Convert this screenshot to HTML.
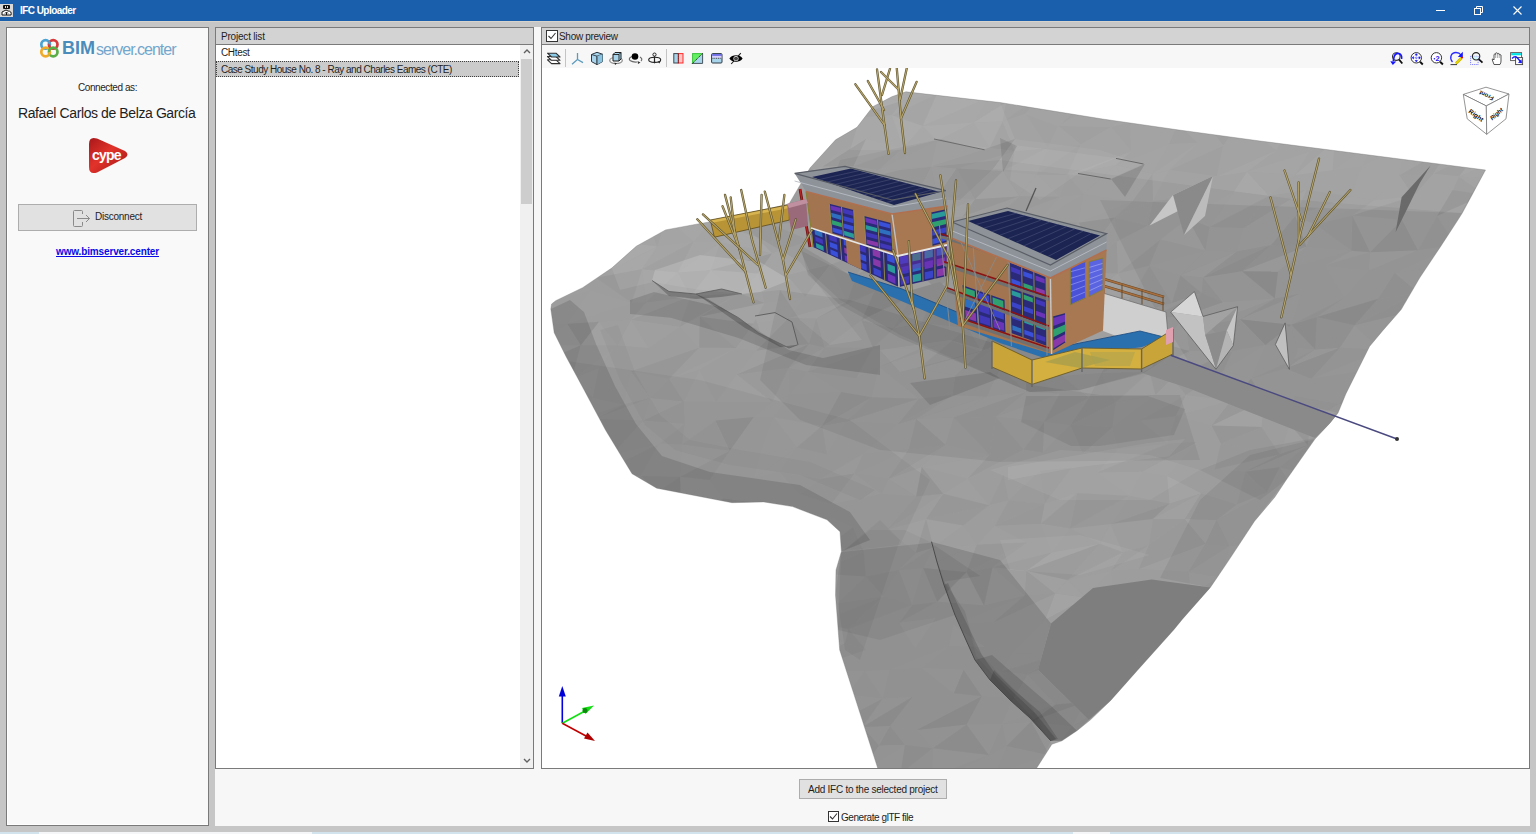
<!DOCTYPE html>
<html><head><meta charset="utf-8">
<style>
*{box-sizing:border-box;margin:0;padding:0}
html,body{width:1536px;height:834px;overflow:hidden;background:#c6c6c6;font-family:"Liberation Sans",sans-serif;color:#1e1e1e}
.abs{position:absolute}
#title{left:0;top:0;width:1536px;height:22px;background:#1a5fac;border-bottom:1px solid #d6d2cc}
#title .t{left:20px;top:5px;font-size:10px;color:#fff;font-weight:bold;letter-spacing:-0.55px;line-height:12px}
#leftp{left:6px;top:27px;width:203px;height:799px;border:1px solid #7a7a7a;background:#f9f9f9;box-shadow:inset 1px -1px 0 #fff}
#rightc{left:215px;top:27px;width:1315px;height:799px;background:#f7f7f7}
.panel{border:1px solid #7a7a7a;background:#fff}
.hdr{left:0;top:0;right:0;height:17px;background:#d3d3d3;border-bottom:1px solid #7a7a7a}
.txt{font-size:10px;line-height:12px;white-space:nowrap}
</style></head>
<body>
<div id="title" class="abs">
  <svg class="abs" style="left:0;top:4px" width="13" height="13" viewBox="0 0 13 13">
    <rect x="0" y="0" width="13" height="13" fill="#d8d8d8"/>
    <rect x="3" y="1" width="7" height="4" rx="1" fill="#111"/>
    <rect x="5" y="2" width="1" height="2" fill="#ddd"/><rect x="7" y="2" width="1" height="2" fill="#ddd"/>
    <path d="M2 11 Q1 7 4 7 Q6 5 8 7 Q12 7 11 11 Z" fill="#fff" stroke="#111" stroke-width="1"/>
    <path d="M6.5 11 V8.5 M5 9.5 L6.5 8 L8 9.5" stroke="#111" stroke-width="1" fill="none"/>
  </svg>
  <div class="abs t">IFC Uploader</div>
  <div class="abs" style="left:1436px;top:10px;width:9px;height:1px;background:#fff"></div>
  <svg class="abs" style="left:1473px;top:5px" width="11" height="11" viewBox="0 0 11 11">
    <rect x="1.5" y="3.5" width="6" height="6" fill="none" stroke="#fff"/>
    <path d="M3.5 3.5 V1.5 H9.5 V7.5 H7.5" fill="none" stroke="#fff"/>
  </svg>
  <svg class="abs" style="left:1512px;top:5px" width="11" height="11" viewBox="0 0 11 11">
    <path d="M1.5 1.5 L9.5 9.5 M9.5 1.5 L1.5 9.5" stroke="#fff" stroke-width="1.1"/>
  </svg>
</div>

<div id="leftp" class="abs">
  <svg class="abs" style="left:32px;top:10px" width="21" height="21" viewBox="0 0 21 21">
    <g fill="none" stroke-width="2.7">
      <circle cx="6.6" cy="6.4" r="4.3" stroke="#4aa3d2"/>
      <circle cx="14.2" cy="6.4" r="4.3" stroke="#d63a3c"/>
      <circle cx="6.6" cy="14" r="4.3" stroke="#efaa2a"/>
      <circle cx="14.2" cy="14" r="4.3" stroke="#5aae46"/>
      <path d="M9.6 3.4 A4.3 4.3 0 0 1 10.9 6.4" stroke="#4aa3d2"/>
      <path d="M10.9 14 A4.3 4.3 0 0 1 9.6 17" stroke="#efaa2a"/>
    </g>
  </svg>
  <div class="abs" style="left:55px;top:9px;font-size:18px;font-weight:bold;color:#4a8dbd;line-height:22px;letter-spacing:0px">BIM</div>
  <div class="abs" style="left:89px;top:12px;font-size:16px;color:#73a6cc;line-height:20px;letter-spacing:-1px">server.center</div>
  <div class="abs txt" style="left:71px;top:54px;letter-spacing:-0.42px">Connected as:</div>
  <div class="abs" style="left:11px;top:77px;font-size:14px;line-height:16px;letter-spacing:-0.4px;white-space:nowrap">Rafael Carlos de Belza Garc&iacute;a</div>
  <svg class="abs" style="left:81px;top:108px" width="42" height="39" viewBox="0 0 42 39">
    <defs><linearGradient id="cg" x1="0" y1="0" x2="1" y2="1"><stop offset="0" stop-color="#a8171a"/><stop offset="0.45" stop-color="#e2332a"/><stop offset="1" stop-color="#9e1417"/></linearGradient></defs>
    <path d="M1 8 Q1 0 9 2.5 L37 15 Q42 18.5 37 22 L9 36.5 Q1 39 1 31 Z" fill="url(#cg)"/>
    <text x="4" y="24" font-family="Liberation Sans" font-weight="bold" font-size="14" fill="#fff" letter-spacing="-0.8">cype</text>
  </svg>
  <div class="abs" style="left:11px;top:176px;width:179px;height:27px;background:#e1e1e1;border:1px solid #adadad"></div>
  <svg class="abs" style="left:66px;top:182px" width="18" height="17" viewBox="0 0 18 17">
    <path d="M9.5 4 V1.5 Q9.5 0.5 8.5 0.5 H1.5 Q0.5 0.5 0.5 1.5 V15.5 Q0.5 16.5 1.5 16.5 H8.5 Q9.5 16.5 9.5 15.5 V12" fill="none" stroke="#8a8a8a" stroke-width="1"/>
    <path d="M4 8.5 H16.5 M13 5 L16.5 8.5 L13 12" fill="none" stroke="#8a8a8a" stroke-width="1"/>
  </svg>
  <div class="abs txt" style="left:88px;top:183px;letter-spacing:-0.25px">Disconnect</div>
  <div class="abs txt" style="left:49px;top:218px;font-weight:bold;color:#0a0ae6;text-decoration:underline;letter-spacing:-0.14px">www.bimserver.center</div>
</div>
<div id="rightc" class="abs"></div>

<!-- list panel -->
<div id="listp" class="abs panel" style="left:215px;top:27px;width:319px;height:742px">
  <div class="abs hdr"></div>
  <div class="abs txt" style="left:5px;top:3px;letter-spacing:-0.2px">Project list</div>
  <div class="abs txt" style="left:5px;top:19px;letter-spacing:-0.35px">CHtest</div>
  <div class="abs" style="left:0px;top:33px;width:303px;height:16px;background:#cbcbcb;border:1px dotted #404040"></div>
  <div class="abs txt" style="left:5px;top:36px;letter-spacing:-0.5px">Case Study House No. 8 - Ray and Charles Eames (CTE)</div>
  <div class="abs" style="left:304px;top:17px;width:13px;height:723px;background:#f0f0f0"></div>
  <div class="abs" style="left:305px;top:31px;width:11px;height:145px;background:#cdcdcd"></div>
  <svg class="abs" style="left:307px;top:20px" width="8" height="6" viewBox="0 0 8 6"><path d="M1 5 L4 2 L7 5" fill="none" stroke="#606060" stroke-width="1.4"/></svg>
  <svg class="abs" style="left:307px;top:730px" width="8" height="6" viewBox="0 0 8 6"><path d="M1 1 L4 4 L7 1" fill="none" stroke="#606060" stroke-width="1.4"/></svg>
</div>

<!-- preview panel -->
<div id="prevp" class="abs panel" style="left:541px;top:27px;width:989px;height:742px">
  <div class="abs hdr"></div>
  <svg class="abs" style="left:4px;top:2px" width="12" height="12" viewBox="0 0 12 12"><rect x="0.5" y="0.5" width="11" height="11" fill="#fff" stroke="#333"/><path d="M2.5 6 L5 8.5 L9.5 3" fill="none" stroke="#333" stroke-width="1.1"/></svg>
  <div class="abs txt" style="left:17px;top:3px;letter-spacing:-0.3px">Show preview</div>
  <div class="abs" style="left:0;top:17px;width:987px;height:23px;background:#f7f7f7"></div>
  <div id="view" class="abs" style="left:0;top:40px;width:987px;height:700px;background:#fff;overflow:hidden"></div>
</div>
<!-- SCENE -->
<svg class="abs" style="left:542px;top:68px" width="987" height="700" viewBox="542 68 987 700">
<defs><clipPath id="tc"><polygon points="551.6,304.0 555.7,300.7 582.6,287.7 611.8,268.0 636.3,246.2 665.6,229.9 696.5,224.2 711.0,221.7 789.0,204.0 810.0,168.0 835.6,139.8 857.0,127.3 872.8,106.7 891.8,96.7 905.9,91.8 1000.0,102.5 1102.5,119.0 1179.0,130.0 1260.0,141.0 1485.5,170.0 1462.3,213.0 1457.9,220.0 1440.7,246.4 1419.6,278.0 1401.2,309.6 1382.7,330.7 1369.5,346.5 1359.0,367.6 1345.8,394.0 1338.0,413.0 1330.0,423.0 1315.0,439.0 1286.2,480.0 1274.7,497.3 1254.5,521.2 1228.6,560.6 1210.4,587.4 1182.6,619.0 1173.6,630.0 1137.5,670.3 1110.7,700.5 1090.5,719.8 1077.0,730.7 1062.0,740.8 1051.9,744.2 1038.5,765.2 1036.0,769.0 878.0,769.0 862.2,720.0 839.7,650.0 835.5,595.0 836.0,570.0 841.4,551.5 840.0,531.7 827.0,519.8 792.6,506.6 763.6,501.9 732.0,502.7 656.7,488.2 632.0,473.7 605.6,430.2 584.5,390.7 566.0,356.4 554.2,332.7 550.8,309.0"/></clipPath></defs>
<polygon points="551.6,304.0 555.7,300.7 582.6,287.7 611.8,268.0 636.3,246.2 665.6,229.9 696.5,224.2 711.0,221.7 789.0,204.0 810.0,168.0 835.6,139.8 857.0,127.3 872.8,106.7 891.8,96.7 905.9,91.8 1000.0,102.5 1102.5,119.0 1179.0,130.0 1260.0,141.0 1485.5,170.0 1462.3,213.0 1457.9,220.0 1440.7,246.4 1419.6,278.0 1401.2,309.6 1382.7,330.7 1369.5,346.5 1359.0,367.6 1345.8,394.0 1338.0,413.0 1330.0,423.0 1315.0,439.0 1286.2,480.0 1274.7,497.3 1254.5,521.2 1228.6,560.6 1210.4,587.4 1182.6,619.0 1173.6,630.0 1137.5,670.3 1110.7,700.5 1090.5,719.8 1077.0,730.7 1062.0,740.8 1051.9,744.2 1038.5,765.2 1036.0,769.0 878.0,769.0 862.2,720.0 839.7,650.0 835.5,595.0 836.0,570.0 841.4,551.5 840.0,531.7 827.0,519.8 792.6,506.6 763.6,501.9 732.0,502.7 656.7,488.2 632.0,473.7 605.6,430.2 584.5,390.7 566.0,356.4 554.2,332.7 550.8,309.0" fill="#9d9d9d"/>
<g clip-path="url(#tc)">
<polygon points="528.9,70.8 576.2,69.5 559.1,98.8" fill="#000000" fill-opacity="0.022"/>
<polygon points="576.2,69.5 574.8,91.6 559.1,98.8" fill="#ffffff" fill-opacity="0.054"/>
<polygon points="576.2,69.5 602.2,71.2 574.8,91.6" fill="#000000" fill-opacity="0.049"/>
<polygon points="602.2,71.2 610.4,89.0 574.8,91.6" fill="#000000" fill-opacity="0.020"/>
<polygon points="630.4,70.2 663.1,90.7 610.4,89.0" fill="#ffffff" fill-opacity="0.024"/>
<polygon points="630.4,70.2 677.1,74.1 663.1,90.7" fill="#000000" fill-opacity="0.044"/>
<polygon points="677.1,74.1 700.3,67.2 693.4,94.5" fill="#ffffff" fill-opacity="0.034"/>
<polygon points="700.3,67.2 720.6,98.4 693.4,94.5" fill="#ffffff" fill-opacity="0.033"/>
<polygon points="736.2,74.3 786.6,63.6 755.1,97.2" fill="#000000" fill-opacity="0.021"/>
<polygon points="786.6,63.6 829.6,76.5 790.8,94.1" fill="#000000" fill-opacity="0.025"/>
<polygon points="829.6,76.5 829.1,92.0 790.8,94.1" fill="#000000" fill-opacity="0.048"/>
<polygon points="829.6,76.5 857.7,71.6 829.1,92.0" fill="#000000" fill-opacity="0.036"/>
<polygon points="857.7,71.6 881.8,63.2 883.3,99.4" fill="#000000" fill-opacity="0.031"/>
<polygon points="881.8,63.2 903.3,100.6 883.3,99.4" fill="#ffffff" fill-opacity="0.026"/>
<polygon points="881.8,63.2 926.7,63.8 903.3,100.6" fill="#ffffff" fill-opacity="0.031"/>
<polygon points="926.7,63.8 937.1,93.7 903.3,100.6" fill="#ffffff" fill-opacity="0.024"/>
<polygon points="926.7,63.8 954.6,66.4 937.1,93.7" fill="#ffffff" fill-opacity="0.016"/>
<polygon points="954.6,66.4 988.5,97.2 937.1,93.7" fill="#ffffff" fill-opacity="0.027"/>
<polygon points="986.7,69.5 1006.4,102.1 988.5,97.2" fill="#ffffff" fill-opacity="0.021"/>
<polygon points="1032.6,74.8 1045.1,91.8 1006.4,102.1" fill="#ffffff" fill-opacity="0.019"/>
<polygon points="1032.6,74.8 1070.5,72.0 1045.1,91.8" fill="#000000" fill-opacity="0.024"/>
<polygon points="1070.5,72.0 1094.5,92.8 1045.1,91.8" fill="#000000" fill-opacity="0.015"/>
<polygon points="1070.5,72.0 1106.0,72.3 1094.5,92.8" fill="#000000" fill-opacity="0.024"/>
<polygon points="1106.0,72.3 1119.1,89.2 1094.5,92.8" fill="#ffffff" fill-opacity="0.020"/>
<polygon points="1106.0,72.3 1141.0,66.9 1119.1,89.2" fill="#ffffff" fill-opacity="0.012"/>
<polygon points="1141.0,66.9 1150.2,96.4 1119.1,89.2" fill="#000000" fill-opacity="0.019"/>
<polygon points="1141.0,66.9 1189.9,76.9 1150.2,96.4" fill="#000000" fill-opacity="0.023"/>
<polygon points="1189.9,76.9 1189.8,96.6 1150.2,96.4" fill="#000000" fill-opacity="0.014"/>
<polygon points="1189.9,76.9 1222.2,72.9 1189.8,96.6" fill="#ffffff" fill-opacity="0.021"/>
<polygon points="1245.6,66.2 1279.0,95.0 1228.9,94.5" fill="#000000" fill-opacity="0.016"/>
<polygon points="1280.9,64.0 1305.8,100.3 1279.0,95.0" fill="#ffffff" fill-opacity="0.038"/>
<polygon points="1280.9,64.0 1328.4,68.6 1305.8,100.3" fill="#000000" fill-opacity="0.016"/>
<polygon points="1328.4,68.6 1366.3,68.4 1332.4,90.4" fill="#ffffff" fill-opacity="0.040"/>
<polygon points="1366.3,68.4 1385.8,99.6 1332.4,90.4" fill="#ffffff" fill-opacity="0.017"/>
<polygon points="1366.3,68.4 1405.0,74.9 1385.8,99.6" fill="#000000" fill-opacity="0.027"/>
<polygon points="1405.0,74.9 1406.0,90.9 1385.8,99.6" fill="#ffffff" fill-opacity="0.026"/>
<polygon points="1405.0,74.9 1418.0,65.9 1406.0,90.9" fill="#000000" fill-opacity="0.030"/>
<polygon points="1418.0,65.9 1453.7,101.4 1406.0,90.9" fill="#ffffff" fill-opacity="0.013"/>
<polygon points="1418.0,65.9 1475.8,69.6 1453.7,101.4" fill="#000000" fill-opacity="0.060"/>
<polygon points="1475.8,69.6 1476.7,101.5 1453.7,101.4" fill="#000000" fill-opacity="0.023"/>
<polygon points="1475.8,69.6 1513.5,68.6 1476.7,101.5" fill="#ffffff" fill-opacity="0.022"/>
<polygon points="1513.5,68.6 1529.2,96.6 1476.7,101.5" fill="#000000" fill-opacity="0.014"/>
<polygon points="1513.5,68.6 1527.8,71.8 1529.2,96.6" fill="#000000" fill-opacity="0.017"/>
<polygon points="1580.7,66.8 1600.1,67.7 1580.9,101.7" fill="#000000" fill-opacity="0.016"/>
<polygon points="1600.1,67.7 1621.7,98.1 1580.9,101.7" fill="#ffffff" fill-opacity="0.043"/>
<polygon points="559.1,98.8 574.8,91.6 524.2,124.9" fill="#ffffff" fill-opacity="0.036"/>
<polygon points="574.8,91.6 610.4,89.0 568.3,117.5" fill="#000000" fill-opacity="0.027"/>
<polygon points="610.4,89.0 594.2,123.5 568.3,117.5" fill="#000000" fill-opacity="0.012"/>
<polygon points="663.1,90.7 693.4,94.5 627.7,116.6" fill="#ffffff" fill-opacity="0.038"/>
<polygon points="693.4,94.5 675.4,125.3 627.7,116.6" fill="#000000" fill-opacity="0.012"/>
<polygon points="755.1,97.2 756.0,116.3 712.7,117.3" fill="#000000" fill-opacity="0.016"/>
<polygon points="790.8,94.1 770.4,117.2 756.0,116.3" fill="#ffffff" fill-opacity="0.028"/>
<polygon points="883.3,99.4 846.2,118.6 816.7,114.2" fill="#000000" fill-opacity="0.031"/>
<polygon points="883.3,99.4 903.3,100.6 846.2,118.6" fill="#ffffff" fill-opacity="0.043"/>
<polygon points="903.3,100.6 891.7,115.2 846.2,118.6" fill="#000000" fill-opacity="0.032"/>
<polygon points="937.1,93.7 922.7,125.9 891.7,115.2" fill="#000000" fill-opacity="0.021"/>
<polygon points="937.1,93.7 988.5,97.2 922.7,125.9" fill="#ffffff" fill-opacity="0.036"/>
<polygon points="988.5,97.2 1006.4,102.1 973.5,122.6" fill="#000000" fill-opacity="0.012"/>
<polygon points="1006.4,102.1 1002.6,121.6 973.5,122.6" fill="#ffffff" fill-opacity="0.045"/>
<polygon points="1045.1,91.8 1025.4,113.9 1002.6,121.6" fill="#000000" fill-opacity="0.018"/>
<polygon points="1094.5,92.8 1119.1,89.2 1058.4,126.1" fill="#000000" fill-opacity="0.018"/>
<polygon points="1150.2,96.4 1130.5,122.3 1110.8,126.9" fill="#ffffff" fill-opacity="0.017"/>
<polygon points="1150.2,96.4 1189.8,96.6 1130.5,122.3" fill="#ffffff" fill-opacity="0.018"/>
<polygon points="1189.8,96.6 1177.6,123.6 1130.5,122.3" fill="#ffffff" fill-opacity="0.020"/>
<polygon points="1228.9,94.5 1209.7,127.4 1177.6,123.6" fill="#ffffff" fill-opacity="0.019"/>
<polygon points="1279.0,95.0 1239.8,121.0 1209.7,127.4" fill="#ffffff" fill-opacity="0.028"/>
<polygon points="1305.8,100.3 1332.4,90.4 1291.7,126.0" fill="#ffffff" fill-opacity="0.029"/>
<polygon points="1332.4,90.4 1327.7,123.3 1291.7,126.0" fill="#000000" fill-opacity="0.036"/>
<polygon points="1332.4,90.4 1385.8,99.6 1327.7,123.3" fill="#000000" fill-opacity="0.023"/>
<polygon points="1385.8,99.6 1365.0,126.2 1327.7,123.3" fill="#000000" fill-opacity="0.019"/>
<polygon points="1406.0,90.9 1390.4,123.0 1365.0,126.2" fill="#000000" fill-opacity="0.029"/>
<polygon points="1406.0,90.9 1453.7,101.4 1390.4,123.0" fill="#000000" fill-opacity="0.028"/>
<polygon points="1453.7,101.4 1439.6,125.6 1390.4,123.0" fill="#000000" fill-opacity="0.045"/>
<polygon points="1476.7,101.5 1464.0,124.5 1439.6,125.6" fill="#000000" fill-opacity="0.018"/>
<polygon points="1476.7,101.5 1529.2,96.6 1464.0,124.5" fill="#ffffff" fill-opacity="0.052"/>
<polygon points="1529.2,96.6 1510.7,121.4 1464.0,124.5" fill="#ffffff" fill-opacity="0.019"/>
<polygon points="1529.2,96.6 1554.1,89.7 1510.7,121.4" fill="#000000" fill-opacity="0.027"/>
<polygon points="1554.1,89.7 1541.0,118.8 1510.7,121.4" fill="#ffffff" fill-opacity="0.031"/>
<polygon points="1580.9,101.7 1576.0,121.9 1541.0,118.8" fill="#ffffff" fill-opacity="0.026"/>
<polygon points="1580.9,101.7 1621.7,98.1 1576.0,121.9" fill="#000000" fill-opacity="0.026"/>
<polygon points="1621.7,98.1 1599.9,122.4 1576.0,121.9" fill="#ffffff" fill-opacity="0.028"/>
<polygon points="524.2,124.9 568.3,117.5 559.8,150.9" fill="#ffffff" fill-opacity="0.026"/>
<polygon points="568.3,117.5 594.2,123.5 589.5,144.0" fill="#000000" fill-opacity="0.020"/>
<polygon points="627.7,116.6 654.6,150.3 625.6,146.7" fill="#ffffff" fill-opacity="0.057"/>
<polygon points="627.7,116.6 675.4,125.3 654.6,150.3" fill="#ffffff" fill-opacity="0.043"/>
<polygon points="675.4,125.3 682.0,149.1 654.6,150.3" fill="#ffffff" fill-opacity="0.036"/>
<polygon points="770.4,117.2 816.7,114.2 804.8,145.6" fill="#ffffff" fill-opacity="0.020"/>
<polygon points="891.7,115.2 922.7,125.9 903.2,148.1" fill="#ffffff" fill-opacity="0.030"/>
<polygon points="922.7,125.9 973.5,122.6 936.9,141.0" fill="#ffffff" fill-opacity="0.036"/>
<polygon points="973.5,122.6 1002.6,121.6 989.7,147.8" fill="#ffffff" fill-opacity="0.025"/>
<polygon points="1002.6,121.6 1014.6,151.1 989.7,147.8" fill="#000000" fill-opacity="0.033"/>
<polygon points="1025.4,113.9 1058.4,126.1 1047.8,147.9" fill="#000000" fill-opacity="0.015"/>
<polygon points="1058.4,126.1 1110.8,126.9 1080.8,144.6" fill="#000000" fill-opacity="0.022"/>
<polygon points="1110.8,126.9 1130.5,122.3 1131.3,151.4" fill="#000000" fill-opacity="0.016"/>
<polygon points="1177.6,123.6 1198.0,143.0 1169.1,144.0" fill="#000000" fill-opacity="0.023"/>
<polygon points="1209.7,127.4 1239.8,121.0 1223.3,145.6" fill="#000000" fill-opacity="0.030"/>
<polygon points="1239.8,121.0 1291.7,126.0 1276.1,150.5" fill="#ffffff" fill-opacity="0.030"/>
<polygon points="1291.7,126.0 1327.7,123.3 1309.1,151.9" fill="#ffffff" fill-opacity="0.013"/>
<polygon points="1327.7,123.3 1334.6,141.0 1309.1,151.9" fill="#ffffff" fill-opacity="0.015"/>
<polygon points="1327.7,123.3 1365.0,126.2 1334.6,141.0" fill="#000000" fill-opacity="0.019"/>
<polygon points="1365.0,126.2 1374.8,142.5 1334.6,141.0" fill="#ffffff" fill-opacity="0.031"/>
<polygon points="1365.0,126.2 1390.4,123.0 1374.8,142.5" fill="#ffffff" fill-opacity="0.060"/>
<polygon points="1390.4,123.0 1405.1,144.4 1374.8,142.5" fill="#000000" fill-opacity="0.024"/>
<polygon points="1390.4,123.0 1439.6,125.6 1405.1,144.4" fill="#ffffff" fill-opacity="0.051"/>
<polygon points="1439.6,125.6 1451.0,145.5 1405.1,144.4" fill="#000000" fill-opacity="0.017"/>
<polygon points="1439.6,125.6 1464.0,124.5 1451.0,145.5" fill="#ffffff" fill-opacity="0.035"/>
<polygon points="1464.0,124.5 1479.6,150.3 1451.0,145.5" fill="#000000" fill-opacity="0.043"/>
<polygon points="1464.0,124.5 1510.7,121.4 1479.6,150.3" fill="#ffffff" fill-opacity="0.027"/>
<polygon points="1510.7,121.4 1541.0,118.8 1531.6,144.9" fill="#000000" fill-opacity="0.030"/>
<polygon points="1541.0,118.8 1545.8,139.0 1531.6,144.9" fill="#000000" fill-opacity="0.019"/>
<polygon points="1541.0,118.8 1576.0,121.9 1545.8,139.0" fill="#000000" fill-opacity="0.025"/>
<polygon points="1576.0,121.9 1600.9,139.2 1545.8,139.0" fill="#000000" fill-opacity="0.021"/>
<polygon points="559.8,150.9 589.5,144.0 525.4,174.9" fill="#000000" fill-opacity="0.059"/>
<polygon points="625.6,146.7 654.6,150.3 600.9,164.1" fill="#ffffff" fill-opacity="0.040"/>
<polygon points="654.6,150.3 645.9,167.1 600.9,164.1" fill="#000000" fill-opacity="0.043"/>
<polygon points="682.0,149.1 716.7,147.0 665.4,164.5" fill="#ffffff" fill-opacity="0.017"/>
<polygon points="716.7,147.0 713.1,170.1 665.4,164.5" fill="#000000" fill-opacity="0.032"/>
<polygon points="716.7,147.0 763.5,141.8 713.1,170.1" fill="#000000" fill-opacity="0.031"/>
<polygon points="804.8,145.6 789.4,177.2 749.1,173.0" fill="#000000" fill-opacity="0.043"/>
<polygon points="838.7,151.5 866.1,138.8 822.4,166.6" fill="#ffffff" fill-opacity="0.018"/>
<polygon points="866.1,138.8 853.4,166.3 822.4,166.6" fill="#000000" fill-opacity="0.062"/>
<polygon points="866.1,138.8 903.2,148.1 853.4,166.3" fill="#ffffff" fill-opacity="0.012"/>
<polygon points="903.2,148.1 878.3,170.4 853.4,166.3" fill="#000000" fill-opacity="0.021"/>
<polygon points="936.9,141.0 931.1,166.3 878.3,170.4" fill="#ffffff" fill-opacity="0.019"/>
<polygon points="936.9,141.0 989.7,147.8 931.1,166.3" fill="#ffffff" fill-opacity="0.040"/>
<polygon points="1014.6,151.1 1002.7,171.1 956.5,168.6" fill="#ffffff" fill-opacity="0.031"/>
<polygon points="1014.6,151.1 1047.8,147.9 1002.7,171.1" fill="#000000" fill-opacity="0.021"/>
<polygon points="1047.8,147.9 1080.8,144.6 1036.7,174.4" fill="#000000" fill-opacity="0.012"/>
<polygon points="1080.8,144.6 1067.4,174.9 1036.7,174.4" fill="#000000" fill-opacity="0.023"/>
<polygon points="1131.3,151.4 1115.7,165.0 1067.4,174.9" fill="#ffffff" fill-opacity="0.048"/>
<polygon points="1169.1,144.0 1152.4,173.9 1115.7,165.0" fill="#ffffff" fill-opacity="0.012"/>
<polygon points="1198.0,143.0 1169.1,170.1 1152.4,173.9" fill="#ffffff" fill-opacity="0.027"/>
<polygon points="1223.3,145.6 1217.0,176.5 1169.1,170.1" fill="#000000" fill-opacity="0.021"/>
<polygon points="1276.1,150.5 1247.0,171.8 1217.0,176.5" fill="#ffffff" fill-opacity="0.034"/>
<polygon points="1309.1,151.9 1295.1,175.0 1247.0,171.8" fill="#ffffff" fill-opacity="0.029"/>
<polygon points="1334.6,141.0 1332.7,170.3 1295.1,175.0" fill="#ffffff" fill-opacity="0.048"/>
<polygon points="1374.8,142.5 1361.6,166.7 1332.7,170.3" fill="#ffffff" fill-opacity="0.016"/>
<polygon points="1405.1,144.4 1399.3,175.3 1361.6,166.7" fill="#ffffff" fill-opacity="0.020"/>
<polygon points="1451.0,145.5 1433.4,173.8 1399.3,175.3" fill="#000000" fill-opacity="0.035"/>
<polygon points="1479.6,150.3 1459.1,176.4 1433.4,173.8" fill="#000000" fill-opacity="0.028"/>
<polygon points="1479.6,150.3 1531.6,144.9 1459.1,176.4" fill="#ffffff" fill-opacity="0.035"/>
<polygon points="1531.6,144.9 1513.5,177.5 1459.1,176.4" fill="#ffffff" fill-opacity="0.019"/>
<polygon points="1545.8,139.0 1538.9,174.9 1513.5,177.5" fill="#ffffff" fill-opacity="0.016"/>
<polygon points="1545.8,139.0 1600.9,139.2 1538.9,174.9" fill="#000000" fill-opacity="0.061"/>
<polygon points="1600.9,139.2 1569.7,176.5 1538.9,174.9" fill="#ffffff" fill-opacity="0.037"/>
<polygon points="1600.9,139.2 1633.0,146.6 1569.7,176.5" fill="#000000" fill-opacity="0.015"/>
<polygon points="1633.0,146.6 1618.5,168.7 1569.7,176.5" fill="#ffffff" fill-opacity="0.016"/>
<polygon points="525.4,174.9 554.5,165.7 538.0,195.2" fill="#ffffff" fill-opacity="0.061"/>
<polygon points="554.5,165.7 585.2,199.8 538.0,195.2" fill="#000000" fill-opacity="0.038"/>
<polygon points="645.9,167.1 663.4,189.9 619.7,189.4" fill="#000000" fill-opacity="0.040"/>
<polygon points="645.9,167.1 665.4,164.5 663.4,189.9" fill="#000000" fill-opacity="0.022"/>
<polygon points="665.4,164.5 699.2,191.4 663.4,189.9" fill="#ffffff" fill-opacity="0.035"/>
<polygon points="665.4,164.5 713.1,170.1 699.2,191.4" fill="#000000" fill-opacity="0.014"/>
<polygon points="713.1,170.1 724.0,200.0 699.2,191.4" fill="#ffffff" fill-opacity="0.013"/>
<polygon points="713.1,170.1 749.1,173.0 724.0,200.0" fill="#000000" fill-opacity="0.032"/>
<polygon points="749.1,173.0 755.4,191.1 724.0,200.0" fill="#000000" fill-opacity="0.021"/>
<polygon points="749.1,173.0 789.4,177.2 755.4,191.1" fill="#000000" fill-opacity="0.043"/>
<polygon points="789.4,177.2 822.4,166.6 800.4,199.1" fill="#ffffff" fill-opacity="0.028"/>
<polygon points="878.3,170.4 931.1,166.3 918.8,190.2" fill="#ffffff" fill-opacity="0.013"/>
<polygon points="931.1,166.3 937.3,196.4 918.8,190.2" fill="#ffffff" fill-opacity="0.046"/>
<polygon points="931.1,166.3 956.5,168.6 937.3,196.4" fill="#ffffff" fill-opacity="0.053"/>
<polygon points="956.5,168.6 975.0,199.2 937.3,196.4" fill="#000000" fill-opacity="0.013"/>
<polygon points="956.5,168.6 1002.7,171.1 975.0,199.2" fill="#000000" fill-opacity="0.030"/>
<polygon points="1002.7,171.1 1019.3,196.3 975.0,199.2" fill="#ffffff" fill-opacity="0.046"/>
<polygon points="1002.7,171.1 1036.7,174.4 1019.3,196.3" fill="#ffffff" fill-opacity="0.023"/>
<polygon points="1036.7,174.4 1060.2,196.8 1019.3,196.3" fill="#ffffff" fill-opacity="0.029"/>
<polygon points="1036.7,174.4 1067.4,174.9 1060.2,196.8" fill="#ffffff" fill-opacity="0.015"/>
<polygon points="1067.4,174.9 1115.7,165.0 1083.5,194.3" fill="#ffffff" fill-opacity="0.023"/>
<polygon points="1115.7,165.0 1132.3,201.6 1083.5,194.3" fill="#ffffff" fill-opacity="0.027"/>
<polygon points="1115.7,165.0 1152.4,173.9 1132.3,201.6" fill="#ffffff" fill-opacity="0.028"/>
<polygon points="1152.4,173.9 1153.0,200.9 1132.3,201.6" fill="#000000" fill-opacity="0.025"/>
<polygon points="1152.4,173.9 1169.1,170.1 1153.0,200.9" fill="#ffffff" fill-opacity="0.025"/>
<polygon points="1247.0,171.8 1268.9,196.0 1233.8,191.8" fill="#ffffff" fill-opacity="0.055"/>
<polygon points="1247.0,171.8 1295.1,175.0 1268.9,196.0" fill="#ffffff" fill-opacity="0.014"/>
<polygon points="1361.6,166.7 1373.6,200.2 1351.3,196.2" fill="#ffffff" fill-opacity="0.014"/>
<polygon points="1361.6,166.7 1399.3,175.3 1373.6,200.2" fill="#ffffff" fill-opacity="0.021"/>
<polygon points="1399.3,175.3 1413.5,195.9 1373.6,200.2" fill="#ffffff" fill-opacity="0.020"/>
<polygon points="1399.3,175.3 1433.4,173.8 1413.5,195.9" fill="#000000" fill-opacity="0.030"/>
<polygon points="1459.1,176.4 1484.9,194.8 1452.6,189.9" fill="#000000" fill-opacity="0.029"/>
<polygon points="1538.9,174.9 1569.7,176.5 1550.5,195.6" fill="#000000" fill-opacity="0.015"/>
<polygon points="1569.7,176.5 1583.0,195.1 1550.5,195.6" fill="#ffffff" fill-opacity="0.037"/>
<polygon points="1569.7,176.5 1618.5,168.7 1583.0,195.1" fill="#ffffff" fill-opacity="0.025"/>
<polygon points="1618.5,168.7 1635.6,201.6 1583.0,195.1" fill="#000000" fill-opacity="0.013"/>
<polygon points="585.2,199.8 558.6,222.9 529.4,218.6" fill="#ffffff" fill-opacity="0.018"/>
<polygon points="585.2,199.8 619.7,189.4 558.6,222.9" fill="#000000" fill-opacity="0.018"/>
<polygon points="619.7,189.4 663.4,189.9 612.2,216.0" fill="#ffffff" fill-opacity="0.017"/>
<polygon points="663.4,189.9 644.7,214.5 612.2,216.0" fill="#000000" fill-opacity="0.061"/>
<polygon points="663.4,189.9 699.2,191.4 644.7,214.5" fill="#000000" fill-opacity="0.031"/>
<polygon points="699.2,191.4 724.0,200.0 666.7,217.4" fill="#ffffff" fill-opacity="0.015"/>
<polygon points="724.0,200.0 714.5,218.7 666.7,217.4" fill="#000000" fill-opacity="0.022"/>
<polygon points="724.0,200.0 755.4,191.1 714.5,218.7" fill="#ffffff" fill-opacity="0.021"/>
<polygon points="755.4,191.1 742.5,222.9 714.5,218.7" fill="#ffffff" fill-opacity="0.053"/>
<polygon points="844.2,198.7 808.9,221.3 772.5,224.4" fill="#000000" fill-opacity="0.024"/>
<polygon points="844.2,198.7 882.7,195.9 808.9,221.3" fill="#ffffff" fill-opacity="0.013"/>
<polygon points="882.7,195.9 918.8,190.2 848.0,217.0" fill="#ffffff" fill-opacity="0.018"/>
<polygon points="918.8,190.2 890.7,220.3 848.0,217.0" fill="#ffffff" fill-opacity="0.034"/>
<polygon points="975.0,199.2 962.7,216.4 923.0,220.0" fill="#ffffff" fill-opacity="0.041"/>
<polygon points="975.0,199.2 1019.3,196.3 962.7,216.4" fill="#000000" fill-opacity="0.034"/>
<polygon points="1019.3,196.3 1060.2,196.8 990.9,223.0" fill="#000000" fill-opacity="0.015"/>
<polygon points="1060.2,196.8 1083.5,194.3 1037.3,221.6" fill="#ffffff" fill-opacity="0.020"/>
<polygon points="1083.5,194.3 1132.3,201.6 1078.4,222.8" fill="#ffffff" fill-opacity="0.018"/>
<polygon points="1132.3,201.6 1153.0,200.9 1114.6,217.5" fill="#000000" fill-opacity="0.017"/>
<polygon points="1153.0,200.9 1147.8,225.5 1114.6,217.5" fill="#000000" fill-opacity="0.015"/>
<polygon points="1153.0,200.9 1207.2,196.3 1147.8,225.5" fill="#000000" fill-opacity="0.032"/>
<polygon points="1233.8,191.8 1209.6,227.1 1187.7,218.6" fill="#ffffff" fill-opacity="0.020"/>
<polygon points="1233.8,191.8 1268.9,196.0 1209.6,227.1" fill="#ffffff" fill-opacity="0.023"/>
<polygon points="1268.9,196.0 1243.2,228.2 1209.6,227.1" fill="#000000" fill-opacity="0.021"/>
<polygon points="1268.9,196.0 1306.5,189.4 1243.2,228.2" fill="#000000" fill-opacity="0.025"/>
<polygon points="1306.5,189.4 1295.3,216.1 1243.2,228.2" fill="#ffffff" fill-opacity="0.015"/>
<polygon points="1306.5,189.4 1351.3,196.2 1295.3,216.1" fill="#000000" fill-opacity="0.021"/>
<polygon points="1351.3,196.2 1373.6,200.2 1315.7,224.4" fill="#ffffff" fill-opacity="0.015"/>
<polygon points="1373.6,200.2 1413.5,195.9 1352.2,215.6" fill="#ffffff" fill-opacity="0.042"/>
<polygon points="1413.5,195.9 1402.0,220.1 1352.2,215.6" fill="#000000" fill-opacity="0.018"/>
<polygon points="1452.6,189.9 1484.9,194.8 1437.0,216.0" fill="#000000" fill-opacity="0.068"/>
<polygon points="1531.0,201.9 1490.4,217.0 1463.7,223.8" fill="#ffffff" fill-opacity="0.014"/>
<polygon points="1550.5,195.6 1542.4,227.0 1490.4,217.0" fill="#000000" fill-opacity="0.017"/>
<polygon points="1550.5,195.6 1583.0,195.1 1542.4,227.0" fill="#000000" fill-opacity="0.012"/>
<polygon points="1583.0,195.1 1635.6,201.6 1585.2,215.8" fill="#ffffff" fill-opacity="0.018"/>
<polygon points="529.4,218.6 558.6,222.9 548.1,249.0" fill="#ffffff" fill-opacity="0.029"/>
<polygon points="558.6,222.9 576.5,240.4 548.1,249.0" fill="#ffffff" fill-opacity="0.021"/>
<polygon points="558.6,222.9 612.2,216.0 576.5,240.4" fill="#000000" fill-opacity="0.017"/>
<polygon points="612.2,216.0 610.5,239.9 576.5,240.4" fill="#ffffff" fill-opacity="0.025"/>
<polygon points="612.2,216.0 644.7,214.5 610.5,239.9" fill="#000000" fill-opacity="0.053"/>
<polygon points="644.7,214.5 666.7,217.4 657.2,246.6" fill="#000000" fill-opacity="0.023"/>
<polygon points="666.7,217.4 714.5,218.7 693.6,241.5" fill="#ffffff" fill-opacity="0.028"/>
<polygon points="742.5,222.9 772.2,253.3 720.4,242.3" fill="#ffffff" fill-opacity="0.031"/>
<polygon points="742.5,222.9 772.5,224.4 772.2,253.3" fill="#000000" fill-opacity="0.018"/>
<polygon points="772.5,224.4 810.2,240.7 772.2,253.3" fill="#000000" fill-opacity="0.019"/>
<polygon points="772.5,224.4 808.9,221.3 810.2,240.7" fill="#ffffff" fill-opacity="0.023"/>
<polygon points="808.9,221.3 825.5,252.7 810.2,240.7" fill="#ffffff" fill-opacity="0.015"/>
<polygon points="808.9,221.3 848.0,217.0 825.5,252.7" fill="#000000" fill-opacity="0.033"/>
<polygon points="848.0,217.0 890.7,220.3 871.1,250.1" fill="#ffffff" fill-opacity="0.019"/>
<polygon points="962.7,216.4 982.4,239.6 944.4,245.4" fill="#000000" fill-opacity="0.016"/>
<polygon points="962.7,216.4 990.9,223.0 982.4,239.6" fill="#ffffff" fill-opacity="0.020"/>
<polygon points="990.9,223.0 1020.8,251.2 982.4,239.6" fill="#000000" fill-opacity="0.037"/>
<polygon points="1037.3,221.6 1044.4,245.8 1020.8,251.2" fill="#ffffff" fill-opacity="0.051"/>
<polygon points="1037.3,221.6 1078.4,222.8 1044.4,245.8" fill="#000000" fill-opacity="0.025"/>
<polygon points="1078.4,222.8 1114.6,217.5 1093.7,245.1" fill="#000000" fill-opacity="0.053"/>
<polygon points="1114.6,217.5 1116.7,241.7 1093.7,245.1" fill="#000000" fill-opacity="0.019"/>
<polygon points="1114.6,217.5 1147.8,225.5 1116.7,241.7" fill="#000000" fill-opacity="0.027"/>
<polygon points="1187.7,218.6 1205.4,250.6 1160.3,239.6" fill="#ffffff" fill-opacity="0.044"/>
<polygon points="1187.7,218.6 1209.6,227.1 1205.4,250.6" fill="#000000" fill-opacity="0.022"/>
<polygon points="1243.2,228.2 1271.1,245.1 1236.9,251.5" fill="#ffffff" fill-opacity="0.015"/>
<polygon points="1243.2,228.2 1295.3,216.1 1271.1,245.1" fill="#ffffff" fill-opacity="0.021"/>
<polygon points="1295.3,216.1 1306.4,246.5 1271.1,245.1" fill="#000000" fill-opacity="0.037"/>
<polygon points="1295.3,216.1 1315.7,224.4 1306.4,246.5" fill="#ffffff" fill-opacity="0.052"/>
<polygon points="1315.7,224.4 1352.2,215.6 1351.6,250.7" fill="#000000" fill-opacity="0.017"/>
<polygon points="1352.2,215.6 1370.2,252.2 1351.6,250.7" fill="#000000" fill-opacity="0.039"/>
<polygon points="1402.0,220.1 1417.9,250.3 1370.2,252.2" fill="#000000" fill-opacity="0.042"/>
<polygon points="1437.0,216.0 1455.6,245.1 1417.9,250.3" fill="#000000" fill-opacity="0.014"/>
<polygon points="1463.7,223.8 1493.5,251.7 1455.6,245.1" fill="#000000" fill-opacity="0.018"/>
<polygon points="1490.4,217.0 1524.7,250.1 1493.5,251.7" fill="#ffffff" fill-opacity="0.053"/>
<polygon points="1490.4,217.0 1542.4,227.0 1524.7,250.1" fill="#ffffff" fill-opacity="0.028"/>
<polygon points="1542.4,227.0 1585.2,215.8 1562.4,245.1" fill="#000000" fill-opacity="0.023"/>
<polygon points="1585.2,215.8 1597.3,240.4 1562.4,245.1" fill="#ffffff" fill-opacity="0.035"/>
<polygon points="1585.2,215.8 1610.1,224.8 1597.3,240.4" fill="#000000" fill-opacity="0.040"/>
<polygon points="1610.1,224.8 1624.2,246.0 1597.3,240.4" fill="#000000" fill-opacity="0.033"/>
<polygon points="548.1,249.0 576.5,240.4 518.3,269.6" fill="#ffffff" fill-opacity="0.031"/>
<polygon points="576.5,240.4 569.3,273.3 518.3,269.6" fill="#000000" fill-opacity="0.014"/>
<polygon points="576.5,240.4 610.5,239.9 569.3,273.3" fill="#ffffff" fill-opacity="0.032"/>
<polygon points="610.5,239.9 595.6,277.8 569.3,273.3" fill="#ffffff" fill-opacity="0.014"/>
<polygon points="610.5,239.9 657.2,246.6 595.6,277.8" fill="#ffffff" fill-opacity="0.052"/>
<polygon points="657.2,246.6 642.0,269.3 595.6,277.8" fill="#ffffff" fill-opacity="0.042"/>
<polygon points="657.2,246.6 693.6,241.5 642.0,269.3" fill="#ffffff" fill-opacity="0.014"/>
<polygon points="693.6,241.5 677.8,272.6 642.0,269.3" fill="#000000" fill-opacity="0.015"/>
<polygon points="693.6,241.5 720.4,242.3 677.8,272.6" fill="#ffffff" fill-opacity="0.014"/>
<polygon points="720.4,242.3 710.8,270.1 677.8,272.6" fill="#ffffff" fill-opacity="0.033"/>
<polygon points="772.2,253.3 758.0,273.6 710.8,270.1" fill="#000000" fill-opacity="0.068"/>
<polygon points="825.5,252.7 871.1,250.1 829.5,264.9" fill="#ffffff" fill-opacity="0.027"/>
<polygon points="871.1,250.1 856.8,274.9 829.5,264.9" fill="#000000" fill-opacity="0.030"/>
<polygon points="903.8,245.9 884.2,270.2 856.8,274.9" fill="#000000" fill-opacity="0.047"/>
<polygon points="903.8,245.9 944.4,245.4 884.2,270.2" fill="#000000" fill-opacity="0.051"/>
<polygon points="944.4,245.4 915.2,267.3 884.2,270.2" fill="#000000" fill-opacity="0.024"/>
<polygon points="944.4,245.4 982.4,239.6 915.2,267.3" fill="#000000" fill-opacity="0.018"/>
<polygon points="982.4,239.6 959.0,266.0 915.2,267.3" fill="#000000" fill-opacity="0.021"/>
<polygon points="982.4,239.6 1020.8,251.2 959.0,266.0" fill="#000000" fill-opacity="0.016"/>
<polygon points="1020.8,251.2 992.0,277.3 959.0,266.0" fill="#ffffff" fill-opacity="0.015"/>
<polygon points="1020.8,251.2 1044.4,245.8 992.0,277.3" fill="#ffffff" fill-opacity="0.014"/>
<polygon points="1093.7,245.1 1081.2,272.6 1035.2,271.7" fill="#000000" fill-opacity="0.016"/>
<polygon points="1093.7,245.1 1116.7,241.7 1081.2,272.6" fill="#000000" fill-opacity="0.023"/>
<polygon points="1116.7,241.7 1117.9,273.5 1081.2,272.6" fill="#000000" fill-opacity="0.033"/>
<polygon points="1160.3,239.6 1149.4,265.7 1117.9,273.5" fill="#000000" fill-opacity="0.027"/>
<polygon points="1205.4,250.6 1180.3,275.2 1149.4,265.7" fill="#ffffff" fill-opacity="0.017"/>
<polygon points="1205.4,250.6 1236.9,251.5 1180.3,275.2" fill="#ffffff" fill-opacity="0.013"/>
<polygon points="1236.9,251.5 1203.1,277.6 1180.3,275.2" fill="#ffffff" fill-opacity="0.031"/>
<polygon points="1236.9,251.5 1271.1,245.1 1203.1,277.6" fill="#000000" fill-opacity="0.022"/>
<polygon points="1271.1,245.1 1241.8,271.2 1203.1,277.6" fill="#000000" fill-opacity="0.052"/>
<polygon points="1271.1,245.1 1306.4,246.5 1241.8,271.2" fill="#000000" fill-opacity="0.026"/>
<polygon points="1306.4,246.5 1278.1,271.5 1241.8,271.2" fill="#ffffff" fill-opacity="0.047"/>
<polygon points="1306.4,246.5 1351.6,250.7 1278.1,271.5" fill="#ffffff" fill-opacity="0.017"/>
<polygon points="1351.6,250.7 1370.2,252.2 1324.7,265.4" fill="#ffffff" fill-opacity="0.031"/>
<polygon points="1370.2,252.2 1417.9,250.3 1368.7,270.5" fill="#ffffff" fill-opacity="0.039"/>
<polygon points="1455.6,245.1 1426.8,268.6 1394.6,273.0" fill="#ffffff" fill-opacity="0.016"/>
<polygon points="1455.6,245.1 1493.5,251.7 1426.8,268.6" fill="#000000" fill-opacity="0.027"/>
<polygon points="1493.5,251.7 1524.7,250.1 1469.7,272.4" fill="#ffffff" fill-opacity="0.046"/>
<polygon points="1524.7,250.1 1562.4,245.1 1496.8,274.6" fill="#000000" fill-opacity="0.026"/>
<polygon points="1597.3,240.4 1567.9,265.2 1533.1,264.8" fill="#000000" fill-opacity="0.018"/>
<polygon points="1624.2,246.0 1601.8,275.2 1567.9,265.2" fill="#ffffff" fill-opacity="0.029"/>
<polygon points="569.3,273.3 590.0,290.5 545.4,302.4" fill="#ffffff" fill-opacity="0.021"/>
<polygon points="595.6,277.8 642.0,269.3 631.7,303.0" fill="#000000" fill-opacity="0.018"/>
<polygon points="642.0,269.3 645.8,302.5 631.7,303.0" fill="#ffffff" fill-opacity="0.023"/>
<polygon points="642.0,269.3 677.8,272.6 645.8,302.5" fill="#ffffff" fill-opacity="0.032"/>
<polygon points="677.8,272.6 710.8,270.1 690.3,296.5" fill="#000000" fill-opacity="0.021"/>
<polygon points="710.8,270.1 739.4,293.2 690.3,296.5" fill="#ffffff" fill-opacity="0.012"/>
<polygon points="758.0,273.6 764.6,302.9 739.4,293.2" fill="#ffffff" fill-opacity="0.027"/>
<polygon points="786.8,275.3 829.5,264.9 805.3,296.4" fill="#000000" fill-opacity="0.033"/>
<polygon points="829.5,264.9 847.5,301.2 805.3,296.4" fill="#ffffff" fill-opacity="0.015"/>
<polygon points="856.8,274.9 874.5,291.4 847.5,301.2" fill="#000000" fill-opacity="0.030"/>
<polygon points="856.8,274.9 884.2,270.2 874.5,291.4" fill="#000000" fill-opacity="0.035"/>
<polygon points="884.2,270.2 911.0,296.2 874.5,291.4" fill="#000000" fill-opacity="0.043"/>
<polygon points="884.2,270.2 915.2,267.3 911.0,296.2" fill="#ffffff" fill-opacity="0.015"/>
<polygon points="915.2,267.3 959.0,266.0 936.9,290.5" fill="#000000" fill-opacity="0.078"/>
<polygon points="959.0,266.0 980.7,291.5 936.9,290.5" fill="#000000" fill-opacity="0.021"/>
<polygon points="959.0,266.0 992.0,277.3 980.7,291.5" fill="#000000" fill-opacity="0.015"/>
<polygon points="1035.2,271.7 1081.2,272.6 1050.9,293.5" fill="#ffffff" fill-opacity="0.017"/>
<polygon points="1081.2,272.6 1090.0,295.7 1050.9,293.5" fill="#ffffff" fill-opacity="0.024"/>
<polygon points="1117.9,273.5 1130.7,297.2 1090.0,295.7" fill="#ffffff" fill-opacity="0.037"/>
<polygon points="1149.4,265.7 1171.9,303.1 1130.7,297.2" fill="#000000" fill-opacity="0.020"/>
<polygon points="1180.3,275.2 1201.6,293.1 1171.9,303.1" fill="#000000" fill-opacity="0.034"/>
<polygon points="1203.1,277.6 1222.7,302.3 1201.6,293.1" fill="#000000" fill-opacity="0.025"/>
<polygon points="1241.8,271.2 1278.1,271.5 1274.8,298.5" fill="#000000" fill-opacity="0.058"/>
<polygon points="1324.7,265.4 1368.7,270.5 1344.4,297.7" fill="#ffffff" fill-opacity="0.017"/>
<polygon points="1394.6,273.0 1418.1,292.5 1378.2,298.7" fill="#000000" fill-opacity="0.024"/>
<polygon points="1394.6,273.0 1426.8,268.6 1418.1,292.5" fill="#ffffff" fill-opacity="0.017"/>
<polygon points="1426.8,268.6 1442.0,303.5 1418.1,292.5" fill="#ffffff" fill-opacity="0.018"/>
<polygon points="1426.8,268.6 1469.7,272.4 1442.0,303.5" fill="#000000" fill-opacity="0.035"/>
<polygon points="1469.7,272.4 1494.0,302.1 1442.0,303.5" fill="#000000" fill-opacity="0.017"/>
<polygon points="1469.7,272.4 1496.8,274.6 1494.0,302.1" fill="#000000" fill-opacity="0.028"/>
<polygon points="1496.8,274.6 1508.9,290.7 1494.0,302.1" fill="#ffffff" fill-opacity="0.020"/>
<polygon points="1496.8,274.6 1533.1,264.8 1508.9,290.7" fill="#000000" fill-opacity="0.014"/>
<polygon points="1533.1,264.8 1550.5,295.8 1508.9,290.7" fill="#000000" fill-opacity="0.030"/>
<polygon points="1533.1,264.8 1567.9,265.2 1550.5,295.8" fill="#ffffff" fill-opacity="0.035"/>
<polygon points="590.0,290.5 631.7,303.0 567.2,323.8" fill="#ffffff" fill-opacity="0.021"/>
<polygon points="645.8,302.5 690.3,296.5 631.1,319.8" fill="#ffffff" fill-opacity="0.044"/>
<polygon points="690.3,296.5 679.9,326.7 631.1,319.8" fill="#000000" fill-opacity="0.013"/>
<polygon points="690.3,296.5 739.4,293.2 679.9,326.7" fill="#000000" fill-opacity="0.031"/>
<polygon points="739.4,293.2 764.6,302.9 699.8,316.7" fill="#000000" fill-opacity="0.027"/>
<polygon points="764.6,302.9 753.4,323.7 699.8,316.7" fill="#ffffff" fill-opacity="0.062"/>
<polygon points="764.6,302.9 805.3,296.4 753.4,323.7" fill="#ffffff" fill-opacity="0.015"/>
<polygon points="805.3,296.4 788.5,318.0 753.4,323.7" fill="#ffffff" fill-opacity="0.014"/>
<polygon points="847.5,301.2 816.2,318.6 788.5,318.0" fill="#ffffff" fill-opacity="0.046"/>
<polygon points="847.5,301.2 874.5,291.4 816.2,318.6" fill="#000000" fill-opacity="0.024"/>
<polygon points="874.5,291.4 911.0,296.2 861.4,320.2" fill="#000000" fill-opacity="0.040"/>
<polygon points="911.0,296.2 893.7,328.8 861.4,320.2" fill="#ffffff" fill-opacity="0.029"/>
<polygon points="936.9,290.5 921.8,322.7 893.7,328.8" fill="#ffffff" fill-opacity="0.042"/>
<polygon points="980.7,291.5 967.9,327.9 921.8,322.7" fill="#000000" fill-opacity="0.025"/>
<polygon points="980.7,291.5 1014.6,299.2 967.9,327.9" fill="#000000" fill-opacity="0.017"/>
<polygon points="1014.6,299.2 996.3,320.2 967.9,327.9" fill="#ffffff" fill-opacity="0.019"/>
<polygon points="1014.6,299.2 1050.9,293.5 996.3,320.2" fill="#000000" fill-opacity="0.020"/>
<polygon points="1050.9,293.5 1090.0,295.7 1024.3,327.3" fill="#000000" fill-opacity="0.017"/>
<polygon points="1090.0,295.7 1059.9,316.2 1024.3,327.3" fill="#000000" fill-opacity="0.017"/>
<polygon points="1090.0,295.7 1130.7,297.2 1059.9,316.2" fill="#000000" fill-opacity="0.013"/>
<polygon points="1130.7,297.2 1107.5,321.8 1059.9,316.2" fill="#ffffff" fill-opacity="0.038"/>
<polygon points="1130.7,297.2 1171.9,303.1 1107.5,321.8" fill="#000000" fill-opacity="0.026"/>
<polygon points="1171.9,303.1 1201.6,293.1 1146.4,319.2" fill="#ffffff" fill-opacity="0.019"/>
<polygon points="1201.6,293.1 1184.6,316.1 1146.4,319.2" fill="#000000" fill-opacity="0.018"/>
<polygon points="1201.6,293.1 1222.7,302.3 1184.6,316.1" fill="#000000" fill-opacity="0.036"/>
<polygon points="1222.7,302.3 1207.1,324.3 1184.6,316.1" fill="#ffffff" fill-opacity="0.035"/>
<polygon points="1222.7,302.3 1274.8,298.5 1207.1,324.3" fill="#ffffff" fill-opacity="0.041"/>
<polygon points="1274.8,298.5 1300.6,293.6 1240.0,319.3" fill="#000000" fill-opacity="0.029"/>
<polygon points="1300.6,293.6 1291.4,324.7 1240.0,319.3" fill="#ffffff" fill-opacity="0.020"/>
<polygon points="1344.4,297.7 1316.8,317.0 1291.4,324.7" fill="#000000" fill-opacity="0.020"/>
<polygon points="1378.2,298.7 1354.6,325.2 1316.8,317.0" fill="#000000" fill-opacity="0.057"/>
<polygon points="1378.2,298.7 1418.1,292.5 1354.6,325.2" fill="#000000" fill-opacity="0.020"/>
<polygon points="1418.1,292.5 1390.8,316.6 1354.6,325.2" fill="#000000" fill-opacity="0.029"/>
<polygon points="1418.1,292.5 1442.0,303.5 1390.8,316.6" fill="#000000" fill-opacity="0.031"/>
<polygon points="1442.0,303.5 1435.0,323.0 1390.8,316.6" fill="#ffffff" fill-opacity="0.014"/>
<polygon points="1494.0,302.1 1476.0,328.2 1435.0,323.0" fill="#ffffff" fill-opacity="0.040"/>
<polygon points="1494.0,302.1 1508.9,290.7 1476.0,328.2" fill="#000000" fill-opacity="0.064"/>
<polygon points="1508.9,290.7 1511.9,321.1 1476.0,328.2" fill="#000000" fill-opacity="0.016"/>
<polygon points="1508.9,290.7 1550.5,295.8 1511.9,321.1" fill="#000000" fill-opacity="0.020"/>
<polygon points="1550.5,295.8 1545.3,319.3 1511.9,321.1" fill="#ffffff" fill-opacity="0.031"/>
<polygon points="1550.5,295.8 1595.0,291.2 1545.3,319.3" fill="#ffffff" fill-opacity="0.024"/>
<polygon points="1629.0,290.8 1620.4,327.5 1569.6,320.6" fill="#000000" fill-opacity="0.018"/>
<polygon points="520.1,324.5 567.2,323.8 542.0,345.3" fill="#000000" fill-opacity="0.013"/>
<polygon points="567.2,323.8 599.0,321.7 580.8,345.3" fill="#000000" fill-opacity="0.060"/>
<polygon points="599.0,321.7 617.5,345.6 580.8,345.3" fill="#ffffff" fill-opacity="0.045"/>
<polygon points="599.0,321.7 631.1,319.8 617.5,345.6" fill="#ffffff" fill-opacity="0.017"/>
<polygon points="631.1,319.8 648.7,348.1 617.5,345.6" fill="#ffffff" fill-opacity="0.049"/>
<polygon points="631.1,319.8 679.9,326.7 648.7,348.1" fill="#ffffff" fill-opacity="0.029"/>
<polygon points="679.9,326.7 699.8,316.7 699.1,347.8" fill="#ffffff" fill-opacity="0.019"/>
<polygon points="699.8,316.7 736.1,348.1 699.1,347.8" fill="#000000" fill-opacity="0.040"/>
<polygon points="699.8,316.7 753.4,323.7 736.1,348.1" fill="#000000" fill-opacity="0.024"/>
<polygon points="753.4,323.7 756.2,350.8 736.1,348.1" fill="#ffffff" fill-opacity="0.020"/>
<polygon points="788.5,318.0 809.1,344.1 756.2,350.8" fill="#000000" fill-opacity="0.039"/>
<polygon points="816.2,318.6 824.5,347.4 809.1,344.1" fill="#000000" fill-opacity="0.031"/>
<polygon points="861.4,320.2 873.1,348.1 824.5,347.4" fill="#ffffff" fill-opacity="0.037"/>
<polygon points="861.4,320.2 893.7,328.8 873.1,348.1" fill="#000000" fill-opacity="0.027"/>
<polygon points="893.7,328.8 921.8,322.7 919.2,349.3" fill="#ffffff" fill-opacity="0.013"/>
<polygon points="967.9,327.9 981.1,351.2 951.3,341.1" fill="#000000" fill-opacity="0.020"/>
<polygon points="996.3,320.2 1006.0,341.3 981.1,351.2" fill="#000000" fill-opacity="0.057"/>
<polygon points="1024.3,327.3 1057.7,352.8 1006.0,341.3" fill="#ffffff" fill-opacity="0.030"/>
<polygon points="1024.3,327.3 1059.9,316.2 1057.7,352.8" fill="#000000" fill-opacity="0.027"/>
<polygon points="1059.9,316.2 1107.5,321.8 1078.0,349.1" fill="#ffffff" fill-opacity="0.016"/>
<polygon points="1107.5,321.8 1115.5,350.6 1078.0,349.1" fill="#ffffff" fill-opacity="0.029"/>
<polygon points="1107.5,321.8 1146.4,319.2 1115.5,350.6" fill="#ffffff" fill-opacity="0.027"/>
<polygon points="1146.4,319.2 1163.6,343.6 1115.5,350.6" fill="#000000" fill-opacity="0.022"/>
<polygon points="1184.6,316.1 1189.3,350.9 1163.6,343.6" fill="#ffffff" fill-opacity="0.041"/>
<polygon points="1207.1,324.3 1240.0,319.3 1232.5,350.9" fill="#000000" fill-opacity="0.021"/>
<polygon points="1240.0,319.3 1265.5,344.9 1232.5,350.9" fill="#000000" fill-opacity="0.016"/>
<polygon points="1240.0,319.3 1291.4,324.7 1265.5,344.9" fill="#000000" fill-opacity="0.071"/>
<polygon points="1291.4,324.7 1315.2,349.6 1265.5,344.9" fill="#000000" fill-opacity="0.013"/>
<polygon points="1291.4,324.7 1316.8,317.0 1315.2,349.6" fill="#000000" fill-opacity="0.053"/>
<polygon points="1316.8,317.0 1339.8,347.7 1315.2,349.6" fill="#000000" fill-opacity="0.025"/>
<polygon points="1316.8,317.0 1354.6,325.2 1339.8,347.7" fill="#000000" fill-opacity="0.024"/>
<polygon points="1354.6,325.2 1381.3,350.1 1339.8,347.7" fill="#ffffff" fill-opacity="0.032"/>
<polygon points="1354.6,325.2 1390.8,316.6 1381.3,350.1" fill="#ffffff" fill-opacity="0.018"/>
<polygon points="1390.8,316.6 1435.0,323.0 1422.0,345.9" fill="#000000" fill-opacity="0.013"/>
<polygon points="1435.0,323.0 1455.8,349.5 1422.0,345.9" fill="#000000" fill-opacity="0.034"/>
<polygon points="1476.0,328.2 1492.5,351.5 1455.8,349.5" fill="#000000" fill-opacity="0.020"/>
<polygon points="1511.9,321.1 1528.0,352.6 1492.5,351.5" fill="#ffffff" fill-opacity="0.022"/>
<polygon points="1545.3,319.3 1569.6,320.6 1567.0,349.2" fill="#000000" fill-opacity="0.024"/>
<polygon points="1569.6,320.6 1592.6,350.1 1567.0,349.2" fill="#ffffff" fill-opacity="0.024"/>
<polygon points="1569.6,320.6 1620.4,327.5 1592.6,350.1" fill="#ffffff" fill-opacity="0.012"/>
<polygon points="1620.4,327.5 1635.3,346.1 1592.6,350.1" fill="#ffffff" fill-opacity="0.016"/>
<polygon points="542.0,345.3 580.8,345.3 528.1,367.4" fill="#ffffff" fill-opacity="0.038"/>
<polygon points="580.8,345.3 571.8,379.3 528.1,367.4" fill="#000000" fill-opacity="0.039"/>
<polygon points="617.5,345.6 599.0,367.7 571.8,379.3" fill="#ffffff" fill-opacity="0.015"/>
<polygon points="699.1,347.8 669.0,379.0 630.9,371.3" fill="#000000" fill-opacity="0.037"/>
<polygon points="736.1,348.1 699.4,369.7 669.0,379.0" fill="#ffffff" fill-opacity="0.027"/>
<polygon points="756.2,350.8 809.1,344.1 736.8,374.5" fill="#ffffff" fill-opacity="0.020"/>
<polygon points="809.1,344.1 788.6,367.9 736.8,374.5" fill="#000000" fill-opacity="0.042"/>
<polygon points="824.5,347.4 807.5,371.8 788.6,367.9" fill="#ffffff" fill-opacity="0.036"/>
<polygon points="873.1,348.1 856.0,378.1 807.5,371.8" fill="#000000" fill-opacity="0.020"/>
<polygon points="873.1,348.1 919.2,349.3 856.0,378.1" fill="#ffffff" fill-opacity="0.012"/>
<polygon points="919.2,349.3 951.3,341.1 878.9,366.9" fill="#000000" fill-opacity="0.020"/>
<polygon points="951.3,341.1 981.1,351.2 918.4,368.4" fill="#000000" fill-opacity="0.040"/>
<polygon points="981.1,351.2 955.6,375.4 918.4,368.4" fill="#ffffff" fill-opacity="0.015"/>
<polygon points="981.1,351.2 1006.0,341.3 955.6,375.4" fill="#000000" fill-opacity="0.029"/>
<polygon points="1006.0,341.3 1000.3,368.5 955.6,375.4" fill="#000000" fill-opacity="0.014"/>
<polygon points="1006.0,341.3 1057.7,352.8 1000.3,368.5" fill="#ffffff" fill-opacity="0.017"/>
<polygon points="1078.0,349.1 1062.1,376.0 1026.4,369.3" fill="#ffffff" fill-opacity="0.032"/>
<polygon points="1078.0,349.1 1115.5,350.6 1062.1,376.0" fill="#ffffff" fill-opacity="0.036"/>
<polygon points="1115.5,350.6 1101.5,373.1 1062.1,376.0" fill="#ffffff" fill-opacity="0.049"/>
<polygon points="1115.5,350.6 1163.6,343.6 1101.5,373.1" fill="#000000" fill-opacity="0.014"/>
<polygon points="1163.6,343.6 1149.6,372.1 1101.5,373.1" fill="#ffffff" fill-opacity="0.021"/>
<polygon points="1163.6,343.6 1189.3,350.9 1149.6,372.1" fill="#000000" fill-opacity="0.040"/>
<polygon points="1189.3,350.9 1172.3,377.8 1149.6,372.1" fill="#ffffff" fill-opacity="0.018"/>
<polygon points="1189.3,350.9 1232.5,350.9 1172.3,377.8" fill="#ffffff" fill-opacity="0.030"/>
<polygon points="1232.5,350.9 1223.9,370.2 1172.3,377.8" fill="#000000" fill-opacity="0.018"/>
<polygon points="1265.5,344.9 1251.1,378.8 1223.9,370.2" fill="#ffffff" fill-opacity="0.019"/>
<polygon points="1315.2,349.6 1285.6,368.5 1251.1,378.8" fill="#000000" fill-opacity="0.016"/>
<polygon points="1315.2,349.6 1339.8,347.7 1285.6,368.5" fill="#ffffff" fill-opacity="0.035"/>
<polygon points="1339.8,347.7 1311.2,378.7 1285.6,368.5" fill="#000000" fill-opacity="0.032"/>
<polygon points="1381.3,350.1 1365.2,370.8 1311.2,378.7" fill="#ffffff" fill-opacity="0.022"/>
<polygon points="1422.0,345.9 1394.7,372.6 1365.2,370.8" fill="#ffffff" fill-opacity="0.037"/>
<polygon points="1422.0,345.9 1455.8,349.5 1394.7,372.6" fill="#ffffff" fill-opacity="0.035"/>
<polygon points="1455.8,349.5 1492.5,351.5 1424.6,379.3" fill="#ffffff" fill-opacity="0.042"/>
<polygon points="1492.5,351.5 1469.8,368.7 1424.6,379.3" fill="#ffffff" fill-opacity="0.017"/>
<polygon points="1492.5,351.5 1528.0,352.6 1469.8,368.7" fill="#000000" fill-opacity="0.030"/>
<polygon points="1567.0,349.2 1592.6,350.1 1534.9,376.6" fill="#000000" fill-opacity="0.041"/>
<polygon points="1592.6,350.1 1579.1,373.9 1534.9,376.6" fill="#ffffff" fill-opacity="0.054"/>
<polygon points="1592.6,350.1 1635.3,346.1 1579.1,373.9" fill="#000000" fill-opacity="0.038"/>
<polygon points="1635.3,346.1 1601.8,367.6 1579.1,373.9" fill="#000000" fill-opacity="0.028"/>
<polygon points="571.8,379.3 599.0,367.7 592.9,397.8" fill="#ffffff" fill-opacity="0.036"/>
<polygon points="630.9,371.3 650.4,398.1 623.3,404.5" fill="#ffffff" fill-opacity="0.017"/>
<polygon points="630.9,371.3 669.0,379.0 650.4,398.1" fill="#000000" fill-opacity="0.018"/>
<polygon points="669.0,379.0 683.6,401.4 650.4,398.1" fill="#000000" fill-opacity="0.031"/>
<polygon points="699.4,369.7 716.0,402.1 683.6,401.4" fill="#ffffff" fill-opacity="0.024"/>
<polygon points="736.8,374.5 772.3,402.1 716.0,402.1" fill="#ffffff" fill-opacity="0.029"/>
<polygon points="736.8,374.5 788.6,367.9 772.3,402.1" fill="#000000" fill-opacity="0.014"/>
<polygon points="788.6,367.9 790.0,394.4 772.3,402.1" fill="#ffffff" fill-opacity="0.017"/>
<polygon points="807.5,371.8 841.2,392.0 790.0,394.4" fill="#ffffff" fill-opacity="0.020"/>
<polygon points="878.9,366.9 918.9,398.8 871.5,397.2" fill="#ffffff" fill-opacity="0.029"/>
<polygon points="918.4,368.4 955.6,375.4 952.6,394.9" fill="#ffffff" fill-opacity="0.015"/>
<polygon points="955.6,375.4 986.9,396.4 952.6,394.9" fill="#000000" fill-opacity="0.022"/>
<polygon points="955.6,375.4 1000.3,368.5 986.9,396.4" fill="#000000" fill-opacity="0.020"/>
<polygon points="1000.3,368.5 1026.4,369.3 1026.0,391.9" fill="#ffffff" fill-opacity="0.030"/>
<polygon points="1026.4,369.3 1059.8,393.5 1026.0,391.9" fill="#000000" fill-opacity="0.026"/>
<polygon points="1026.4,369.3 1062.1,376.0 1059.8,393.5" fill="#000000" fill-opacity="0.025"/>
<polygon points="1062.1,376.0 1089.0,398.0 1059.8,393.5" fill="#000000" fill-opacity="0.024"/>
<polygon points="1101.5,373.1 1115.8,402.2 1089.0,398.0" fill="#000000" fill-opacity="0.026"/>
<polygon points="1101.5,373.1 1149.6,372.1 1115.8,402.2" fill="#000000" fill-opacity="0.020"/>
<polygon points="1149.6,372.1 1155.5,395.0 1115.8,402.2" fill="#ffffff" fill-opacity="0.012"/>
<polygon points="1149.6,372.1 1172.3,377.8 1155.5,395.0" fill="#000000" fill-opacity="0.026"/>
<polygon points="1172.3,377.8 1223.9,370.2 1185.8,394.9" fill="#000000" fill-opacity="0.029"/>
<polygon points="1223.9,370.2 1251.1,378.8 1231.2,400.6" fill="#ffffff" fill-opacity="0.012"/>
<polygon points="1251.1,378.8 1264.6,400.2 1231.2,400.6" fill="#000000" fill-opacity="0.048"/>
<polygon points="1365.2,370.8 1383.9,399.8 1339.1,404.1" fill="#000000" fill-opacity="0.031"/>
<polygon points="1394.7,372.6 1400.3,395.9 1383.9,399.8" fill="#ffffff" fill-opacity="0.015"/>
<polygon points="1394.7,372.6 1424.6,379.3 1400.3,395.9" fill="#ffffff" fill-opacity="0.030"/>
<polygon points="1424.6,379.3 1453.0,393.9 1400.3,395.9" fill="#000000" fill-opacity="0.033"/>
<polygon points="1424.6,379.3 1469.8,368.7 1453.0,393.9" fill="#000000" fill-opacity="0.015"/>
<polygon points="1469.8,368.7 1485.5,397.0 1453.0,393.9" fill="#000000" fill-opacity="0.033"/>
<polygon points="1490.3,372.0 1508.3,404.5 1485.5,397.0" fill="#000000" fill-opacity="0.026"/>
<polygon points="1490.3,372.0 1534.9,376.6 1508.3,404.5" fill="#000000" fill-opacity="0.024"/>
<polygon points="1534.9,376.6 1563.2,393.5 1508.3,404.5" fill="#ffffff" fill-opacity="0.018"/>
<polygon points="1534.9,376.6 1579.1,373.9 1563.2,393.5" fill="#ffffff" fill-opacity="0.053"/>
<polygon points="1579.1,373.9 1594.8,394.7 1563.2,393.5" fill="#000000" fill-opacity="0.050"/>
<polygon points="1579.1,373.9 1601.8,367.6 1594.8,394.7" fill="#ffffff" fill-opacity="0.039"/>
<polygon points="1601.8,367.6 1625.0,398.2 1594.8,394.7" fill="#000000" fill-opacity="0.022"/>
<polygon points="543.7,394.2 592.9,397.8 525.2,420.5" fill="#ffffff" fill-opacity="0.016"/>
<polygon points="592.9,397.8 623.3,404.5 563.4,425.1" fill="#ffffff" fill-opacity="0.029"/>
<polygon points="623.3,404.5 650.4,398.1 596.2,418.6" fill="#000000" fill-opacity="0.020"/>
<polygon points="650.4,398.1 683.6,401.4 643.6,420.4" fill="#ffffff" fill-opacity="0.018"/>
<polygon points="683.6,401.4 684.7,423.7 643.6,420.4" fill="#000000" fill-opacity="0.022"/>
<polygon points="772.3,402.1 790.0,394.4 753.8,417.1" fill="#ffffff" fill-opacity="0.014"/>
<polygon points="790.0,394.4 773.4,417.1 753.8,417.1" fill="#ffffff" fill-opacity="0.019"/>
<polygon points="841.2,392.0 871.5,397.2 822.3,425.7" fill="#000000" fill-opacity="0.051"/>
<polygon points="871.5,397.2 846.3,421.4 822.3,425.7" fill="#000000" fill-opacity="0.021"/>
<polygon points="871.5,397.2 918.9,398.8 846.3,421.4" fill="#000000" fill-opacity="0.037"/>
<polygon points="918.9,398.8 898.1,424.1 846.3,421.4" fill="#ffffff" fill-opacity="0.016"/>
<polygon points="918.9,398.8 952.6,394.9 898.1,424.1" fill="#000000" fill-opacity="0.026"/>
<polygon points="952.6,394.9 916.2,419.0 898.1,424.1" fill="#000000" fill-opacity="0.017"/>
<polygon points="952.6,394.9 986.9,396.4 916.2,419.0" fill="#ffffff" fill-opacity="0.012"/>
<polygon points="986.9,396.4 953.8,417.5 916.2,419.0" fill="#ffffff" fill-opacity="0.023"/>
<polygon points="986.9,396.4 1026.0,391.9 953.8,417.5" fill="#ffffff" fill-opacity="0.029"/>
<polygon points="1026.0,391.9 995.8,416.8 953.8,417.5" fill="#000000" fill-opacity="0.021"/>
<polygon points="1059.8,393.5 1044.1,421.8 995.8,416.8" fill="#ffffff" fill-opacity="0.025"/>
<polygon points="1059.8,393.5 1089.0,398.0 1044.1,421.8" fill="#000000" fill-opacity="0.021"/>
<polygon points="1089.0,398.0 1115.8,402.2 1070.3,424.9" fill="#000000" fill-opacity="0.029"/>
<polygon points="1115.8,402.2 1112.4,427.3 1070.3,424.9" fill="#000000" fill-opacity="0.016"/>
<polygon points="1115.8,402.2 1155.5,395.0 1112.4,427.3" fill="#ffffff" fill-opacity="0.016"/>
<polygon points="1185.8,394.9 1175.9,416.0 1139.3,420.4" fill="#000000" fill-opacity="0.014"/>
<polygon points="1185.8,394.9 1231.2,400.6 1175.9,416.0" fill="#ffffff" fill-opacity="0.036"/>
<polygon points="1231.2,400.6 1211.6,425.6 1175.9,416.0" fill="#ffffff" fill-opacity="0.018"/>
<polygon points="1231.2,400.6 1264.6,400.2 1211.6,425.6" fill="#000000" fill-opacity="0.030"/>
<polygon points="1264.6,400.2 1261.6,426.9 1211.6,425.6" fill="#ffffff" fill-opacity="0.051"/>
<polygon points="1294.5,396.1 1339.1,404.1 1289.8,424.3" fill="#000000" fill-opacity="0.012"/>
<polygon points="1339.1,404.1 1310.4,420.4 1289.8,424.3" fill="#000000" fill-opacity="0.014"/>
<polygon points="1339.1,404.1 1383.9,399.8 1310.4,420.4" fill="#ffffff" fill-opacity="0.015"/>
<polygon points="1383.9,399.8 1354.2,424.9 1310.4,420.4" fill="#000000" fill-opacity="0.035"/>
<polygon points="1400.3,395.9 1453.0,393.9 1384.6,421.1" fill="#ffffff" fill-opacity="0.041"/>
<polygon points="1485.5,397.0 1473.8,424.4 1430.2,426.8" fill="#ffffff" fill-opacity="0.012"/>
<polygon points="1485.5,397.0 1508.3,404.5 1473.8,424.4" fill="#ffffff" fill-opacity="0.014"/>
<polygon points="1508.3,404.5 1563.2,393.5 1493.8,426.5" fill="#000000" fill-opacity="0.058"/>
<polygon points="1594.8,394.7 1570.5,422.8 1547.7,423.5" fill="#ffffff" fill-opacity="0.016"/>
<polygon points="1625.0,398.2 1601.4,425.8 1570.5,422.8" fill="#000000" fill-opacity="0.013"/>
<polygon points="525.2,420.5 563.4,425.1 559.7,448.2" fill="#000000" fill-opacity="0.021"/>
<polygon points="563.4,425.1 589.2,452.7 559.7,448.2" fill="#000000" fill-opacity="0.024"/>
<polygon points="596.2,418.6 643.6,420.4 612.7,454.2" fill="#000000" fill-opacity="0.021"/>
<polygon points="684.7,423.7 682.0,444.4 659.1,443.8" fill="#000000" fill-opacity="0.016"/>
<polygon points="715.4,420.4 729.8,450.8 682.0,444.4" fill="#000000" fill-opacity="0.015"/>
<polygon points="715.4,420.4 753.8,417.1 729.8,450.8" fill="#000000" fill-opacity="0.062"/>
<polygon points="773.4,417.1 796.7,447.5 759.9,454.0" fill="#ffffff" fill-opacity="0.019"/>
<polygon points="773.4,417.1 822.3,425.7 796.7,447.5" fill="#ffffff" fill-opacity="0.031"/>
<polygon points="822.3,425.7 827.0,454.6 796.7,447.5" fill="#000000" fill-opacity="0.017"/>
<polygon points="822.3,425.7 846.3,421.4 827.0,454.6" fill="#ffffff" fill-opacity="0.014"/>
<polygon points="898.1,424.1 909.0,448.9 863.3,453.7" fill="#ffffff" fill-opacity="0.019"/>
<polygon points="898.1,424.1 916.2,419.0 909.0,448.9" fill="#ffffff" fill-opacity="0.020"/>
<polygon points="916.2,419.0 945.4,444.7 909.0,448.9" fill="#000000" fill-opacity="0.030"/>
<polygon points="916.2,419.0 953.8,417.5 945.4,444.7" fill="#ffffff" fill-opacity="0.035"/>
<polygon points="953.8,417.5 995.8,416.8 989.8,454.9" fill="#000000" fill-opacity="0.016"/>
<polygon points="995.8,416.8 1023.6,449.4 989.8,454.9" fill="#000000" fill-opacity="0.017"/>
<polygon points="1044.1,421.8 1042.9,452.5 1023.6,449.4" fill="#000000" fill-opacity="0.027"/>
<polygon points="1044.1,421.8 1070.3,424.9 1042.9,452.5" fill="#ffffff" fill-opacity="0.026"/>
<polygon points="1070.3,424.9 1112.4,427.3 1082.9,453.6" fill="#000000" fill-opacity="0.022"/>
<polygon points="1112.4,427.3 1117.8,449.0 1082.9,453.6" fill="#ffffff" fill-opacity="0.019"/>
<polygon points="1139.3,420.4 1175.9,416.0 1167.9,443.6" fill="#ffffff" fill-opacity="0.023"/>
<polygon points="1211.6,425.6 1261.6,426.9 1220.8,443.5" fill="#000000" fill-opacity="0.044"/>
<polygon points="1261.6,426.9 1279.7,454.2 1220.8,443.5" fill="#000000" fill-opacity="0.029"/>
<polygon points="1289.8,424.3 1307.8,445.3 1279.7,454.2" fill="#ffffff" fill-opacity="0.025"/>
<polygon points="1289.8,424.3 1310.4,420.4 1307.8,445.3" fill="#000000" fill-opacity="0.040"/>
<polygon points="1310.4,420.4 1354.2,424.9 1344.1,451.3" fill="#000000" fill-opacity="0.016"/>
<polygon points="1354.2,424.9 1384.6,421.1 1373.2,449.3" fill="#ffffff" fill-opacity="0.014"/>
<polygon points="1384.6,421.1 1419.3,441.2 1373.2,449.3" fill="#ffffff" fill-opacity="0.035"/>
<polygon points="1384.6,421.1 1430.2,426.8 1419.3,441.2" fill="#ffffff" fill-opacity="0.042"/>
<polygon points="1430.2,426.8 1440.8,447.6 1419.3,441.2" fill="#ffffff" fill-opacity="0.022"/>
<polygon points="1430.2,426.8 1473.8,424.4 1440.8,447.6" fill="#ffffff" fill-opacity="0.015"/>
<polygon points="1473.8,424.4 1493.8,426.5 1475.4,446.4" fill="#000000" fill-opacity="0.044"/>
<polygon points="1493.8,426.5 1547.7,423.5 1521.7,443.4" fill="#000000" fill-opacity="0.028"/>
<polygon points="1547.7,423.5 1556.5,444.7 1521.7,443.4" fill="#000000" fill-opacity="0.027"/>
<polygon points="1570.5,422.8 1593.6,445.6 1556.5,444.7" fill="#000000" fill-opacity="0.038"/>
<polygon points="1570.5,422.8 1601.4,425.8 1593.6,445.6" fill="#ffffff" fill-opacity="0.042"/>
<polygon points="1601.4,425.8 1631.4,441.5 1593.6,445.6" fill="#ffffff" fill-opacity="0.014"/>
<polygon points="612.7,454.2 659.1,443.8 601.3,472.0" fill="#ffffff" fill-opacity="0.016"/>
<polygon points="659.1,443.8 641.0,475.9 601.3,472.0" fill="#000000" fill-opacity="0.016"/>
<polygon points="682.0,444.4 729.8,450.8 680.2,476.7" fill="#ffffff" fill-opacity="0.018"/>
<polygon points="729.8,450.8 709.7,480.1 680.2,476.7" fill="#000000" fill-opacity="0.026"/>
<polygon points="759.9,454.0 796.7,447.5 754.1,478.2" fill="#ffffff" fill-opacity="0.015"/>
<polygon points="796.7,447.5 779.8,472.3 754.1,478.2" fill="#ffffff" fill-opacity="0.013"/>
<polygon points="863.3,453.7 854.6,473.6 819.6,478.9" fill="#ffffff" fill-opacity="0.032"/>
<polygon points="909.0,448.9 888.4,478.9 854.6,473.6" fill="#ffffff" fill-opacity="0.012"/>
<polygon points="909.0,448.9 945.4,444.7 888.4,478.9" fill="#000000" fill-opacity="0.022"/>
<polygon points="945.4,444.7 989.8,454.9 921.7,467.0" fill="#ffffff" fill-opacity="0.018"/>
<polygon points="989.8,454.9 967.4,478.8 921.7,467.0" fill="#ffffff" fill-opacity="0.025"/>
<polygon points="989.8,454.9 1023.6,449.4 967.4,478.8" fill="#000000" fill-opacity="0.023"/>
<polygon points="1117.8,449.0 1167.9,443.6 1097.0,472.5" fill="#ffffff" fill-opacity="0.024"/>
<polygon points="1167.9,443.6 1142.1,471.8 1097.0,472.5" fill="#000000" fill-opacity="0.020"/>
<polygon points="1167.9,443.6 1197.1,442.1 1142.1,471.8" fill="#000000" fill-opacity="0.023"/>
<polygon points="1197.1,442.1 1167.2,475.9 1142.1,471.8" fill="#ffffff" fill-opacity="0.018"/>
<polygon points="1220.8,443.5 1279.7,454.2 1214.6,469.5" fill="#000000" fill-opacity="0.027"/>
<polygon points="1279.7,454.2 1245.4,471.7 1214.6,469.5" fill="#ffffff" fill-opacity="0.025"/>
<polygon points="1279.7,454.2 1307.8,445.3 1245.4,471.7" fill="#000000" fill-opacity="0.026"/>
<polygon points="1307.8,445.3 1279.7,467.2 1245.4,471.7" fill="#ffffff" fill-opacity="0.027"/>
<polygon points="1373.2,449.3 1362.0,478.3 1331.9,479.7" fill="#ffffff" fill-opacity="0.019"/>
<polygon points="1419.3,441.2 1392.1,477.5 1362.0,478.3" fill="#000000" fill-opacity="0.041"/>
<polygon points="1419.3,441.2 1440.8,447.6 1392.1,477.5" fill="#000000" fill-opacity="0.017"/>
<polygon points="1440.8,447.6 1423.3,476.7 1392.1,477.5" fill="#000000" fill-opacity="0.051"/>
<polygon points="1475.4,446.4 1467.6,478.8 1423.3,476.7" fill="#ffffff" fill-opacity="0.022"/>
<polygon points="1475.4,446.4 1521.7,443.4 1467.6,478.8" fill="#ffffff" fill-opacity="0.024"/>
<polygon points="1521.7,443.4 1492.4,477.3 1467.6,478.8" fill="#000000" fill-opacity="0.032"/>
<polygon points="1521.7,443.4 1556.5,444.7 1492.4,477.3" fill="#ffffff" fill-opacity="0.050"/>
<polygon points="1556.5,444.7 1529.0,473.7 1492.4,477.3" fill="#ffffff" fill-opacity="0.043"/>
<polygon points="1593.6,445.6 1584.8,466.2 1529.0,473.7" fill="#000000" fill-opacity="0.047"/>
<polygon points="1593.6,445.6 1631.4,441.5 1584.8,466.2" fill="#000000" fill-opacity="0.021"/>
<polygon points="1631.4,441.5 1603.9,470.4 1584.8,466.2" fill="#ffffff" fill-opacity="0.024"/>
<polygon points="534.1,468.2 577.0,474.6 543.8,492.3" fill="#ffffff" fill-opacity="0.049"/>
<polygon points="577.0,474.6 593.5,502.8 543.8,492.3" fill="#000000" fill-opacity="0.013"/>
<polygon points="577.0,474.6 601.3,472.0 593.5,502.8" fill="#000000" fill-opacity="0.044"/>
<polygon points="601.3,472.0 617.5,496.4 593.5,502.8" fill="#000000" fill-opacity="0.023"/>
<polygon points="601.3,472.0 641.0,475.9 617.5,496.4" fill="#ffffff" fill-opacity="0.045"/>
<polygon points="641.0,475.9 680.2,476.7 658.1,492.0" fill="#000000" fill-opacity="0.033"/>
<polygon points="680.2,476.7 680.7,504.0 658.1,492.0" fill="#000000" fill-opacity="0.050"/>
<polygon points="680.2,476.7 709.7,480.1 680.7,504.0" fill="#ffffff" fill-opacity="0.015"/>
<polygon points="709.7,480.1 723.4,498.4 680.7,504.0" fill="#ffffff" fill-opacity="0.019"/>
<polygon points="779.8,472.3 819.6,478.9 799.3,494.3" fill="#000000" fill-opacity="0.013"/>
<polygon points="819.6,478.9 831.1,504.3 799.3,494.3" fill="#000000" fill-opacity="0.014"/>
<polygon points="819.6,478.9 854.6,473.6 831.1,504.3" fill="#000000" fill-opacity="0.014"/>
<polygon points="854.6,473.6 881.5,494.1 831.1,504.3" fill="#ffffff" fill-opacity="0.029"/>
<polygon points="888.4,478.9 916.1,496.4 881.5,494.1" fill="#ffffff" fill-opacity="0.024"/>
<polygon points="888.4,478.9 921.7,467.0 916.1,496.4" fill="#ffffff" fill-opacity="0.043"/>
<polygon points="921.7,467.0 943.3,493.8 916.1,496.4" fill="#000000" fill-opacity="0.054"/>
<polygon points="967.4,478.8 989.1,505.3 943.3,493.8" fill="#ffffff" fill-opacity="0.022"/>
<polygon points="1003.6,474.6 1008.8,500.3 989.1,505.3" fill="#000000" fill-opacity="0.014"/>
<polygon points="1040.0,470.5 1044.6,503.7 1008.8,500.3" fill="#000000" fill-opacity="0.013"/>
<polygon points="1040.0,470.5 1072.2,467.2 1044.6,503.7" fill="#000000" fill-opacity="0.020"/>
<polygon points="1097.0,472.5 1142.1,471.8 1129.4,495.8" fill="#ffffff" fill-opacity="0.021"/>
<polygon points="1167.2,475.9 1201.1,493.3 1169.6,503.6" fill="#ffffff" fill-opacity="0.072"/>
<polygon points="1245.4,471.7 1266.7,492.5 1236.7,504.5" fill="#000000" fill-opacity="0.017"/>
<polygon points="1245.4,471.7 1279.7,467.2 1266.7,492.5" fill="#000000" fill-opacity="0.037"/>
<polygon points="1279.7,467.2 1331.9,479.7 1297.4,495.7" fill="#ffffff" fill-opacity="0.034"/>
<polygon points="1331.9,479.7 1345.1,494.2 1297.4,495.7" fill="#000000" fill-opacity="0.043"/>
<polygon points="1331.9,479.7 1362.0,478.3 1345.1,494.2" fill="#000000" fill-opacity="0.018"/>
<polygon points="1362.0,478.3 1392.1,477.5 1368.3,494.7" fill="#000000" fill-opacity="0.016"/>
<polygon points="1392.1,477.5 1416.0,502.5 1368.3,494.7" fill="#ffffff" fill-opacity="0.012"/>
<polygon points="1423.3,476.7 1444.9,500.7 1416.0,502.5" fill="#000000" fill-opacity="0.026"/>
<polygon points="1467.6,478.8 1493.2,499.7 1444.9,500.7" fill="#000000" fill-opacity="0.012"/>
<polygon points="1467.6,478.8 1492.4,477.3 1493.2,499.7" fill="#ffffff" fill-opacity="0.013"/>
<polygon points="1492.4,477.3 1513.5,495.6 1493.2,499.7" fill="#000000" fill-opacity="0.060"/>
<polygon points="1529.0,473.7 1566.2,500.7 1513.5,495.6" fill="#ffffff" fill-opacity="0.031"/>
<polygon points="1584.8,466.2 1603.9,470.4 1586.6,500.4" fill="#000000" fill-opacity="0.013"/>
<polygon points="593.5,502.8 566.7,517.2 528.6,524.0" fill="#000000" fill-opacity="0.030"/>
<polygon points="593.5,502.8 617.5,496.4 566.7,517.2" fill="#000000" fill-opacity="0.028"/>
<polygon points="617.5,496.4 604.4,520.6 566.7,517.2" fill="#000000" fill-opacity="0.055"/>
<polygon points="658.1,492.0 680.7,504.0 632.0,527.8" fill="#ffffff" fill-opacity="0.025"/>
<polygon points="680.7,504.0 723.4,498.4 664.1,520.6" fill="#ffffff" fill-opacity="0.016"/>
<polygon points="723.4,498.4 716.1,520.0 664.1,520.6" fill="#000000" fill-opacity="0.032"/>
<polygon points="723.4,498.4 774.4,505.1 716.1,520.0" fill="#000000" fill-opacity="0.044"/>
<polygon points="774.4,505.1 740.7,524.3 716.1,520.0" fill="#000000" fill-opacity="0.014"/>
<polygon points="916.1,496.4 943.3,493.8 887.2,529.6" fill="#000000" fill-opacity="0.012"/>
<polygon points="943.3,493.8 989.1,505.3 926.0,519.1" fill="#000000" fill-opacity="0.035"/>
<polygon points="989.1,505.3 963.3,525.6 926.0,519.1" fill="#000000" fill-opacity="0.027"/>
<polygon points="1008.8,500.3 1044.6,503.7 994.6,525.8" fill="#000000" fill-opacity="0.018"/>
<polygon points="1044.6,503.7 1040.8,523.8 994.6,525.8" fill="#000000" fill-opacity="0.033"/>
<polygon points="1044.6,503.7 1077.2,492.9 1040.8,523.8" fill="#ffffff" fill-opacity="0.022"/>
<polygon points="1077.2,492.9 1070.1,528.4 1040.8,523.8" fill="#000000" fill-opacity="0.020"/>
<polygon points="1077.2,492.9 1129.4,495.8 1070.1,528.4" fill="#000000" fill-opacity="0.041"/>
<polygon points="1129.4,495.8 1110.4,523.9 1070.1,528.4" fill="#000000" fill-opacity="0.023"/>
<polygon points="1129.4,495.8 1169.6,503.6 1110.4,523.9" fill="#000000" fill-opacity="0.028"/>
<polygon points="1169.6,503.6 1152.8,519.0 1110.4,523.9" fill="#000000" fill-opacity="0.057"/>
<polygon points="1201.1,493.3 1184.7,518.9 1152.8,519.0" fill="#ffffff" fill-opacity="0.040"/>
<polygon points="1201.1,493.3 1236.7,504.5 1184.7,518.9" fill="#000000" fill-opacity="0.018"/>
<polygon points="1236.7,504.5 1216.6,519.9 1184.7,518.9" fill="#000000" fill-opacity="0.020"/>
<polygon points="1236.7,504.5 1266.7,492.5 1216.6,519.9" fill="#ffffff" fill-opacity="0.027"/>
<polygon points="1297.4,495.7 1292.9,527.7 1248.6,527.4" fill="#ffffff" fill-opacity="0.032"/>
<polygon points="1297.4,495.7 1345.1,494.2 1292.9,527.7" fill="#000000" fill-opacity="0.028"/>
<polygon points="1368.3,494.7 1416.0,502.5 1351.3,524.7" fill="#000000" fill-opacity="0.028"/>
<polygon points="1416.0,502.5 1394.0,517.1 1351.3,524.7" fill="#000000" fill-opacity="0.022"/>
<polygon points="1416.0,502.5 1444.9,500.7 1394.0,517.1" fill="#ffffff" fill-opacity="0.042"/>
<polygon points="1493.2,499.7 1467.7,528.8 1432.3,526.6" fill="#ffffff" fill-opacity="0.025"/>
<polygon points="1493.2,499.7 1513.5,495.6 1467.7,528.8" fill="#000000" fill-opacity="0.042"/>
<polygon points="1513.5,495.6 1566.2,500.7 1494.3,518.7" fill="#000000" fill-opacity="0.042"/>
<polygon points="1566.2,500.7 1526.4,523.5 1494.3,518.7" fill="#ffffff" fill-opacity="0.033"/>
<polygon points="1566.2,500.7 1586.6,500.4 1526.4,523.5" fill="#000000" fill-opacity="0.024"/>
<polygon points="1586.6,500.4 1618.2,505.2 1572.4,522.8" fill="#000000" fill-opacity="0.022"/>
<polygon points="632.0,527.8 647.5,546.2 627.0,545.1" fill="#000000" fill-opacity="0.012"/>
<polygon points="632.0,527.8 664.1,520.6 647.5,546.2" fill="#ffffff" fill-opacity="0.015"/>
<polygon points="664.1,520.6 681.0,546.2 647.5,546.2" fill="#ffffff" fill-opacity="0.020"/>
<polygon points="664.1,520.6 716.1,520.0 681.0,546.2" fill="#000000" fill-opacity="0.032"/>
<polygon points="716.1,520.0 730.9,549.2 681.0,546.2" fill="#000000" fill-opacity="0.024"/>
<polygon points="716.1,520.0 740.7,524.3 730.9,549.2" fill="#000000" fill-opacity="0.018"/>
<polygon points="740.7,524.3 774.5,529.2 758.4,550.0" fill="#000000" fill-opacity="0.033"/>
<polygon points="774.5,529.2 790.1,553.3 758.4,550.0" fill="#ffffff" fill-opacity="0.036"/>
<polygon points="829.7,517.1 853.1,527.1 828.1,545.4" fill="#ffffff" fill-opacity="0.020"/>
<polygon points="853.1,527.1 863.8,551.5 828.1,545.4" fill="#000000" fill-opacity="0.018"/>
<polygon points="887.2,529.6 926.0,519.1 915.9,552.8" fill="#ffffff" fill-opacity="0.030"/>
<polygon points="926.0,519.1 933.5,547.5 915.9,552.8" fill="#000000" fill-opacity="0.025"/>
<polygon points="926.0,519.1 963.3,525.6 933.5,547.5" fill="#ffffff" fill-opacity="0.032"/>
<polygon points="963.3,525.6 976.7,544.8 933.5,547.5" fill="#ffffff" fill-opacity="0.014"/>
<polygon points="994.6,525.8 1027.3,542.4 976.7,544.8" fill="#ffffff" fill-opacity="0.025"/>
<polygon points="1040.8,523.8 1070.1,528.4 1051.7,552.5" fill="#ffffff" fill-opacity="0.020"/>
<polygon points="1070.1,528.4 1110.4,523.9 1099.7,543.8" fill="#ffffff" fill-opacity="0.025"/>
<polygon points="1110.4,523.9 1122.9,552.2 1099.7,543.8" fill="#ffffff" fill-opacity="0.032"/>
<polygon points="1152.8,519.0 1184.7,518.9 1148.9,545.2" fill="#000000" fill-opacity="0.015"/>
<polygon points="1184.7,518.9 1205.4,543.8 1148.9,545.2" fill="#000000" fill-opacity="0.022"/>
<polygon points="1184.7,518.9 1216.6,519.9 1205.4,543.8" fill="#ffffff" fill-opacity="0.034"/>
<polygon points="1216.6,519.9 1229.4,546.0 1205.4,543.8" fill="#000000" fill-opacity="0.024"/>
<polygon points="1248.6,527.4 1292.9,527.7 1266.2,542.9" fill="#000000" fill-opacity="0.021"/>
<polygon points="1292.9,527.7 1292.8,555.7 1266.2,542.9" fill="#000000" fill-opacity="0.016"/>
<polygon points="1292.9,527.7 1315.7,523.4 1292.8,555.7" fill="#000000" fill-opacity="0.017"/>
<polygon points="1315.7,523.4 1346.3,552.1 1292.8,555.7" fill="#ffffff" fill-opacity="0.050"/>
<polygon points="1351.3,524.7 1369.5,545.3 1346.3,552.1" fill="#ffffff" fill-opacity="0.033"/>
<polygon points="1351.3,524.7 1394.0,517.1 1369.5,545.3" fill="#ffffff" fill-opacity="0.048"/>
<polygon points="1394.0,517.1 1413.2,545.2 1369.5,545.3" fill="#ffffff" fill-opacity="0.024"/>
<polygon points="1394.0,517.1 1432.3,526.6 1413.2,545.2" fill="#ffffff" fill-opacity="0.031"/>
<polygon points="1432.3,526.6 1467.7,528.8 1447.1,554.9" fill="#000000" fill-opacity="0.016"/>
<polygon points="1467.7,528.8 1480.7,546.5 1447.1,554.9" fill="#ffffff" fill-opacity="0.034"/>
<polygon points="1467.7,528.8 1494.3,518.7 1480.7,546.5" fill="#ffffff" fill-opacity="0.034"/>
<polygon points="1494.3,518.7 1531.5,550.4 1480.7,546.5" fill="#000000" fill-opacity="0.024"/>
<polygon points="1494.3,518.7 1526.4,523.5 1531.5,550.4" fill="#ffffff" fill-opacity="0.027"/>
<polygon points="1526.4,523.5 1572.4,522.8 1545.0,547.4" fill="#ffffff" fill-opacity="0.019"/>
<polygon points="1572.4,522.8 1595.6,542.6 1545.0,547.4" fill="#ffffff" fill-opacity="0.023"/>
<polygon points="1572.4,522.8 1604.3,527.8 1595.6,542.6" fill="#ffffff" fill-opacity="0.045"/>
<polygon points="1604.3,527.8 1624.2,551.5 1595.6,542.6" fill="#000000" fill-opacity="0.015"/>
<polygon points="585.7,549.4 575.3,573.5 538.7,575.3" fill="#ffffff" fill-opacity="0.030"/>
<polygon points="627.0,545.1 599.4,578.8 575.3,573.5" fill="#ffffff" fill-opacity="0.013"/>
<polygon points="647.5,546.2 635.1,577.9 599.4,578.8" fill="#000000" fill-opacity="0.040"/>
<polygon points="647.5,546.2 681.0,546.2 635.1,577.9" fill="#000000" fill-opacity="0.013"/>
<polygon points="681.0,546.2 667.2,571.9 635.1,577.9" fill="#ffffff" fill-opacity="0.021"/>
<polygon points="681.0,546.2 730.9,549.2 667.2,571.9" fill="#000000" fill-opacity="0.013"/>
<polygon points="730.9,549.2 702.4,574.7 667.2,571.9" fill="#000000" fill-opacity="0.036"/>
<polygon points="758.4,550.0 790.1,553.3 737.9,569.9" fill="#ffffff" fill-opacity="0.012"/>
<polygon points="790.1,553.3 828.1,545.4 775.1,573.5" fill="#ffffff" fill-opacity="0.013"/>
<polygon points="828.1,545.4 813.4,573.3 775.1,573.5" fill="#000000" fill-opacity="0.024"/>
<polygon points="828.1,545.4 863.8,551.5 813.4,573.3" fill="#000000" fill-opacity="0.014"/>
<polygon points="863.8,551.5 865.8,576.5 813.4,573.3" fill="#000000" fill-opacity="0.018"/>
<polygon points="915.9,552.8 933.5,547.5 898.7,569.9" fill="#ffffff" fill-opacity="0.032"/>
<polygon points="933.5,547.5 976.7,544.8 923.2,568.0" fill="#ffffff" fill-opacity="0.025"/>
<polygon points="976.7,544.8 966.6,572.1 923.2,568.0" fill="#ffffff" fill-opacity="0.026"/>
<polygon points="976.7,544.8 1027.3,542.4 966.6,572.1" fill="#000000" fill-opacity="0.026"/>
<polygon points="1027.3,542.4 992.6,567.3 966.6,572.1" fill="#000000" fill-opacity="0.019"/>
<polygon points="1051.7,552.5 1026.4,570.7 992.6,567.3" fill="#000000" fill-opacity="0.032"/>
<polygon points="1051.7,552.5 1099.7,543.8 1026.4,570.7" fill="#ffffff" fill-opacity="0.044"/>
<polygon points="1099.7,543.8 1067.4,579.9 1026.4,570.7" fill="#000000" fill-opacity="0.044"/>
<polygon points="1099.7,543.8 1122.9,552.2 1067.4,579.9" fill="#000000" fill-opacity="0.028"/>
<polygon points="1122.9,552.2 1111.2,570.8 1067.4,579.9" fill="#ffffff" fill-opacity="0.019"/>
<polygon points="1122.9,552.2 1148.9,545.2 1111.2,570.8" fill="#000000" fill-opacity="0.017"/>
<polygon points="1148.9,545.2 1138.7,569.1 1111.2,570.8" fill="#ffffff" fill-opacity="0.017"/>
<polygon points="1148.9,545.2 1205.4,543.8 1138.7,569.1" fill="#000000" fill-opacity="0.023"/>
<polygon points="1205.4,543.8 1188.5,572.0 1138.7,569.1" fill="#ffffff" fill-opacity="0.025"/>
<polygon points="1205.4,543.8 1229.4,546.0 1188.5,572.0" fill="#000000" fill-opacity="0.013"/>
<polygon points="1229.4,546.0 1220.4,577.1 1188.5,572.0" fill="#ffffff" fill-opacity="0.018"/>
<polygon points="1229.4,546.0 1266.2,542.9 1220.4,577.1" fill="#ffffff" fill-opacity="0.024"/>
<polygon points="1266.2,542.9 1259.8,567.3 1220.4,577.1" fill="#000000" fill-opacity="0.035"/>
<polygon points="1266.2,542.9 1292.8,555.7 1259.8,567.3" fill="#000000" fill-opacity="0.020"/>
<polygon points="1292.8,555.7 1281.7,572.4 1259.8,567.3" fill="#000000" fill-opacity="0.041"/>
<polygon points="1292.8,555.7 1346.3,552.1 1281.7,572.4" fill="#000000" fill-opacity="0.025"/>
<polygon points="1346.3,552.1 1312.0,579.4 1281.7,572.4" fill="#ffffff" fill-opacity="0.022"/>
<polygon points="1369.5,545.3 1353.8,577.8 1312.0,579.4" fill="#ffffff" fill-opacity="0.020"/>
<polygon points="1369.5,545.3 1413.2,545.2 1353.8,577.8" fill="#ffffff" fill-opacity="0.034"/>
<polygon points="1413.2,545.2 1394.5,567.8 1353.8,577.8" fill="#ffffff" fill-opacity="0.025"/>
<polygon points="1413.2,545.2 1447.1,554.9 1394.5,567.8" fill="#ffffff" fill-opacity="0.018"/>
<polygon points="1480.7,546.5 1531.5,550.4 1455.0,569.1" fill="#ffffff" fill-opacity="0.021"/>
<polygon points="1531.5,550.4 1504.3,567.4 1455.0,569.1" fill="#ffffff" fill-opacity="0.026"/>
<polygon points="1595.6,542.6 1575.1,568.9 1533.5,572.9" fill="#ffffff" fill-opacity="0.040"/>
<polygon points="1624.2,551.5 1615.0,570.6 1575.1,568.9" fill="#ffffff" fill-opacity="0.048"/>
<polygon points="538.7,575.3 575.3,573.5 553.4,601.5" fill="#000000" fill-opacity="0.016"/>
<polygon points="575.3,573.5 575.5,595.1 553.4,601.5" fill="#ffffff" fill-opacity="0.021"/>
<polygon points="599.4,578.8 614.7,602.2 575.5,595.1" fill="#ffffff" fill-opacity="0.019"/>
<polygon points="599.4,578.8 635.1,577.9 614.7,602.2" fill="#000000" fill-opacity="0.017"/>
<polygon points="667.2,571.9 702.4,574.7 700.8,595.4" fill="#000000" fill-opacity="0.027"/>
<polygon points="702.4,574.7 723.0,597.0 700.8,595.4" fill="#000000" fill-opacity="0.032"/>
<polygon points="737.9,569.9 757.2,592.8 723.0,597.0" fill="#ffffff" fill-opacity="0.014"/>
<polygon points="813.4,573.3 837.6,603.5 788.6,601.0" fill="#000000" fill-opacity="0.031"/>
<polygon points="813.4,573.3 865.8,576.5 837.6,603.5" fill="#ffffff" fill-opacity="0.026"/>
<polygon points="865.8,576.5 898.7,569.9 883.4,596.4" fill="#000000" fill-opacity="0.017"/>
<polygon points="898.7,569.9 912.1,605.1 883.4,596.4" fill="#000000" fill-opacity="0.012"/>
<polygon points="898.7,569.9 923.2,568.0 912.1,605.1" fill="#ffffff" fill-opacity="0.024"/>
<polygon points="923.2,568.0 966.6,572.1 937.2,601.8" fill="#000000" fill-opacity="0.038"/>
<polygon points="966.6,572.1 984.0,605.6 937.2,601.8" fill="#ffffff" fill-opacity="0.050"/>
<polygon points="966.6,572.1 992.6,567.3 984.0,605.6" fill="#000000" fill-opacity="0.034"/>
<polygon points="992.6,567.3 1024.8,595.5 984.0,605.6" fill="#ffffff" fill-opacity="0.041"/>
<polygon points="992.6,567.3 1026.4,570.7 1024.8,595.5" fill="#ffffff" fill-opacity="0.021"/>
<polygon points="1026.4,570.7 1055.2,593.5 1024.8,595.5" fill="#000000" fill-opacity="0.023"/>
<polygon points="1026.4,570.7 1067.4,579.9 1055.2,593.5" fill="#ffffff" fill-opacity="0.030"/>
<polygon points="1067.4,579.9 1086.3,597.7 1055.2,593.5" fill="#ffffff" fill-opacity="0.030"/>
<polygon points="1067.4,579.9 1111.2,570.8 1086.3,597.7" fill="#ffffff" fill-opacity="0.025"/>
<polygon points="1111.2,570.8 1113.4,597.6 1086.3,597.7" fill="#ffffff" fill-opacity="0.016"/>
<polygon points="1188.5,572.0 1220.4,577.1 1190.7,594.4" fill="#ffffff" fill-opacity="0.031"/>
<polygon points="1220.4,577.1 1259.8,567.3 1229.7,598.9" fill="#ffffff" fill-opacity="0.047"/>
<polygon points="1259.8,567.3 1260.0,601.5 1229.7,598.9" fill="#000000" fill-opacity="0.035"/>
<polygon points="1281.7,572.4 1297.8,593.5 1260.0,601.5" fill="#000000" fill-opacity="0.034"/>
<polygon points="1281.7,572.4 1312.0,579.4 1297.8,593.5" fill="#000000" fill-opacity="0.040"/>
<polygon points="1353.8,577.8 1367.6,600.4 1336.2,598.1" fill="#000000" fill-opacity="0.012"/>
<polygon points="1353.8,577.8 1394.5,567.8 1367.6,600.4" fill="#000000" fill-opacity="0.024"/>
<polygon points="1394.5,567.8 1427.5,570.3 1416.8,599.9" fill="#000000" fill-opacity="0.037"/>
<polygon points="1455.0,569.1 1481.4,597.3 1452.8,592.5" fill="#000000" fill-opacity="0.028"/>
<polygon points="1504.3,567.4 1509.5,597.9 1481.4,597.3" fill="#000000" fill-opacity="0.043"/>
<polygon points="1533.5,572.9 1575.1,568.9 1545.3,599.1" fill="#ffffff" fill-opacity="0.013"/>
<polygon points="1575.1,568.9 1615.0,570.6 1594.1,598.8" fill="#ffffff" fill-opacity="0.020"/>
<polygon points="553.4,601.5 575.5,595.1 518.6,622.3" fill="#000000" fill-opacity="0.024"/>
<polygon points="575.5,595.1 614.7,602.2 575.4,625.3" fill="#000000" fill-opacity="0.018"/>
<polygon points="653.7,597.6 630.5,624.0 596.3,626.8" fill="#000000" fill-opacity="0.021"/>
<polygon points="653.7,597.6 700.8,595.4 630.5,624.0" fill="#ffffff" fill-opacity="0.024"/>
<polygon points="700.8,595.4 676.8,630.8 630.5,624.0" fill="#000000" fill-opacity="0.035"/>
<polygon points="700.8,595.4 723.0,597.0 676.8,630.8" fill="#ffffff" fill-opacity="0.030"/>
<polygon points="723.0,597.0 757.2,592.8 706.7,625.5" fill="#ffffff" fill-opacity="0.041"/>
<polygon points="757.2,592.8 756.6,628.2 706.7,625.5" fill="#ffffff" fill-opacity="0.027"/>
<polygon points="757.2,592.8 788.6,601.0 756.6,628.2" fill="#ffffff" fill-opacity="0.017"/>
<polygon points="837.6,603.5 815.9,623.2 785.1,626.1" fill="#000000" fill-opacity="0.031"/>
<polygon points="837.6,603.5 883.4,596.4 815.9,623.2" fill="#000000" fill-opacity="0.012"/>
<polygon points="883.4,596.4 848.6,629.0 815.9,623.2" fill="#000000" fill-opacity="0.021"/>
<polygon points="883.4,596.4 912.1,605.1 848.6,629.0" fill="#000000" fill-opacity="0.016"/>
<polygon points="912.1,605.1 937.2,601.8 899.1,622.7" fill="#000000" fill-opacity="0.018"/>
<polygon points="1024.8,595.5 993.4,622.4 953.3,624.5" fill="#ffffff" fill-opacity="0.012"/>
<polygon points="1024.8,595.5 1055.2,593.5 993.4,622.4" fill="#000000" fill-opacity="0.030"/>
<polygon points="1055.2,593.5 1086.3,597.7 1045.4,619.5" fill="#ffffff" fill-opacity="0.069"/>
<polygon points="1113.4,597.6 1110.3,620.7 1062.6,620.6" fill="#000000" fill-opacity="0.020"/>
<polygon points="1113.4,597.6 1155.9,599.2 1110.3,620.7" fill="#ffffff" fill-opacity="0.024"/>
<polygon points="1155.9,599.2 1130.0,625.0 1110.3,620.7" fill="#ffffff" fill-opacity="0.037"/>
<polygon points="1155.9,599.2 1190.7,594.4 1130.0,625.0" fill="#ffffff" fill-opacity="0.015"/>
<polygon points="1229.7,598.9 1213.8,626.5 1175.5,620.8" fill="#000000" fill-opacity="0.043"/>
<polygon points="1229.7,598.9 1260.0,601.5 1213.8,626.5" fill="#ffffff" fill-opacity="0.015"/>
<polygon points="1336.2,598.1 1333.3,622.1 1287.5,629.0" fill="#ffffff" fill-opacity="0.050"/>
<polygon points="1336.2,598.1 1367.6,600.4 1333.3,622.1" fill="#ffffff" fill-opacity="0.023"/>
<polygon points="1367.6,600.4 1354.3,629.8 1333.3,622.1" fill="#000000" fill-opacity="0.014"/>
<polygon points="1367.6,600.4 1416.8,599.9 1354.3,629.8" fill="#ffffff" fill-opacity="0.015"/>
<polygon points="1416.8,599.9 1389.5,627.4 1354.3,629.8" fill="#ffffff" fill-opacity="0.016"/>
<polygon points="1452.8,592.5 1434.7,627.0 1389.5,627.4" fill="#ffffff" fill-opacity="0.034"/>
<polygon points="1481.4,597.3 1477.1,628.9 1434.7,627.0" fill="#000000" fill-opacity="0.040"/>
<polygon points="1481.4,597.3 1509.5,597.9 1477.1,628.9" fill="#000000" fill-opacity="0.024"/>
<polygon points="1509.5,597.9 1545.3,599.1 1493.8,626.1" fill="#000000" fill-opacity="0.022"/>
<polygon points="1545.3,599.1 1594.1,598.8 1537.8,625.3" fill="#000000" fill-opacity="0.034"/>
<polygon points="1623.8,595.7 1616.0,624.9 1570.9,621.4" fill="#000000" fill-opacity="0.020"/>
<polygon points="518.6,622.3 575.4,625.3 541.7,646.1" fill="#000000" fill-opacity="0.012"/>
<polygon points="575.4,625.3 596.3,626.8 579.8,645.1" fill="#ffffff" fill-opacity="0.022"/>
<polygon points="630.5,624.0 676.8,630.8 645.5,643.6" fill="#ffffff" fill-opacity="0.022"/>
<polygon points="676.8,630.8 682.5,652.5 645.5,643.6" fill="#ffffff" fill-opacity="0.012"/>
<polygon points="676.8,630.8 706.7,625.5 682.5,652.5" fill="#ffffff" fill-opacity="0.042"/>
<polygon points="706.7,625.5 718.7,648.9 682.5,652.5" fill="#000000" fill-opacity="0.016"/>
<polygon points="706.7,625.5 756.6,628.2 718.7,648.9" fill="#ffffff" fill-opacity="0.020"/>
<polygon points="756.6,628.2 785.1,626.1 770.5,649.3" fill="#000000" fill-opacity="0.014"/>
<polygon points="785.1,626.1 791.9,654.7 770.5,649.3" fill="#ffffff" fill-opacity="0.015"/>
<polygon points="785.1,626.1 815.9,623.2 791.9,654.7" fill="#ffffff" fill-opacity="0.020"/>
<polygon points="815.9,623.2 844.9,643.3 791.9,654.7" fill="#ffffff" fill-opacity="0.024"/>
<polygon points="815.9,623.2 848.6,629.0 844.9,643.3" fill="#ffffff" fill-opacity="0.012"/>
<polygon points="848.6,629.0 866.1,649.7 844.9,643.3" fill="#000000" fill-opacity="0.020"/>
<polygon points="899.1,622.7 935.8,617.9 915.1,648.1" fill="#ffffff" fill-opacity="0.040"/>
<polygon points="953.3,624.5 985.2,647.2 949.2,646.1" fill="#ffffff" fill-opacity="0.037"/>
<polygon points="1045.4,619.5 1060.2,654.2 1012.0,653.2" fill="#ffffff" fill-opacity="0.019"/>
<polygon points="1062.6,620.6 1089.6,648.5 1060.2,654.2" fill="#000000" fill-opacity="0.038"/>
<polygon points="1110.3,620.7 1129.0,651.3 1089.6,648.5" fill="#ffffff" fill-opacity="0.024"/>
<polygon points="1110.3,620.7 1130.0,625.0 1129.0,651.3" fill="#000000" fill-opacity="0.016"/>
<polygon points="1130.0,625.0 1167.9,653.8 1129.0,651.3" fill="#ffffff" fill-opacity="0.021"/>
<polygon points="1175.5,620.8 1187.0,647.9 1167.9,653.8" fill="#000000" fill-opacity="0.018"/>
<polygon points="1175.5,620.8 1213.8,626.5 1187.0,647.9" fill="#ffffff" fill-opacity="0.020"/>
<polygon points="1213.8,626.5 1236.1,645.8 1187.0,647.9" fill="#000000" fill-opacity="0.049"/>
<polygon points="1213.8,626.5 1251.2,626.1 1236.1,645.8" fill="#000000" fill-opacity="0.048"/>
<polygon points="1251.2,626.1 1260.4,642.8 1236.1,645.8" fill="#000000" fill-opacity="0.035"/>
<polygon points="1251.2,626.1 1287.5,629.0 1260.4,642.8" fill="#ffffff" fill-opacity="0.013"/>
<polygon points="1287.5,629.0 1333.3,622.1 1306.1,655.8" fill="#ffffff" fill-opacity="0.016"/>
<polygon points="1389.5,627.4 1415.2,648.2 1380.5,648.5" fill="#ffffff" fill-opacity="0.024"/>
<polygon points="1389.5,627.4 1434.7,627.0 1415.2,648.2" fill="#ffffff" fill-opacity="0.019"/>
<polygon points="1434.7,627.0 1458.4,656.4 1415.2,648.2" fill="#000000" fill-opacity="0.030"/>
<polygon points="1434.7,627.0 1477.1,628.9 1458.4,656.4" fill="#ffffff" fill-opacity="0.014"/>
<polygon points="1477.1,628.9 1473.2,652.6 1458.4,656.4" fill="#ffffff" fill-opacity="0.048"/>
<polygon points="1477.1,628.9 1493.8,626.1 1473.2,652.6" fill="#ffffff" fill-opacity="0.019"/>
<polygon points="1493.8,626.1 1510.8,643.2 1473.2,652.6" fill="#000000" fill-opacity="0.021"/>
<polygon points="1493.8,626.1 1537.8,625.3 1510.8,643.2" fill="#ffffff" fill-opacity="0.018"/>
<polygon points="1570.9,621.4 1603.8,644.3 1550.9,652.8" fill="#ffffff" fill-opacity="0.024"/>
<polygon points="1570.9,621.4 1616.0,624.9 1603.8,644.3" fill="#ffffff" fill-opacity="0.030"/>
<polygon points="620.3,644.4 609.2,679.5 563.0,672.1" fill="#ffffff" fill-opacity="0.038"/>
<polygon points="645.5,643.6 632.8,673.3 609.2,679.5" fill="#ffffff" fill-opacity="0.014"/>
<polygon points="682.5,652.5 718.7,648.9 676.8,678.5" fill="#000000" fill-opacity="0.025"/>
<polygon points="718.7,648.9 721.5,673.3 676.8,678.5" fill="#ffffff" fill-opacity="0.015"/>
<polygon points="718.7,648.9 770.5,649.3 721.5,673.3" fill="#000000" fill-opacity="0.025"/>
<polygon points="770.5,649.3 750.7,675.4 721.5,673.3" fill="#ffffff" fill-opacity="0.018"/>
<polygon points="844.9,643.3 810.2,669.3 789.2,669.9" fill="#000000" fill-opacity="0.019"/>
<polygon points="844.9,643.3 866.1,649.7 810.2,669.3" fill="#000000" fill-opacity="0.023"/>
<polygon points="949.2,646.1 921.8,668.1 889.7,669.5" fill="#ffffff" fill-opacity="0.019"/>
<polygon points="1012.0,653.2 1060.2,654.2 1001.0,671.6" fill="#ffffff" fill-opacity="0.016"/>
<polygon points="1060.2,654.2 1027.5,674.6 1001.0,671.6" fill="#000000" fill-opacity="0.015"/>
<polygon points="1060.2,654.2 1089.6,648.5 1027.5,674.6" fill="#000000" fill-opacity="0.027"/>
<polygon points="1167.9,653.8 1151.4,672.1 1095.2,668.7" fill="#000000" fill-opacity="0.029"/>
<polygon points="1167.9,653.8 1187.0,647.9 1151.4,672.1" fill="#000000" fill-opacity="0.022"/>
<polygon points="1236.1,645.8 1213.6,681.8 1167.9,670.4" fill="#000000" fill-opacity="0.028"/>
<polygon points="1260.4,642.8 1242.9,679.9 1213.6,681.8" fill="#000000" fill-opacity="0.043"/>
<polygon points="1260.4,642.8 1306.1,655.8 1242.9,679.9" fill="#ffffff" fill-opacity="0.030"/>
<polygon points="1306.1,655.8 1285.6,673.6 1242.9,679.9" fill="#000000" fill-opacity="0.023"/>
<polygon points="1306.1,655.8 1351.3,644.5 1285.6,673.6" fill="#000000" fill-opacity="0.012"/>
<polygon points="1351.3,644.5 1329.4,673.3 1285.6,673.6" fill="#000000" fill-opacity="0.023"/>
<polygon points="1351.3,644.5 1380.5,648.5 1329.4,673.3" fill="#000000" fill-opacity="0.030"/>
<polygon points="1380.5,648.5 1415.2,648.2 1347.4,675.5" fill="#000000" fill-opacity="0.043"/>
<polygon points="1473.2,652.6 1474.8,681.7 1424.7,680.9" fill="#000000" fill-opacity="0.033"/>
<polygon points="1473.2,652.6 1510.8,643.2 1474.8,681.7" fill="#000000" fill-opacity="0.042"/>
<polygon points="1510.8,643.2 1500.6,679.5 1474.8,681.7" fill="#000000" fill-opacity="0.030"/>
<polygon points="1510.8,643.2 1550.9,652.8 1500.6,679.5" fill="#ffffff" fill-opacity="0.025"/>
<polygon points="1550.9,652.8 1603.8,644.3 1543.4,670.3" fill="#000000" fill-opacity="0.041"/>
<polygon points="1603.8,644.3 1562.6,670.2 1543.4,670.3" fill="#ffffff" fill-opacity="0.040"/>
<polygon points="1603.8,644.3 1623.9,643.0 1562.6,670.2" fill="#ffffff" fill-opacity="0.015"/>
<polygon points="1623.9,643.0 1600.9,668.8 1562.6,670.2" fill="#ffffff" fill-opacity="0.026"/>
<polygon points="531.0,674.6 563.0,672.1 544.6,703.5" fill="#ffffff" fill-opacity="0.024"/>
<polygon points="563.0,672.1 579.4,700.2 544.6,703.5" fill="#ffffff" fill-opacity="0.031"/>
<polygon points="563.0,672.1 609.2,679.5 579.4,700.2" fill="#000000" fill-opacity="0.038"/>
<polygon points="609.2,679.5 632.8,673.3 608.3,695.9" fill="#000000" fill-opacity="0.017"/>
<polygon points="632.8,673.3 667.0,693.2 608.3,695.9" fill="#ffffff" fill-opacity="0.046"/>
<polygon points="632.8,673.3 676.8,678.5 667.0,693.2" fill="#ffffff" fill-opacity="0.017"/>
<polygon points="721.5,673.3 735.0,703.3 692.7,704.3" fill="#000000" fill-opacity="0.048"/>
<polygon points="750.7,675.4 761.6,704.2 735.0,703.3" fill="#000000" fill-opacity="0.019"/>
<polygon points="750.7,675.4 789.2,669.9 761.6,704.2" fill="#ffffff" fill-opacity="0.032"/>
<polygon points="789.2,669.9 807.9,703.7 761.6,704.2" fill="#ffffff" fill-opacity="0.018"/>
<polygon points="810.2,669.3 864.4,671.3 847.7,694.4" fill="#ffffff" fill-opacity="0.026"/>
<polygon points="864.4,671.3 889.7,669.5 882.8,698.6" fill="#ffffff" fill-opacity="0.026"/>
<polygon points="921.8,668.1 963.6,669.8 953.8,693.3" fill="#ffffff" fill-opacity="0.041"/>
<polygon points="963.6,669.8 981.8,696.2 953.8,693.3" fill="#000000" fill-opacity="0.036"/>
<polygon points="963.6,669.8 1001.0,671.6 981.8,696.2" fill="#ffffff" fill-opacity="0.018"/>
<polygon points="1001.0,671.6 1013.3,698.2 981.8,696.2" fill="#ffffff" fill-opacity="0.018"/>
<polygon points="1027.5,674.6 1055.8,704.4 1013.3,698.2" fill="#ffffff" fill-opacity="0.035"/>
<polygon points="1027.5,674.6 1066.8,671.4 1055.8,704.4" fill="#ffffff" fill-opacity="0.016"/>
<polygon points="1066.8,671.4 1084.8,701.9 1055.8,704.4" fill="#ffffff" fill-opacity="0.013"/>
<polygon points="1066.8,671.4 1095.2,668.7 1084.8,701.9" fill="#000000" fill-opacity="0.023"/>
<polygon points="1095.2,668.7 1120.5,696.9 1084.8,701.9" fill="#ffffff" fill-opacity="0.014"/>
<polygon points="1095.2,668.7 1151.4,672.1 1120.5,696.9" fill="#000000" fill-opacity="0.029"/>
<polygon points="1151.4,672.1 1169.7,697.5 1120.5,696.9" fill="#ffffff" fill-opacity="0.013"/>
<polygon points="1151.4,672.1 1167.9,670.4 1169.7,697.5" fill="#ffffff" fill-opacity="0.051"/>
<polygon points="1167.9,670.4 1186.3,697.7 1169.7,697.5" fill="#000000" fill-opacity="0.020"/>
<polygon points="1167.9,670.4 1213.6,681.8 1186.3,697.7" fill="#ffffff" fill-opacity="0.037"/>
<polygon points="1213.6,681.8 1237.8,696.0 1186.3,697.7" fill="#000000" fill-opacity="0.024"/>
<polygon points="1242.9,679.9 1273.8,700.6 1237.8,696.0" fill="#ffffff" fill-opacity="0.017"/>
<polygon points="1242.9,679.9 1285.6,673.6 1273.8,700.6" fill="#000000" fill-opacity="0.033"/>
<polygon points="1285.6,673.6 1329.4,673.3 1308.3,695.5" fill="#000000" fill-opacity="0.017"/>
<polygon points="1329.4,673.3 1330.5,695.0 1308.3,695.5" fill="#000000" fill-opacity="0.014"/>
<polygon points="1329.4,673.3 1347.4,675.5 1330.5,695.0" fill="#ffffff" fill-opacity="0.020"/>
<polygon points="1424.7,680.9 1445.7,697.5 1400.2,700.0" fill="#ffffff" fill-opacity="0.037"/>
<polygon points="1500.6,679.5 1512.9,705.3 1484.9,706.3" fill="#ffffff" fill-opacity="0.017"/>
<polygon points="1543.4,670.3 1551.7,703.6 1512.9,705.3" fill="#000000" fill-opacity="0.049"/>
<polygon points="1562.6,670.2 1600.9,668.8 1582.6,706.8" fill="#ffffff" fill-opacity="0.061"/>
<polygon points="1600.9,668.8 1626.3,706.5 1582.6,706.8" fill="#000000" fill-opacity="0.013"/>
<polygon points="579.4,700.2 570.9,720.7 523.3,723.9" fill="#000000" fill-opacity="0.026"/>
<polygon points="608.3,695.9 596.6,727.7 570.9,720.7" fill="#000000" fill-opacity="0.040"/>
<polygon points="608.3,695.9 667.0,693.2 596.6,727.7" fill="#000000" fill-opacity="0.019"/>
<polygon points="667.0,693.2 692.7,704.3 648.7,722.7" fill="#000000" fill-opacity="0.034"/>
<polygon points="692.7,704.3 735.0,703.3 666.4,723.2" fill="#000000" fill-opacity="0.015"/>
<polygon points="735.0,703.3 721.7,720.3 666.4,723.2" fill="#ffffff" fill-opacity="0.030"/>
<polygon points="735.0,703.3 761.6,704.2 721.7,720.3" fill="#ffffff" fill-opacity="0.038"/>
<polygon points="761.6,704.2 749.2,723.5 721.7,720.3" fill="#ffffff" fill-opacity="0.050"/>
<polygon points="807.9,703.7 785.5,721.2 749.2,723.5" fill="#ffffff" fill-opacity="0.016"/>
<polygon points="807.9,703.7 847.7,694.4 785.5,721.2" fill="#ffffff" fill-opacity="0.056"/>
<polygon points="847.7,694.4 820.8,730.6 785.5,721.2" fill="#000000" fill-opacity="0.014"/>
<polygon points="847.7,694.4 882.8,698.6 820.8,730.6" fill="#ffffff" fill-opacity="0.040"/>
<polygon points="882.8,698.6 862.6,727.0 820.8,730.6" fill="#000000" fill-opacity="0.020"/>
<polygon points="882.8,698.6 912.9,696.5 862.6,727.0" fill="#ffffff" fill-opacity="0.025"/>
<polygon points="912.9,696.5 890.1,726.1 862.6,727.0" fill="#000000" fill-opacity="0.036"/>
<polygon points="981.8,696.2 966.6,724.5 916.7,729.9" fill="#000000" fill-opacity="0.044"/>
<polygon points="1013.3,698.2 1055.8,704.4 1002.0,724.1" fill="#ffffff" fill-opacity="0.035"/>
<polygon points="1055.8,704.4 1031.2,721.4 1002.0,724.1" fill="#ffffff" fill-opacity="0.014"/>
<polygon points="1055.8,704.4 1084.8,701.9 1031.2,721.4" fill="#000000" fill-opacity="0.050"/>
<polygon points="1084.8,701.9 1120.5,696.9 1072.4,726.2" fill="#ffffff" fill-opacity="0.026"/>
<polygon points="1120.5,696.9 1169.7,697.5 1106.4,718.7" fill="#000000" fill-opacity="0.016"/>
<polygon points="1169.7,697.5 1145.1,724.5 1106.4,718.7" fill="#000000" fill-opacity="0.031"/>
<polygon points="1186.3,697.7 1180.2,726.5 1145.1,724.5" fill="#000000" fill-opacity="0.021"/>
<polygon points="1237.8,696.0 1273.8,700.6 1224.4,720.3" fill="#ffffff" fill-opacity="0.031"/>
<polygon points="1273.8,700.6 1249.2,732.1 1224.4,720.3" fill="#000000" fill-opacity="0.022"/>
<polygon points="1308.3,695.5 1291.7,722.6 1249.2,732.1" fill="#000000" fill-opacity="0.025"/>
<polygon points="1330.5,695.0 1327.7,732.1 1291.7,722.6" fill="#ffffff" fill-opacity="0.025"/>
<polygon points="1330.5,695.0 1372.4,699.0 1327.7,732.1" fill="#000000" fill-opacity="0.013"/>
<polygon points="1372.4,699.0 1355.7,730.3 1327.7,732.1" fill="#000000" fill-opacity="0.027"/>
<polygon points="1400.2,700.0 1445.7,697.5 1385.0,732.1" fill="#000000" fill-opacity="0.014"/>
<polygon points="1484.9,706.3 1474.2,727.3 1429.8,721.5" fill="#ffffff" fill-opacity="0.016"/>
<polygon points="1484.9,706.3 1512.9,705.3 1474.2,727.3" fill="#000000" fill-opacity="0.031"/>
<polygon points="1512.9,705.3 1512.5,729.8 1474.2,727.3" fill="#ffffff" fill-opacity="0.018"/>
<polygon points="1512.9,705.3 1551.7,703.6 1512.5,729.8" fill="#ffffff" fill-opacity="0.030"/>
<polygon points="1551.7,703.6 1545.1,725.4 1512.5,729.8" fill="#000000" fill-opacity="0.018"/>
<polygon points="1551.7,703.6 1582.6,706.8 1545.1,725.4" fill="#ffffff" fill-opacity="0.047"/>
<polygon points="1582.6,706.8 1626.3,706.5 1585.8,719.1" fill="#000000" fill-opacity="0.030"/>
<polygon points="1626.3,706.5 1618.9,728.2 1585.8,719.1" fill="#000000" fill-opacity="0.024"/>
<polygon points="523.3,723.9 570.9,720.7 542.0,754.7" fill="#000000" fill-opacity="0.017"/>
<polygon points="570.9,720.7 582.9,750.9 542.0,754.7" fill="#000000" fill-opacity="0.014"/>
<polygon points="648.7,722.7 666.4,723.2 650.7,752.4" fill="#000000" fill-opacity="0.022"/>
<polygon points="666.4,723.2 681.8,751.2 650.7,752.4" fill="#000000" fill-opacity="0.047"/>
<polygon points="666.4,723.2 721.7,720.3 681.8,751.2" fill="#000000" fill-opacity="0.016"/>
<polygon points="721.7,720.3 734.9,750.3 681.8,751.2" fill="#000000" fill-opacity="0.028"/>
<polygon points="721.7,720.3 749.2,723.5 734.9,750.3" fill="#ffffff" fill-opacity="0.021"/>
<polygon points="749.2,723.5 757.8,754.6 734.9,750.3" fill="#000000" fill-opacity="0.056"/>
<polygon points="749.2,723.5 785.5,721.2 757.8,754.6" fill="#ffffff" fill-opacity="0.027"/>
<polygon points="785.5,721.2 808.5,754.2 757.8,754.6" fill="#000000" fill-opacity="0.066"/>
<polygon points="820.8,730.6 862.6,727.0 837.2,756.1" fill="#000000" fill-opacity="0.025"/>
<polygon points="862.6,727.0 879.1,745.5 837.2,756.1" fill="#000000" fill-opacity="0.022"/>
<polygon points="862.6,727.0 890.1,726.1 879.1,745.5" fill="#ffffff" fill-opacity="0.021"/>
<polygon points="890.1,726.1 904.8,744.8 879.1,745.5" fill="#000000" fill-opacity="0.025"/>
<polygon points="916.7,729.9 966.6,724.5 932.9,748.2" fill="#ffffff" fill-opacity="0.016"/>
<polygon points="966.6,724.5 988.8,755.1 932.9,748.2" fill="#000000" fill-opacity="0.029"/>
<polygon points="966.6,724.5 1002.0,724.1 988.8,755.1" fill="#ffffff" fill-opacity="0.031"/>
<polygon points="1002.0,724.1 1031.2,721.4 1006.8,745.9" fill="#ffffff" fill-opacity="0.024"/>
<polygon points="1031.2,721.4 1049.3,755.3 1006.8,745.9" fill="#000000" fill-opacity="0.032"/>
<polygon points="1031.2,721.4 1072.4,726.2 1049.3,755.3" fill="#ffffff" fill-opacity="0.026"/>
<polygon points="1072.4,726.2 1106.4,718.7 1090.8,756.0" fill="#ffffff" fill-opacity="0.019"/>
<polygon points="1106.4,718.7 1113.7,757.2 1090.8,756.0" fill="#000000" fill-opacity="0.014"/>
<polygon points="1106.4,718.7 1145.1,724.5 1113.7,757.2" fill="#ffffff" fill-opacity="0.021"/>
<polygon points="1145.1,724.5 1180.2,726.5 1153.0,752.2" fill="#000000" fill-opacity="0.044"/>
<polygon points="1180.2,726.5 1205.0,753.6 1153.0,752.2" fill="#ffffff" fill-opacity="0.059"/>
<polygon points="1180.2,726.5 1224.4,720.3 1205.0,753.6" fill="#000000" fill-opacity="0.015"/>
<polygon points="1291.7,722.6 1300.1,747.8 1266.3,743.6" fill="#ffffff" fill-opacity="0.022"/>
<polygon points="1291.7,722.6 1327.7,732.1 1300.1,747.8" fill="#ffffff" fill-opacity="0.023"/>
<polygon points="1327.7,732.1 1343.1,747.3 1300.1,747.8" fill="#ffffff" fill-opacity="0.022"/>
<polygon points="1327.7,732.1 1355.7,730.3 1343.1,747.3" fill="#000000" fill-opacity="0.037"/>
<polygon points="1355.7,730.3 1378.5,753.1 1343.1,747.3" fill="#ffffff" fill-opacity="0.020"/>
<polygon points="1355.7,730.3 1385.0,732.1 1378.5,753.1" fill="#000000" fill-opacity="0.035"/>
<polygon points="1385.0,732.1 1404.3,745.2 1378.5,753.1" fill="#ffffff" fill-opacity="0.055"/>
<polygon points="1429.8,721.5 1452.7,749.9 1404.3,745.2" fill="#ffffff" fill-opacity="0.027"/>
<polygon points="1474.2,727.3 1512.5,729.8 1475.1,745.0" fill="#000000" fill-opacity="0.016"/>
<polygon points="1512.5,729.8 1530.6,751.9 1475.1,745.0" fill="#ffffff" fill-opacity="0.047"/>
<polygon points="1545.1,725.4 1552.6,746.1 1530.6,751.9" fill="#ffffff" fill-opacity="0.026"/>
<polygon points="1545.1,725.4 1585.8,719.1 1552.6,746.1" fill="#000000" fill-opacity="0.018"/>
<polygon points="582.9,750.9 557.5,777.4 525.4,774.3" fill="#ffffff" fill-opacity="0.016"/>
<polygon points="582.9,750.9 628.8,746.1 557.5,777.4" fill="#ffffff" fill-opacity="0.016"/>
<polygon points="628.8,746.1 600.2,780.1 557.5,777.4" fill="#000000" fill-opacity="0.037"/>
<polygon points="650.7,752.4 635.8,775.0 600.2,780.1" fill="#000000" fill-opacity="0.030"/>
<polygon points="650.7,752.4 681.8,751.2 635.8,775.0" fill="#ffffff" fill-opacity="0.026"/>
<polygon points="681.8,751.2 674.2,781.8 635.8,775.0" fill="#000000" fill-opacity="0.029"/>
<polygon points="757.8,754.6 739.6,776.7 706.3,778.5" fill="#000000" fill-opacity="0.045"/>
<polygon points="757.8,754.6 808.5,754.2 739.6,776.7" fill="#ffffff" fill-opacity="0.041"/>
<polygon points="808.5,754.2 837.2,756.1 776.8,780.8" fill="#ffffff" fill-opacity="0.017"/>
<polygon points="837.2,756.1 812.9,780.6 776.8,780.8" fill="#ffffff" fill-opacity="0.025"/>
<polygon points="837.2,756.1 879.1,745.5 812.9,780.6" fill="#000000" fill-opacity="0.023"/>
<polygon points="879.1,745.5 858.2,775.0 812.9,780.6" fill="#000000" fill-opacity="0.023"/>
<polygon points="879.1,745.5 904.8,744.8 858.2,775.0" fill="#ffffff" fill-opacity="0.041"/>
<polygon points="904.8,744.8 900.4,774.0 858.2,775.0" fill="#ffffff" fill-opacity="0.046"/>
<polygon points="904.8,744.8 932.9,748.2 900.4,774.0" fill="#000000" fill-opacity="0.019"/>
<polygon points="932.9,748.2 988.8,755.1 931.8,777.0" fill="#ffffff" fill-opacity="0.023"/>
<polygon points="988.8,755.1 1006.8,745.9 960.8,769.5" fill="#ffffff" fill-opacity="0.032"/>
<polygon points="1006.8,745.9 996.1,772.5 960.8,769.5" fill="#ffffff" fill-opacity="0.015"/>
<polygon points="1049.3,755.3 1032.6,782.0 996.1,772.5" fill="#ffffff" fill-opacity="0.016"/>
<polygon points="1090.8,756.0 1065.0,778.3 1032.6,782.0" fill="#ffffff" fill-opacity="0.030"/>
<polygon points="1090.8,756.0 1113.7,757.2 1065.0,778.3" fill="#000000" fill-opacity="0.015"/>
<polygon points="1113.7,757.2 1110.1,772.0 1065.0,778.3" fill="#ffffff" fill-opacity="0.031"/>
<polygon points="1113.7,757.2 1153.0,752.2 1110.1,772.0" fill="#ffffff" fill-opacity="0.060"/>
<polygon points="1153.0,752.2 1139.9,770.5 1110.1,772.0" fill="#000000" fill-opacity="0.040"/>
<polygon points="1153.0,752.2 1205.0,753.6 1139.9,770.5" fill="#ffffff" fill-opacity="0.041"/>
<polygon points="1205.0,753.6 1187.5,772.1 1139.9,770.5" fill="#000000" fill-opacity="0.034"/>
<polygon points="1224.7,752.8 1212.1,773.4 1187.5,772.1" fill="#ffffff" fill-opacity="0.044"/>
<polygon points="1224.7,752.8 1266.3,743.6 1212.1,773.4" fill="#ffffff" fill-opacity="0.026"/>
<polygon points="1266.3,743.6 1257.7,780.5 1212.1,773.4" fill="#ffffff" fill-opacity="0.017"/>
<polygon points="1378.5,753.1 1348.1,773.7 1312.4,781.2" fill="#000000" fill-opacity="0.028"/>
<polygon points="1378.5,753.1 1404.3,745.2 1348.1,773.7" fill="#ffffff" fill-opacity="0.042"/>
<polygon points="1404.3,745.2 1452.7,749.9 1391.0,778.7" fill="#ffffff" fill-opacity="0.046"/>
<polygon points="1452.7,749.9 1434.1,773.4 1391.0,778.7" fill="#ffffff" fill-opacity="0.018"/>
<polygon points="1475.1,745.0 1475.5,781.9 1434.1,773.4" fill="#000000" fill-opacity="0.025"/>
<polygon points="1552.6,746.1 1603.9,753.1 1537.3,773.7" fill="#000000" fill-opacity="0.053"/>
<polygon points="557.5,777.4 595.8,799.3 559.3,807.5" fill="#000000" fill-opacity="0.036"/>
<polygon points="557.5,777.4 600.2,780.1 595.8,799.3" fill="#000000" fill-opacity="0.019"/>
<polygon points="600.2,780.1 627.9,802.9 595.8,799.3" fill="#ffffff" fill-opacity="0.036"/>
<polygon points="600.2,780.1 635.8,775.0 627.9,802.9" fill="#000000" fill-opacity="0.021"/>
<polygon points="635.8,775.0 674.2,781.8 660.8,807.8" fill="#000000" fill-opacity="0.019"/>
<polygon points="706.3,778.5 725.6,803.0 681.6,800.3" fill="#ffffff" fill-opacity="0.048"/>
<polygon points="706.3,778.5 739.6,776.7 725.6,803.0" fill="#000000" fill-opacity="0.024"/>
<polygon points="739.6,776.7 757.2,807.7 725.6,803.0" fill="#ffffff" fill-opacity="0.033"/>
<polygon points="776.8,780.8 812.9,780.6 793.0,799.0" fill="#ffffff" fill-opacity="0.061"/>
<polygon points="858.2,775.0 877.8,795.0 827.4,799.3" fill="#000000" fill-opacity="0.067"/>
<polygon points="931.8,777.0 960.8,769.5 947.0,804.2" fill="#000000" fill-opacity="0.025"/>
<polygon points="960.8,769.5 974.1,805.2 947.0,804.2" fill="#000000" fill-opacity="0.021"/>
<polygon points="960.8,769.5 996.1,772.5 974.1,805.2" fill="#ffffff" fill-opacity="0.019"/>
<polygon points="1032.6,782.0 1042.9,800.4 1021.5,804.7" fill="#ffffff" fill-opacity="0.017"/>
<polygon points="1065.0,778.3 1110.1,772.0 1076.4,805.8" fill="#000000" fill-opacity="0.025"/>
<polygon points="1110.1,772.0 1139.9,770.5 1134.7,806.3" fill="#000000" fill-opacity="0.039"/>
<polygon points="1139.9,770.5 1148.6,798.7 1134.7,806.3" fill="#ffffff" fill-opacity="0.043"/>
<polygon points="1139.9,770.5 1187.5,772.1 1148.6,798.7" fill="#000000" fill-opacity="0.017"/>
<polygon points="1187.5,772.1 1196.9,801.3 1148.6,798.7" fill="#ffffff" fill-opacity="0.041"/>
<polygon points="1212.1,773.4 1257.7,780.5 1222.7,804.8" fill="#ffffff" fill-opacity="0.032"/>
<polygon points="1312.4,781.2 1331.1,795.0 1295.0,801.8" fill="#000000" fill-opacity="0.016"/>
<polygon points="1312.4,781.2 1348.1,773.7 1331.1,795.0" fill="#000000" fill-opacity="0.017"/>
<polygon points="1348.1,773.7 1376.3,797.9 1331.1,795.0" fill="#000000" fill-opacity="0.041"/>
<polygon points="1391.0,778.7 1418.7,797.3 1376.3,797.9" fill="#000000" fill-opacity="0.017"/>
<polygon points="1391.0,778.7 1434.1,773.4 1418.7,797.3" fill="#ffffff" fill-opacity="0.034"/>
<polygon points="1434.1,773.4 1445.9,794.6 1418.7,797.3" fill="#ffffff" fill-opacity="0.051"/>
<polygon points="1434.1,773.4 1475.5,781.9 1445.9,794.6" fill="#ffffff" fill-opacity="0.046"/>
<polygon points="1475.5,781.9 1477.2,800.1 1445.9,794.6" fill="#000000" fill-opacity="0.027"/>
<polygon points="1490.6,777.5 1537.3,773.7 1521.4,800.2" fill="#000000" fill-opacity="0.035"/>
<polygon points="1537.3,773.7 1564.4,795.3 1521.4,800.2" fill="#ffffff" fill-opacity="0.038"/>
<polygon points="1537.3,773.7 1573.2,773.0 1564.4,795.3" fill="#ffffff" fill-opacity="0.018"/>
<polygon points="1573.2,773.0 1614.1,777.1 1600.4,796.0" fill="#ffffff" fill-opacity="0.047"/>
<polygon points="1614.1,777.1 1639.3,801.1 1600.4,796.0" fill="#ffffff" fill-opacity="0.013"/>
<polygon points="627.9,802.9 599.9,819.1 574.7,832.5" fill="#ffffff" fill-opacity="0.012"/>
<polygon points="627.9,802.9 660.8,807.8 599.9,819.1" fill="#000000" fill-opacity="0.030"/>
<polygon points="660.8,807.8 629.7,830.5 599.9,819.1" fill="#ffffff" fill-opacity="0.013"/>
<polygon points="725.6,803.0 757.2,807.7 701.8,826.4" fill="#000000" fill-opacity="0.040"/>
<polygon points="757.2,807.7 734.7,820.5 701.8,826.4" fill="#ffffff" fill-opacity="0.015"/>
<polygon points="793.0,799.0 777.2,832.5 734.7,820.5" fill="#ffffff" fill-opacity="0.044"/>
<polygon points="827.4,799.3 821.4,830.9 777.2,832.5" fill="#ffffff" fill-opacity="0.024"/>
<polygon points="877.8,795.0 900.0,802.9 843.1,824.8" fill="#000000" fill-opacity="0.028"/>
<polygon points="900.0,802.9 947.0,804.2 879.9,822.7" fill="#000000" fill-opacity="0.013"/>
<polygon points="947.0,804.2 916.7,831.9 879.9,822.7" fill="#000000" fill-opacity="0.056"/>
<polygon points="974.1,805.2 957.9,825.8 916.7,831.9" fill="#000000" fill-opacity="0.016"/>
<polygon points="1021.5,804.7 1001.7,831.4 957.9,825.8" fill="#ffffff" fill-opacity="0.026"/>
<polygon points="1042.9,800.4 1044.7,827.0 1001.7,831.4" fill="#ffffff" fill-opacity="0.029"/>
<polygon points="1042.9,800.4 1076.4,805.8 1044.7,827.0" fill="#ffffff" fill-opacity="0.031"/>
<polygon points="1076.4,805.8 1070.0,831.7 1044.7,827.0" fill="#ffffff" fill-opacity="0.019"/>
<polygon points="1134.7,806.3 1148.6,798.7 1103.5,823.2" fill="#ffffff" fill-opacity="0.040"/>
<polygon points="1148.6,798.7 1147.7,822.6 1103.5,823.2" fill="#ffffff" fill-opacity="0.038"/>
<polygon points="1148.6,798.7 1196.9,801.3 1147.7,822.6" fill="#ffffff" fill-opacity="0.028"/>
<polygon points="1196.9,801.3 1174.8,825.0 1147.7,822.6" fill="#000000" fill-opacity="0.039"/>
<polygon points="1196.9,801.3 1222.7,804.8 1174.8,825.0" fill="#000000" fill-opacity="0.052"/>
<polygon points="1222.7,804.8 1213.4,824.0 1174.8,825.0" fill="#ffffff" fill-opacity="0.043"/>
<polygon points="1222.7,804.8 1263.2,800.9 1213.4,824.0" fill="#ffffff" fill-opacity="0.018"/>
<polygon points="1263.2,800.9 1248.3,825.3 1213.4,824.0" fill="#ffffff" fill-opacity="0.033"/>
<polygon points="1263.2,800.9 1295.0,801.8 1248.3,825.3" fill="#ffffff" fill-opacity="0.015"/>
<polygon points="1295.0,801.8 1331.1,795.0 1275.2,830.7" fill="#ffffff" fill-opacity="0.012"/>
<polygon points="1331.1,795.0 1376.3,797.9 1311.5,826.4" fill="#ffffff" fill-opacity="0.037"/>
<polygon points="1376.3,797.9 1359.1,824.6 1311.5,826.4" fill="#ffffff" fill-opacity="0.021"/>
<polygon points="1376.3,797.9 1418.7,797.3 1359.1,824.6" fill="#000000" fill-opacity="0.021"/>
<polygon points="1418.7,797.3 1387.3,820.4 1359.1,824.6" fill="#000000" fill-opacity="0.017"/>
<polygon points="1418.7,797.3 1445.9,794.6 1387.3,820.4" fill="#ffffff" fill-opacity="0.025"/>
<polygon points="1445.9,794.6 1426.9,823.4 1387.3,820.4" fill="#ffffff" fill-opacity="0.022"/>
<polygon points="1477.2,800.1 1521.4,800.2 1465.6,822.2" fill="#000000" fill-opacity="0.028"/>
<polygon points="1521.4,800.2 1508.0,825.8 1465.6,822.2" fill="#000000" fill-opacity="0.019"/>
<polygon points="1521.4,800.2 1564.4,795.3 1508.0,825.8" fill="#ffffff" fill-opacity="0.014"/>
<polygon points="1564.4,795.3 1526.2,824.7 1508.0,825.8" fill="#000000" fill-opacity="0.042"/>
<polygon points="1564.4,795.3 1600.4,796.0 1526.2,824.7" fill="#ffffff" fill-opacity="0.013"/>
<polygon points="1600.4,796.0 1585.2,819.1 1526.2,824.7" fill="#ffffff" fill-opacity="0.015"/>
<polygon points="1600.4,796.0 1639.3,801.1 1585.2,819.1" fill="#ffffff" fill-opacity="0.017"/>
<polygon points="1639.3,801.1 1612.2,832.5 1585.2,819.1" fill="#ffffff" fill-opacity="0.021"/>
<polygon points="527.8,827.6 574.7,832.5 544.8,852.6" fill="#ffffff" fill-opacity="0.047"/>
<polygon points="574.7,832.5 599.9,819.1 580.9,848.4" fill="#000000" fill-opacity="0.018"/>
<polygon points="599.9,819.1 622.6,852.5 580.9,848.4" fill="#000000" fill-opacity="0.039"/>
<polygon points="599.9,819.1 629.7,830.5 622.6,852.5" fill="#000000" fill-opacity="0.052"/>
<polygon points="629.7,830.5 679.6,829.0 651.6,851.2" fill="#ffffff" fill-opacity="0.022"/>
<polygon points="679.6,829.0 692.4,854.8 651.6,851.2" fill="#000000" fill-opacity="0.038"/>
<polygon points="701.8,826.4 717.3,845.5 692.4,854.8" fill="#000000" fill-opacity="0.015"/>
<polygon points="777.2,832.5 807.1,850.2 758.0,848.0" fill="#000000" fill-opacity="0.027"/>
<polygon points="777.2,832.5 821.4,830.9 807.1,850.2" fill="#ffffff" fill-opacity="0.019"/>
<polygon points="821.4,830.9 843.1,824.8 844.6,849.8" fill="#000000" fill-opacity="0.043"/>
<polygon points="843.1,824.8 866.9,853.7 844.6,849.8" fill="#ffffff" fill-opacity="0.020"/>
<polygon points="843.1,824.8 879.9,822.7 866.9,853.7" fill="#ffffff" fill-opacity="0.039"/>
<polygon points="879.9,822.7 916.7,831.9 898.1,858.0" fill="#ffffff" fill-opacity="0.039"/>
<polygon points="916.7,831.9 952.0,848.8 898.1,858.0" fill="#000000" fill-opacity="0.036"/>
<polygon points="957.9,825.8 975.6,855.7 952.0,848.8" fill="#ffffff" fill-opacity="0.032"/>
<polygon points="957.9,825.8 1001.7,831.4 975.6,855.7" fill="#ffffff" fill-opacity="0.033"/>
<polygon points="1001.7,831.4 1022.9,853.2 975.6,855.7" fill="#ffffff" fill-opacity="0.014"/>
<polygon points="1001.7,831.4 1044.7,827.0 1022.9,853.2" fill="#ffffff" fill-opacity="0.027"/>
<polygon points="1044.7,827.0 1070.0,831.7 1041.4,854.9" fill="#ffffff" fill-opacity="0.019"/>
<polygon points="1070.0,831.7 1077.2,852.9 1041.4,854.9" fill="#ffffff" fill-opacity="0.024"/>
<polygon points="1070.0,831.7 1103.5,823.2 1077.2,852.9" fill="#ffffff" fill-opacity="0.024"/>
<polygon points="1103.5,823.2 1147.7,822.6 1125.3,857.2" fill="#ffffff" fill-opacity="0.021"/>
<polygon points="1147.7,822.6 1163.3,844.5 1125.3,857.2" fill="#ffffff" fill-opacity="0.012"/>
<polygon points="1147.7,822.6 1174.8,825.0 1163.3,844.5" fill="#ffffff" fill-opacity="0.016"/>
<polygon points="1174.8,825.0 1206.4,854.7 1163.3,844.5" fill="#000000" fill-opacity="0.035"/>
<polygon points="1174.8,825.0 1213.4,824.0 1206.4,854.7" fill="#ffffff" fill-opacity="0.016"/>
<polygon points="1213.4,824.0 1233.9,844.3 1206.4,854.7" fill="#000000" fill-opacity="0.021"/>
<polygon points="1275.2,830.7 1308.3,858.0 1273.7,850.1" fill="#000000" fill-opacity="0.030"/>
<polygon points="1426.9,823.4 1465.6,822.2 1446.7,850.3" fill="#ffffff" fill-opacity="0.015"/>
<polygon points="1465.6,822.2 1474.8,848.7 1446.7,850.3" fill="#000000" fill-opacity="0.029"/>
<polygon points="1465.6,822.2 1508.0,825.8 1474.8,848.7" fill="#ffffff" fill-opacity="0.020"/>
<polygon points="1508.0,825.8 1525.6,845.2 1474.8,848.7" fill="#000000" fill-opacity="0.022"/>
<polygon points="1526.2,824.7 1546.8,855.9 1525.6,845.2" fill="#ffffff" fill-opacity="0.016"/>
<polygon points="1526.2,824.7 1585.2,819.1 1546.8,855.9" fill="#ffffff" fill-opacity="0.017"/>
<polygon points="1585.2,819.1 1596.0,851.9 1546.8,855.9" fill="#000000" fill-opacity="0.026"/>
<polygon points="1585.2,819.1 1612.2,832.5 1596.0,851.9" fill="#000000" fill-opacity="0.020"/>
<polygon points="1612.2,832.5 1618.7,845.9 1596.0,851.9" fill="#000000" fill-opacity="0.026"/>
<polygon points="810.0,168.0 835.6,139.8 857.0,127.3 872.8,106.7 891.8,96.7 905.9,91.8 1000.0,102.5 1102.5,119.0 1179.0,130.0 1260.0,141.0 1485.5,169.5 1461.0,213.0 1300.0,200.0 1150.0,180.0 1000.0,160.0 900.0,170.0 840.0,185.0" fill="#ffffff" fill-opacity="0.070"/>
<polygon points="857.0,127.3 872.8,106.7 891.8,96.7 905.9,91.8 1000.0,102.5 1015.0,139.0 982.0,150.0 941.0,139.0 900.0,150.0 850.0,150.0" fill="#ffffff" fill-opacity="0.060"/>
<polygon points="840.0,160.0 941.0,139.0 982.0,150.0 1015.0,139.0 993.0,169.0 960.0,200.0 900.0,200.0 830.0,190.0" fill="#000000" fill-opacity="0.040"/>
<polygon points="1015.0,139.0 1100.0,150.0 1143.0,164.0 1110.0,179.0 1042.0,172.0 993.0,169.0" fill="#ffffff" fill-opacity="0.050"/>
<polygon points="1100.0,200.0 1462.0,213.0 1440.7,246.4 1419.6,278.0 1401.2,309.6 1382.7,330.7 1359.0,367.6 1338.0,413.0 1200.0,380.0 1150.0,300.0" fill="#000000" fill-opacity="0.055"/>
<polygon points="550.8,309.0 554.2,332.7 566.0,356.4 584.5,390.7 605.6,430.2 632.0,473.7 656.7,488.2 732.0,502.7 763.6,501.9 792.6,506.6 827.0,519.8 840.0,531.7 841.4,551.5 870.0,540.0 850.0,512.0 800.0,485.0 710.0,472.0 662.0,456.0 636.0,424.0 615.0,386.0 596.0,344.0 584.0,312.0 570.0,300.0" fill="#000000" fill-opacity="0.120"/>
<polygon points="600.0,330.0 620.0,380.0 645.0,425.0 675.0,450.0 730.0,465.0 800.0,475.0 860.0,500.0 875.0,490.0 810.0,462.0 740.0,450.0 690.0,440.0 660.0,415.0 635.0,372.0 618.0,325.0" fill="#000000" fill-opacity="0.030"/>
<polygon points="611.8,268.0 636.3,246.2 665.6,229.9 696.5,224.2 711.0,221.7 760.0,238.0 800.0,262.0 830.0,300.0 862.0,340.0 830.0,345.0 800.0,320.0 780.0,290.0 742.0,294.0 700.0,290.0 653.0,282.0 620.0,290.0" fill="#ffffff" fill-opacity="0.080"/>
<polygon points="655.0,270.0 700.0,255.0 760.0,262.0 790.0,280.0 760.0,292.0 742.0,294.0 721.6,289.0 696.0,294.0 669.0,291.5 652.0,280.5" fill="#ffffff" fill-opacity="0.170"/>
<polygon points="630.0,300.0 654.0,292.0 721.6,307.5 789.0,350.0 823.0,358.0 880.0,345.0 880.0,375.0 806.0,365.0 738.5,338.0 670.8,317.7 630.0,314.0" fill="#000000" fill-opacity="0.120"/>
<polygon points="652.0,280.5 669.0,291.5 696.0,294.0 721.6,289.0 742.0,294.0 721.0,297.0 696.0,299.0 669.0,296.0" fill="#000000" fill-opacity="0.220"/>
<polygon points="696.0,294.0 708.0,299.0 738.5,317.7 758.8,333.0 789.0,348.0 797.7,344.8 780.0,347.0 745.0,328.0 715.0,307.0" fill="#000000" fill-opacity="0.200"/>
<polygon points="755.0,316.0 775.0,312.6 792.0,322.0 798.0,344.8 780.0,346.0 760.0,332.0" fill="#ffffff" fill-opacity="0.060"/>
<polygon points="800.0,250.0 852.0,276.0 950.0,300.0 1050.0,356.0 1140.0,345.0 1170.0,355.0 1142.0,373.0 1080.0,390.0 1030.0,392.0 990.0,375.0 900.0,335.0 840.0,300.0 810.0,272.0" fill="#000000" fill-opacity="0.060"/>
<polygon points="1026.0,396.0 1148.0,396.0 1185.0,409.0 1174.0,435.0 1100.0,446.0 1071.0,446.0 1021.0,422.0" fill="#000000" fill-opacity="0.070"/>
<polygon points="1008.0,467.0 1148.0,443.0 1185.0,439.0 1169.0,456.5 1079.0,467.0 1008.0,480.0" fill="#ffffff" fill-opacity="0.070"/>
<polygon points="1315.0,439.0 1286.2,480.0 1254.5,521.2 1228.6,560.6 1210.4,587.4 1160.0,578.0 1200.0,500.0 1250.0,455.0" fill="#000000" fill-opacity="0.060"/>
<polygon points="780.0,290.0 850.0,300.0 1000.0,345.0 1032.0,385.0 1100.0,395.0 1180.0,395.0 1200.0,460.0 1000.0,462.0 880.0,450.0 800.0,420.0 760.0,380.0" fill="#000000" fill-opacity="0.060"/>
<polygon points="910.0,383.0 990.0,372.0 1000.0,378.0 930.0,405.0" fill="#000000" fill-opacity="0.100"/>
<polygon points="880.0,350.0 950.0,340.0 985.0,350.0 900.0,372.0" fill="#ffffff" fill-opacity="0.050"/>
<polygon points="1111.0,179.0 1145.0,164.0 1125.0,197.0" fill="#000000" fill-opacity="0.120"/>
<polygon points="1015.0,145.0 1116.0,158.0 1078.0,174.0 1040.0,200.0 1010.0,180.0" fill="#ffffff" fill-opacity="0.060"/>
<polygon points="1000.0,138.0 1017.0,146.0 1003.0,172.0" fill="#000000" fill-opacity="0.100"/>
<polygon points="990.0,470.0 1060.0,450.0 1150.0,455.0 1200.0,470.0 1150.0,500.0 1060.0,500.0" fill="#ffffff" fill-opacity="0.060"/>
<polygon points="1000.0,540.0 1080.0,535.0 1150.0,555.0 1080.0,575.0 1010.0,570.0" fill="#ffffff" fill-opacity="0.060"/>
<polygon points="841.0,552.8 870.0,530.0 905.0,530.0 930.8,542.2 944.0,581.8 965.0,611.0 975.7,647.8 999.4,674.0 1031.0,705.8 1051.9,744.2 1038.5,765.2 1036.0,769.0 878.0,769.0 862.2,720.0 837.2,645.0 835.3,589.7 836.4,568.6" fill="#000000" fill-opacity="0.035"/>
<polygon points="841.0,552.8 880.0,520.0 900.0,540.0 880.0,600.0 860.0,660.0 845.0,650.0 836.0,590.0" fill="#000000" fill-opacity="0.040"/>
<polygon points="931.5,541.7 937.0,562.0 944.0,585.0 955.0,615.0 966.0,640.0 975.0,660.0 990.0,680.0 1010.0,700.0 1030.0,718.0 1051.0,741.0 1062.0,740.8 1077.0,730.7 1088.8,720.0 1038.0,669.7 1051.0,623.5 1000.0,560.0" fill="#000000" fill-opacity="0.130"/>
<polygon points="930.7,542.8 980.3,575.9 944.5,581.4" fill="#000000" fill-opacity="0.060"/>
<polygon points="944.0,585.0 955.0,615.0 966.0,640.0 975.0,660.0 990.0,680.0 1010.0,700.0 1030.0,718.0 1051.0,741.0 1056.0,739.0 1036.0,714.0 1015.0,694.0 996.0,675.0 982.0,655.0 970.0,630.0 958.0,605.0 948.0,583.0" fill="#000000" fill-opacity="0.140"/>
<polygon points="975.0,660.0 990.0,680.0 1010.0,700.0 1030.0,718.0 1051.0,741.0 1062.0,740.8 1077.0,730.7 1050.0,705.0 1015.0,675.0 992.0,655.0" fill="#000000" fill-opacity="0.120"/>
<polygon points="990.0,680.0 1010.0,700.0 1030.0,718.0 1051.0,741.0 1058.0,739.0 1040.0,712.0 1012.0,688.0 994.0,670.0" fill="#000000" fill-opacity="0.150"/>
<polygon points="560.0,360.0 700.0,380.0 850.0,420.0 930.0,480.0 900.0,545.0 841.4,551.5 840.0,531.7 827.0,519.8 792.6,506.6 763.6,501.9 732.0,502.7 656.7,488.2 632.0,473.7 605.6,430.2 584.5,390.7" fill="#000000" fill-opacity="0.040"/>
<polygon points="841.0,552.0 930.7,542.8 944.5,581.4 955.0,615.0 880.0,640.0 838.0,630.0" fill="#000000" fill-opacity="0.050"/>
<polygon points="841.0,552.0 930.7,542.8 944.5,581.4 965.2,611.7 976.2,655.9 1001.0,683.4 1034.0,719.3 1050.7,741.4 1038.5,765.2 1036.0,769.0 878.0,769.0 862.2,720.0 839.7,650.0 835.5,595.0" fill="#000000" fill-opacity="0.040"/>
<polygon points="1210.4,587.4 1151.7,579.5 1093.0,588.0 1051.0,623.5 1038.0,669.7 1088.8,720.0 1110.7,700.5 1137.5,670.3 1173.6,630.0 1182.6,619.0" fill="#7e7e7e"/>
<polygon points="1170.7,355.3 1337.0,416.8 1315.0,438.0 1188.0,388.0 1142.0,373.0" fill="#8a8a8a"/>
<polygon points="1315.0,438.0 1286.2,480.0 1260.0,500.0 1200.0,470.0 1250.0,450.0" fill="#000000" fill-opacity="0.050"/>
<polygon points="1430.6,165.6 1401.6,197.3 1395.6,232.2 1420.0,182.8" fill="#6a6a6a"/>
<polygon points="1149.6,225.5 1173.0,195.0 1213.0,176.0 1190.0,205.0" fill="#c6c6c6"/>
<polygon points="1173.0,195.0 1213.0,176.0 1184.0,235.0" fill="#8a8a8a"/>
<polygon points="1213.0,176.0 1184.0,235.0 1205.0,216.0" fill="#bcbcbc"/>
<polygon points="1170.7,312.1 1203.0,316.4 1205.2,334.8 1216.0,369.3" fill="#c2c2c2"/>
<polygon points="1170.7,312.1 1194.4,291.6 1203.0,316.4" fill="#d6d6d6"/>
<polygon points="1203.0,316.4 1237.6,306.7 1205.2,334.8" fill="#a2a2a2"/>
<polygon points="1205.2,334.8 1226.8,330.4 1216.0,369.3" fill="#8c8c8c"/>
<polygon points="1237.6,306.7 1226.8,330.4 1233.3,345.6" fill="#c6c6c6"/>
<polygon points="1226.8,330.4 1233.3,345.6 1216.0,369.3" fill="#b4b4b4"/>
<polygon points="1285.1,322.9 1275.4,344.5 1289.4,369.3" fill="#c0c0c0"/>
<polygon points="1285.1,322.9 1289.4,369.3 1298.0,352.0 1292.0,330.0" fill="#929292"/>
</g>
<polygon points="551.6,304.0 555.7,300.7 582.6,287.7 611.8,268.0 636.3,246.2 665.6,229.9 696.5,224.2 711.0,221.7 789.0,204.0 810.0,168.0 835.6,139.8 857.0,127.3 872.8,106.7 891.8,96.7 905.9,91.8 1000.0,102.5 1102.5,119.0 1179.0,130.0 1260.0,141.0 1485.5,170.0 1462.3,213.0 1457.9,220.0 1440.7,246.4 1419.6,278.0 1401.2,309.6 1382.7,330.7 1369.5,346.5 1359.0,367.6 1345.8,394.0 1338.0,413.0 1330.0,423.0 1315.0,439.0 1286.2,480.0 1274.7,497.3 1254.5,521.2 1228.6,560.6 1210.4,587.4 1182.6,619.0 1173.6,630.0 1137.5,670.3 1110.7,700.5 1090.5,719.8 1077.0,730.7 1062.0,740.8 1051.9,744.2 1038.5,765.2 1036.0,769.0 878.0,769.0 862.2,720.0 839.7,650.0 835.5,595.0 836.0,570.0 841.4,551.5 840.0,531.7 827.0,519.8 792.6,506.6 763.6,501.9 732.0,502.7 656.7,488.2 632.0,473.7 605.6,430.2 584.5,390.7 566.0,356.4 554.2,332.7 550.8,309.0" fill="none" stroke="#777" stroke-width="0.6" stroke-opacity="0.6"/>
<polyline points="931.5,541.7 937.0,562.0 944.0,585.0 955.0,615.0 966.0,640.0 975.0,660.0 990.0,680.0 1010.0,700.0 1030.0,718.0 1051.0,741.0" fill="none" stroke="#4a4a4a" stroke-width="1"/>
<polyline points="934.0,139.0 984.6,149.8" fill="none" stroke="#666" stroke-width="0.9"/>
<polyline points="1116.0,158.4 1143.5,164.0" fill="none" stroke="#606060" stroke-width="0.9"/>
<polyline points="1078.0,173.5 1110.7,179.0" fill="none" stroke="#606060" stroke-width="0.9"/>
<polyline points="1036.0,188.0 1026.0,211.0" fill="none" stroke="#555" stroke-width="1.3"/>
<polyline points="652.0,280.5 669.0,291.5 696.0,294.0 721.6,289.0 742.0,294.0" fill="none" stroke="#5a5a5a" stroke-width="0.8"/>
<polyline points="755.0,316.0 775.0,312.6 792.0,322.0 798.0,344.8" fill="none" stroke="#505050" stroke-width="0.8"/>
<polyline points="696.0,294.0 738.5,317.7 758.8,333.0 789.0,348.0 797.7,344.8" fill="none" stroke="#5a5a5a" stroke-width="0.7"/>
<polyline points="1170.7,312.1 1194.4,291.6 1203.0,316.4 1237.6,306.7 1233.3,345.6 1216.0,369.3 1170.7,312.1" fill="none" stroke="#555" stroke-width="0.7"/>
<polyline points="1285.1,322.9 1275.4,344.5 1289.4,369.3 1285.1,322.9" fill="none" stroke="#555" stroke-width="0.7"/>
<polygon points="800.0,245.0 852.0,276.0 950.0,305.0 1050.0,357.0 1140.0,348.0 1170.0,356.0 1142.0,374.0 1080.0,390.0 1030.0,392.0 990.0,375.0 900.0,338.0 840.0,305.0 808.0,275.0" fill="#000" fill-opacity="0.07"/>
<polygon points="1103.0,293.0 1166.0,312.0 1168.0,335.0 1140.0,345.0 1103.0,331.0" fill="#cfcfcf"/>
<polyline points="1103.0,293.0 1166.0,312.0 1168.0,335.0" fill="none" stroke="#707070" stroke-width="0.8"/>
<line x1="1104.0" y1="279.0" x2="1164.0" y2="297.0" stroke="#6a4a28" stroke-width="2.6"/>
<line x1="1104.0" y1="279.0" x2="1164.0" y2="297.0" stroke="#a87040" stroke-width="1.4"/>
<line x1="1104.0" y1="286.0" x2="1164.0" y2="304.0" stroke="#6a4a28" stroke-width="2.6"/>
<line x1="1104.0" y1="286.0" x2="1164.0" y2="304.0" stroke="#a87040" stroke-width="1.4"/>
<line x1="1104.0" y1="279.0" x2="1104.0" y2="293.0" stroke="#6a4a28" stroke-width="1"/>
<line x1="1122.0" y1="284.4" x2="1122.0" y2="298.4" stroke="#6a4a28" stroke-width="1"/>
<line x1="1142.0" y1="290.4" x2="1142.0" y2="304.4" stroke="#6a4a28" stroke-width="1"/>
<line x1="1163.0" y1="296.7" x2="1163.0" y2="310.7" stroke="#6a4a28" stroke-width="1"/>
<polygon points="940.0,282.0 960.0,300.0 1000.0,318.0 1000.0,330.0 940.0,306.0 905.0,292.0" fill="#8a8a8a"/>
<polygon points="848.0,272.0 902.0,289.0 1000.0,330.0 1050.0,349.0 1140.0,331.0 1168.0,338.0 1142.0,347.0 1050.0,360.0 1000.0,343.0 880.0,292.0 852.0,281.0" fill="#2a70ae"/>
<polyline points="848.0,272.0 902.0,289.0 1000.0,330.0 1050.0,349.0 1140.0,331.0 1168.0,338.0" fill="none" stroke="#1a4a80" stroke-width="0.8"/>
<polygon points="811.0,228.0 898.0,256.0 899.0,287.0 813.0,247.0" fill="#2a2a78"/>
<polygon points="814.6,230.1 822.1,232.6 822.6,237.4 815.0,234.6" fill="#2f6fc0"/>
<polygon points="815.2,236.6 822.7,239.4 823.2,244.2 815.7,241.1" fill="#4038b8"/>
<polygon points="815.9,243.1 823.4,246.3 823.8,251.0 816.3,247.6" fill="#2a9a9a"/>
<polygon points="829.1,234.9 836.6,237.3 837.0,242.6 829.5,239.9" fill="#4038b8"/>
<polygon points="829.7,242.0 837.2,244.8 837.6,250.1 830.1,247.0" fill="#3a50d8"/>
<polygon points="830.3,249.2 837.7,252.4 838.1,257.6 830.7,254.2" fill="#3a50d8"/>
<polygon points="843.6,239.6 851.1,242.1 851.5,247.8 843.9,245.1" fill="#3a50d8"/>
<polygon points="844.1,247.5 851.6,250.3 852.0,256.0 844.5,252.9" fill="#8a3aa8"/>
<polygon points="844.6,255.3 852.1,258.5 852.5,264.2 845.0,260.8" fill="#6a34b8"/>
<polygon points="858.1,244.4 865.6,246.9 865.9,253.1 858.4,250.3" fill="#4038b8"/>
<polygon points="858.5,252.9 866.0,255.7 866.4,261.9 858.9,258.8" fill="#3a50d8"/>
<polygon points="859.0,261.4 866.5,264.6 866.8,270.7 859.4,267.3" fill="#3a44c8"/>
<polygon points="872.5,249.2 880.1,251.6 880.4,258.3 872.8,255.6" fill="#8a3aa8"/>
<polygon points="873.0,258.3 880.5,261.1 880.8,267.8 873.3,264.7" fill="#8a3aa8"/>
<polygon points="873.4,267.5 880.9,270.7 881.2,277.3 873.7,273.9" fill="#3a44c8"/>
<polygon points="887.0,253.9 894.6,256.4 894.8,263.5 887.3,260.8" fill="#3a50d8"/>
<polygon points="887.4,263.8 894.9,266.6 895.2,273.7 887.7,270.6" fill="#2a9a9a"/>
<polygon points="887.8,273.6 895.3,276.8 895.5,283.9 888.1,280.5" fill="#6a34b8"/>
<line x1="811.0" y1="228.0" x2="813.0" y2="247.0" stroke="#9a9040" stroke-width="0.9"/>
<line x1="825.5" y1="232.7" x2="827.3" y2="253.7" stroke="#9a9040" stroke-width="0.9"/>
<line x1="840.0" y1="237.3" x2="841.7" y2="260.3" stroke="#9a9040" stroke-width="0.9"/>
<line x1="854.5" y1="242.0" x2="856.0" y2="267.0" stroke="#9a9040" stroke-width="0.9"/>
<line x1="869.0" y1="246.7" x2="870.3" y2="273.7" stroke="#9a9040" stroke-width="0.9"/>
<line x1="883.5" y1="251.3" x2="884.7" y2="280.3" stroke="#9a9040" stroke-width="0.9"/>
<line x1="898.0" y1="256.0" x2="899.0" y2="287.0" stroke="#9a9040" stroke-width="0.9"/>
<polygon points="845.8,239.2 859.7,243.7 861.2,269.4 847.4,263.0" fill="#a2744f"/>
<polygon points="898.0,256.0 947.0,245.0 947.0,276.0 899.0,287.0" fill="#2a2a78"/>
<polygon points="900.0,257.1 908.3,255.2 908.5,262.5 900.2,264.3" fill="#3a44c8"/>
<polygon points="900.3,267.4 908.6,265.6 908.8,272.8 900.6,274.7" fill="#4038b8"/>
<polygon points="900.6,277.8 908.9,275.9 909.0,283.1 900.9,285.0" fill="#4038b8"/>
<polygon points="912.2,254.4 920.6,252.5 920.7,259.7 912.4,261.6" fill="#30a070"/>
<polygon points="912.5,264.7 920.7,262.8 920.9,270.1 912.6,271.9" fill="#2f6fc0"/>
<polygon points="912.7,275.0 920.9,273.2 921.1,280.4 912.9,282.3" fill="#2a9a9a"/>
<polygon points="924.5,251.6 932.8,249.7 932.9,257.0 924.6,258.8" fill="#2a9a9a"/>
<polygon points="924.6,261.9 932.9,260.1 933.0,267.3 924.7,269.2" fill="#6a34b8"/>
<polygon points="924.8,272.3 933.0,270.4 933.1,277.6 924.9,279.5" fill="#3a44c8"/>
<polygon points="936.7,248.9 945.0,247.0 945.1,254.2 936.8,256.1" fill="#2f6fc0"/>
<polygon points="936.8,259.2 945.1,257.3 945.1,264.6 936.8,266.4" fill="#8a3aa8"/>
<polygon points="936.9,269.5 945.1,267.7 945.1,274.9 936.9,276.8" fill="#8a3aa8"/>
<line x1="898.0" y1="256.0" x2="899.0" y2="287.0" stroke="#9a9040" stroke-width="0.9"/>
<line x1="910.2" y1="253.2" x2="911.0" y2="284.2" stroke="#9a9040" stroke-width="0.9"/>
<line x1="922.5" y1="250.5" x2="923.0" y2="281.5" stroke="#9a9040" stroke-width="0.9"/>
<line x1="934.8" y1="247.8" x2="935.0" y2="278.8" stroke="#9a9040" stroke-width="0.9"/>
<line x1="947.0" y1="245.0" x2="947.0" y2="276.0" stroke="#9a9040" stroke-width="0.9"/>
<polygon points="898.0,256.0 947.0,245.0 947.0,262.0 899.0,272.0" fill="#6a30b0" fill-opacity="0.45"/>
<polygon points="806.0,191.5 892.0,214.0 898.0,256.0 811.0,228.0" fill="#a2744f"/>
<polygon points="892.0,214.0 947.5,206.0 947.0,245.0 898.0,256.0" fill="#a87852"/>
<polygon points="829.3,203.7 853.7,210.0 855.0,240.0 832.0,233.0" fill="#2a2a78"/>
<polygon points="830.4,205.4 840.6,208.1 840.9,212.5 830.8,209.8" fill="#6a34b8"/>
<polygon points="831.1,212.8 841.1,215.5 841.4,219.9 831.5,217.1" fill="#2f6fc0"/>
<polygon points="831.7,220.1 841.7,222.9 842.0,227.3 832.1,224.5" fill="#30a070"/>
<polygon points="832.4,227.4 842.2,230.3 842.5,234.7 832.8,231.8" fill="#3a50d8"/>
<polygon points="842.6,208.6 852.8,211.2 853.0,215.7 842.9,213.0" fill="#4038b8"/>
<polygon points="843.1,216.0 853.1,218.7 853.3,223.2 843.4,220.5" fill="#3a44c8"/>
<polygon points="843.5,223.4 853.5,226.2 853.7,230.7 843.8,227.9" fill="#3a50d8"/>
<polygon points="844.0,230.8 853.8,233.7 854.0,238.2 844.3,235.3" fill="#2a9a9a"/>
<line x1="829.3" y1="203.7" x2="832.0" y2="233.0" stroke="#9a9040" stroke-width="0.9"/>
<line x1="841.5" y1="206.8" x2="843.5" y2="236.5" stroke="#9a9040" stroke-width="0.9"/>
<line x1="853.7" y1="210.0" x2="855.0" y2="240.0" stroke="#9a9040" stroke-width="0.9"/>
<polygon points="864.0,216.0 891.0,223.0 893.0,252.0 866.0,245.0" fill="#2a2a78"/>
<polygon points="865.2,217.7 876.5,220.7 876.8,225.0 865.5,222.1" fill="#6a34b8"/>
<polygon points="865.7,225.0 877.0,227.9 877.3,232.3 866.0,229.3" fill="#2a9a9a"/>
<polygon points="866.2,232.2 877.5,235.2 877.8,239.5 866.5,236.6" fill="#4038b8"/>
<polygon points="866.7,239.5 878.0,242.4 878.3,246.8 867.0,243.8" fill="#8a3aa8"/>
<polygon points="878.7,221.2 890.0,224.2 890.3,228.5 879.0,225.6" fill="#3a50d8"/>
<polygon points="879.2,228.5 890.5,231.4 890.8,235.8 879.5,232.8" fill="#2f6fc0"/>
<polygon points="879.7,235.7 891.0,238.7 891.3,243.0 880.0,240.1" fill="#4038b8"/>
<polygon points="880.2,243.0 891.5,245.9 891.8,250.3 880.5,247.3" fill="#4038b8"/>
<line x1="864.0" y1="216.0" x2="866.0" y2="245.0" stroke="#9a9040" stroke-width="0.9"/>
<line x1="877.5" y1="219.5" x2="879.5" y2="248.5" stroke="#9a9040" stroke-width="0.9"/>
<line x1="891.0" y1="223.0" x2="893.0" y2="252.0" stroke="#9a9040" stroke-width="0.9"/>
<polygon points="931.0,212.4 947.0,208.9 947.0,242.0 932.0,246.0" fill="#2a2a78"/>
<polygon points="931.7,213.9 946.4,210.7 946.4,215.7 931.8,219.0" fill="#2a9a9a"/>
<polygon points="931.9,222.3 946.4,219.0 946.4,223.9 932.1,227.4" fill="#30a070"/>
<polygon points="932.2,230.7 946.4,227.3 946.4,232.2 932.3,235.8" fill="#3a44c8"/>
<polygon points="932.4,239.1 946.4,235.5 946.4,240.5 932.6,244.2" fill="#3a50d8"/>
<line x1="931.0" y1="212.4" x2="932.0" y2="246.0" stroke="#9a9040" stroke-width="0.9"/>
<line x1="947.0" y1="208.9" x2="947.0" y2="242.0" stroke="#9a9040" stroke-width="0.9"/>
<polyline points="806.0,191.5 811.0,228.0 813.0,247.0" fill="none" stroke="#8a8030" stroke-width="1"/>
<polyline points="892.0,214.0 898.0,256.0 899.0,287.0" fill="none" stroke="#c0c0c0" stroke-width="1.4"/>
<polyline points="811.0,228.0 898.0,256.0 947.0,245.0" fill="none" stroke="#e6e6e6" stroke-width="1.8"/>
<polygon points="794.6,173.3 845.0,166.3 945.8,190.6 947.5,206.0 892.0,214.0 806.0,191.5" fill="#8e9299"/>
<polygon points="812.0,177.0 851.0,168.5 940.0,192.0 894.0,205.0" fill="#1c2452"/>
<line x1="859.1" y1="170.6" x2="819.5" y2="179.5" stroke="#4a5278" stroke-width="0.6"/>
<line x1="867.2" y1="172.8" x2="826.9" y2="182.1" stroke="#4a5278" stroke-width="0.6"/>
<line x1="875.3" y1="174.9" x2="834.4" y2="184.6" stroke="#4a5278" stroke-width="0.6"/>
<line x1="883.4" y1="177.0" x2="841.8" y2="187.2" stroke="#4a5278" stroke-width="0.6"/>
<line x1="891.5" y1="179.2" x2="849.3" y2="189.7" stroke="#4a5278" stroke-width="0.6"/>
<line x1="899.5" y1="181.3" x2="856.7" y2="192.3" stroke="#4a5278" stroke-width="0.6"/>
<line x1="907.6" y1="183.5" x2="864.2" y2="194.8" stroke="#4a5278" stroke-width="0.6"/>
<line x1="915.7" y1="185.6" x2="871.6" y2="197.4" stroke="#4a5278" stroke-width="0.6"/>
<line x1="923.8" y1="187.7" x2="879.1" y2="199.9" stroke="#4a5278" stroke-width="0.6"/>
<line x1="931.9" y1="189.9" x2="886.5" y2="202.5" stroke="#4a5278" stroke-width="0.6"/>
<polyline points="794.6,173.3 845.0,166.3 945.8,190.6 892.0,200.0 794.6,173.3" fill="none" stroke="#5a5e66" stroke-width="1.2"/>
<polyline points="794.6,181.0 892.0,207.0 945.8,198.0" fill="none" stroke="#b8bcc4" stroke-width="0.9"/>
<polyline points="806.0,191.5 892.0,214.0 947.5,206.0" fill="none" stroke="#b07050" stroke-width="1.6"/>
<line x1="800.0" y1="189.0" x2="810.0" y2="247.0" stroke="#6a1010" stroke-width="2.8"/>
<line x1="800.0" y1="189.0" x2="810.0" y2="247.0" stroke="#c02020" stroke-width="1.4"/>
<polygon points="710.3,220.0 789.3,204.6 789.3,220.1 714.4,237.2" fill="#b89436"/>
<polygon points="710.3,220.0 789.3,204.6 789.3,208.0 711.0,223.0" fill="#d8b450"/>
<polyline points="710.3,220.0 789.3,204.6 789.3,220.1 714.4,237.2 710.3,220.0" fill="none" stroke="#5a4a20" stroke-width="0.8"/>
<polygon points="787.0,204.0 806.0,199.0 808.0,226.0 791.0,230.0" fill="#9a6a7a"/>
<polygon points="787.0,204.0 806.0,199.0 808.0,203.0 789.0,208.0" fill="#c090a0"/>
<polygon points="948.7,237.0 1050.4,278.0 1051.6,354.0 958.0,326.0" fill="#a2744f"/>
<polygon points="1009.5,262.8 1046.0,276.0 1047.0,346.0 1011.0,333.0" fill="#2a2a78"/>
<polygon points="1011.0,266.8 1020.3,270.2 1020.4,274.9 1011.1,271.5" fill="#4038b8"/>
<polygon points="1011.3,278.5 1020.5,281.9 1020.6,286.5 1011.4,283.2" fill="#3a50d8"/>
<polygon points="1011.5,290.2 1020.7,293.6 1020.8,298.2 1011.6,294.9" fill="#2a9a9a"/>
<polygon points="1011.8,301.9 1021.0,305.2 1021.0,309.9 1011.9,306.6" fill="#3a44c8"/>
<polygon points="1012.0,313.6 1021.2,316.9 1021.3,321.6 1012.1,318.3" fill="#3a44c8"/>
<polygon points="1012.3,325.3 1021.4,328.6 1021.5,333.3 1012.4,330.0" fill="#2f6fc0"/>
<polygon points="1023.2,271.2 1032.4,274.6 1032.5,279.2 1023.3,275.9" fill="#3a50d8"/>
<polygon points="1023.4,282.9 1032.6,286.3 1032.7,290.9 1023.5,287.6" fill="#30a070"/>
<polygon points="1023.6,294.6 1032.8,297.9 1032.9,302.6 1023.7,299.3" fill="#30a070"/>
<polygon points="1023.8,306.3 1033.0,309.6 1033.1,314.3 1023.9,311.0" fill="#3a44c8"/>
<polygon points="1024.1,318.0 1033.2,321.3 1033.3,326.0 1024.2,322.7" fill="#2a9a9a"/>
<polygon points="1024.3,329.7 1033.4,333.0 1033.5,337.6 1024.4,334.3" fill="#3a50d8"/>
<polygon points="1035.4,275.6 1044.6,279.0 1044.7,283.6 1035.4,280.3" fill="#6a34b8"/>
<polygon points="1035.5,287.3 1044.8,290.6 1044.8,295.3 1035.6,292.0" fill="#8a3aa8"/>
<polygon points="1035.7,299.0 1044.9,302.3 1045.0,307.0 1035.8,303.7" fill="#4038b8"/>
<polygon points="1035.9,310.7 1045.1,314.0 1045.2,318.6 1036.0,315.3" fill="#6a34b8"/>
<polygon points="1036.1,322.3 1045.3,325.6 1045.3,330.3 1036.2,327.0" fill="#2a9a9a"/>
<polygon points="1036.3,334.0 1045.4,337.3 1045.5,342.0 1036.4,338.7" fill="#4038b8"/>
<line x1="1009.5" y1="262.8" x2="1011.0" y2="333.0" stroke="#9a9040" stroke-width="0.9"/>
<line x1="1021.7" y1="267.2" x2="1023.0" y2="337.3" stroke="#9a9040" stroke-width="0.9"/>
<line x1="1033.8" y1="271.6" x2="1035.0" y2="341.7" stroke="#9a9040" stroke-width="0.9"/>
<line x1="1046.0" y1="276.0" x2="1047.0" y2="346.0" stroke="#9a9040" stroke-width="0.9"/>
<polygon points="962.0,285.0 1005.0,300.0 1006.0,333.0 964.0,319.0" fill="#2a2a78"/>
<polygon points="963.8,287.3 974.7,291.1 975.1,299.0 964.3,295.2" fill="#30a070"/>
<polygon points="964.5,298.6 975.3,302.3 975.7,310.2 964.9,306.5" fill="#2f6fc0"/>
<polygon points="965.1,309.9 975.8,313.6 976.2,321.4 965.6,317.9" fill="#8a3aa8"/>
<polygon points="978.1,292.3 989.0,296.1 989.3,303.9 978.5,300.1" fill="#3a44c8"/>
<polygon points="978.7,303.5 989.5,307.2 989.8,315.0 979.1,311.3" fill="#4038b8"/>
<polygon points="979.2,314.7 989.9,318.3 990.3,326.1 979.6,322.5" fill="#4038b8"/>
<polygon points="992.5,297.3 1003.3,301.1 1003.6,308.8 992.8,305.0" fill="#30a070"/>
<polygon points="992.9,308.4 1003.7,312.1 1003.9,319.8 993.2,316.1" fill="#3a44c8"/>
<polygon points="993.3,319.5 1004.0,323.1 1004.3,330.8 993.6,327.2" fill="#6a34b8"/>
<line x1="962.0" y1="285.0" x2="964.0" y2="319.0" stroke="#9a9040" stroke-width="0.9"/>
<line x1="976.3" y1="290.0" x2="978.0" y2="323.7" stroke="#9a9040" stroke-width="0.9"/>
<line x1="990.7" y1="295.0" x2="992.0" y2="328.3" stroke="#9a9040" stroke-width="0.9"/>
<line x1="1005.0" y1="300.0" x2="1006.0" y2="333.0" stroke="#9a9040" stroke-width="0.9"/>
<polygon points="1050.4,278.0 1106.6,250.0 1103.0,330.6 1051.6,354.0" fill="#a87852"/>
<polygon points="1070.3,265.2 1085.5,261.7 1085.5,297.9 1070.3,304.9" fill="#4a52d8"/>
<polygon points="1089.0,261.7 1103.0,258.0 1103.0,289.7 1089.0,296.7" fill="#5a64e0"/>
<line x1="1070.3" y1="271.8" x2="1085.5" y2="267.7" stroke="#8a90f0" stroke-width="0.8"/>
<line x1="1089.0" y1="267.5" x2="1103.0" y2="263.3" stroke="#9aa0f0" stroke-width="0.8"/>
<line x1="1070.3" y1="278.4" x2="1085.5" y2="273.8" stroke="#8a90f0" stroke-width="0.8"/>
<line x1="1089.0" y1="273.4" x2="1103.0" y2="268.6" stroke="#9aa0f0" stroke-width="0.8"/>
<line x1="1070.3" y1="285.0" x2="1085.5" y2="279.8" stroke="#8a90f0" stroke-width="0.8"/>
<line x1="1089.0" y1="279.2" x2="1103.0" y2="273.9" stroke="#9aa0f0" stroke-width="0.8"/>
<line x1="1070.3" y1="291.7" x2="1085.5" y2="285.8" stroke="#8a90f0" stroke-width="0.8"/>
<line x1="1089.0" y1="285.0" x2="1103.0" y2="279.1" stroke="#9aa0f0" stroke-width="0.8"/>
<line x1="1070.3" y1="298.3" x2="1085.5" y2="291.9" stroke="#8a90f0" stroke-width="0.8"/>
<line x1="1089.0" y1="290.9" x2="1103.0" y2="284.4" stroke="#9aa0f0" stroke-width="0.8"/>
<polyline points="1070.3,265.2 1085.5,261.7 1085.5,297.9 1070.3,304.9 1070.3,265.2" fill="none" stroke="#8a8030" stroke-width="1"/>
<polyline points="1089.0,261.7 1103.0,258.0 1103.0,289.7 1089.0,296.7 1089.0,261.7" fill="none" stroke="#8a8030" stroke-width="1"/>
<polygon points="1052.8,316.6 1065.6,313.0 1065.6,342.3 1052.8,350.5" fill="#2a2a78"/>
<polygon points="1053.3,318.1 1065.1,314.6 1065.1,321.5 1053.3,326.0" fill="#6a34b8"/>
<polygon points="1053.3,329.4 1065.1,324.4 1065.1,331.3 1053.3,337.2" fill="#30a070"/>
<polygon points="1053.3,340.6 1065.1,334.3 1065.1,341.2 1053.3,348.5" fill="#8a3aa8"/>
<line x1="1052.8" y1="316.6" x2="1052.8" y2="350.5" stroke="#9a9040" stroke-width="0.9"/>
<line x1="1065.6" y1="313.0" x2="1065.6" y2="342.3" stroke="#9a9040" stroke-width="0.9"/>
<polyline points="1050.4,278.0 1051.6,354.0" fill="none" stroke="#c8c8c8" stroke-width="1.4"/>
<line x1="939.4" y1="236.4" x2="1049.3" y2="270.3" stroke="#707070" stroke-width="3.0"/>
<line x1="939.4" y1="233.6" x2="1049.3" y2="267.5" stroke="#8a1414" stroke-width="1.6"/>
<line x1="944.0" y1="264.5" x2="1049.0" y2="299.5" stroke="#707070" stroke-width="3.0"/>
<line x1="944.0" y1="261.7" x2="1049.0" y2="296.7" stroke="#8a1414" stroke-width="1.6"/>
<line x1="946.4" y1="290.2" x2="1049.0" y2="328.8" stroke="#707070" stroke-width="3.0"/>
<line x1="946.4" y1="287.4" x2="1049.0" y2="326.0" stroke="#8a1414" stroke-width="1.6"/>
<line x1="960.0" y1="320.8" x2="1049.0" y2="350.8" stroke="#707070" stroke-width="3.0"/>
<line x1="960.0" y1="318.0" x2="1049.0" y2="348.0" stroke="#8a1414" stroke-width="1.6"/>
<line x1="939.4" y1="225.0" x2="950.0" y2="330.0" stroke="#8c8c8c" stroke-width="0.9"/>
<line x1="972.4" y1="235.2" x2="979.7" y2="337.8" stroke="#8c8c8c" stroke-width="0.9"/>
<line x1="1007.5" y1="246.1" x2="1011.4" y2="346.1" stroke="#8c8c8c" stroke-width="0.9"/>
<line x1="1047.1" y1="258.3" x2="1047.0" y2="355.5" stroke="#8c8c8c" stroke-width="0.9"/>
<line x1="960.0" y1="240.0" x2="1000.0" y2="330.0" stroke="#8c8c8c" stroke-width="0.8"/>
<line x1="1000.0" y1="250.0" x2="965.0" y2="320.0" stroke="#8c8c8c" stroke-width="0.8"/>
<polygon points="952.0,222.0 1007.0,208.0 1106.6,233.6 1106.6,250.0 1050.4,278.0 948.7,237.0" fill="#8e9299"/>
<polygon points="968.0,221.0 1008.0,211.0 1100.0,235.5 1056.0,260.0" fill="#1c2452"/>
<line x1="1016.4" y1="213.2" x2="976.0" y2="224.5" stroke="#4a5278" stroke-width="0.6"/>
<line x1="1024.7" y1="215.5" x2="984.0" y2="228.1" stroke="#4a5278" stroke-width="0.6"/>
<line x1="1033.1" y1="217.7" x2="992.0" y2="231.6" stroke="#4a5278" stroke-width="0.6"/>
<line x1="1041.5" y1="219.9" x2="1000.0" y2="235.2" stroke="#4a5278" stroke-width="0.6"/>
<line x1="1049.8" y1="222.1" x2="1008.0" y2="238.7" stroke="#4a5278" stroke-width="0.6"/>
<line x1="1058.2" y1="224.4" x2="1016.0" y2="242.3" stroke="#4a5278" stroke-width="0.6"/>
<line x1="1066.5" y1="226.6" x2="1024.0" y2="245.8" stroke="#4a5278" stroke-width="0.6"/>
<line x1="1074.9" y1="228.8" x2="1032.0" y2="249.4" stroke="#4a5278" stroke-width="0.6"/>
<line x1="1083.3" y1="231.0" x2="1040.0" y2="252.9" stroke="#4a5278" stroke-width="0.6"/>
<line x1="1091.6" y1="233.3" x2="1048.0" y2="256.5" stroke="#4a5278" stroke-width="0.6"/>
<polyline points="952.0,222.0 1007.0,208.0 1106.6,233.6 1050.4,265.0 952.0,222.0" fill="none" stroke="#5a5e66" stroke-width="1.2"/>
<polyline points="950.0,230.0 1050.4,271.0 1106.6,242.0" fill="none" stroke="#b8bcc4" stroke-width="0.9"/>
<polyline points="948.7,237.0 1050.4,278.0 1106.6,250.0" fill="none" stroke="#b07050" stroke-width="1.6"/>
<polygon points="992.0,341.0 1032.0,360.0 1032.0,384.4 992.0,367.0" fill="#c9a438"/>
<polygon points="1032.0,360.0 1082.0,348.0 1141.6,349.0 1141.6,369.0 1082.0,368.0 1032.0,384.4" fill="#d4b040"/>
<polygon points="1045.0,362.0 1075.0,352.0 1110.0,360.0 1080.0,368.0" fill="#9a9a50" fill-opacity="0.6"/>
<polygon points="1090.0,352.0 1135.0,352.0 1130.0,366.0 1095.0,366.0" fill="#a8a050" fill-opacity="0.5"/>
<polygon points="1141.6,349.0 1173.0,329.5 1173.0,354.0 1141.6,369.0" fill="#c9a438"/>
<polyline points="992.0,341.0 1032.0,360.0 1082.0,348.0 1141.6,349.0 1173.0,329.5" fill="none" stroke="#6a5a2a" stroke-width="0.9"/>
<polyline points="992.0,367.0 1032.0,384.4 1082.0,368.0 1141.6,369.0 1173.0,354.0" fill="none" stroke="#6a5a2a" stroke-width="0.9"/>
<line x1="992.0" y1="341.0" x2="992.0" y2="369.0" stroke="#666" stroke-width="1.4"/>
<line x1="1032.0" y1="360.0" x2="1032.0" y2="387.0" stroke="#666" stroke-width="1.4"/>
<line x1="1082.0" y1="348.0" x2="1082.0" y2="372.0" stroke="#666" stroke-width="1.4"/>
<line x1="1141.6" y1="349.0" x2="1141.6" y2="372.0" stroke="#666" stroke-width="1.4"/>
<line x1="1173.0" y1="329.0" x2="1173.0" y2="356.0" stroke="#666" stroke-width="1.4"/>
<polygon points="1166.0,330.0 1173.0,327.0 1173.0,342.0 1166.0,345.0" fill="#e0a0b0"/>
<line x1="1170.7" y1="355.3" x2="1397.0" y2="439.0" stroke="#4a4a80" stroke-width="1.5"/>
<circle cx="1397" cy="439" r="2" fill="#333"/>
<polyline points="888.5,153.8 884.4,124.9 877.0,69.4" fill="none" stroke="#5e5430" stroke-width="2.3" stroke-linecap="round"/>
<polyline points="884.4,124.9 855.4,84.3" fill="none" stroke="#5e5430" stroke-width="2.3" stroke-linecap="round"/>
<polyline points="884.0,110.0 867.8,81.0" fill="none" stroke="#5e5430" stroke-width="2.3" stroke-linecap="round"/>
<polyline points="882.0,95.0 890.0,68.6" fill="none" stroke="#5e5430" stroke-width="2.3" stroke-linecap="round"/>
<polyline points="888.5,153.8 884.4,124.9 877.0,69.4" fill="none" stroke="#b8a66c" stroke-width="1.1" stroke-linecap="round"/>
<polyline points="884.4,124.9 855.4,84.3" fill="none" stroke="#b8a66c" stroke-width="1.1" stroke-linecap="round"/>
<polyline points="884.0,110.0 867.8,81.0" fill="none" stroke="#b8a66c" stroke-width="1.1" stroke-linecap="round"/>
<polyline points="882.0,95.0 890.0,68.6" fill="none" stroke="#b8a66c" stroke-width="1.1" stroke-linecap="round"/>
<polyline points="905.0,153.0 901.0,118.2 896.8,68.6" fill="none" stroke="#5e5430" stroke-width="2.3" stroke-linecap="round"/>
<polyline points="901.0,118.2 916.6,81.9" fill="none" stroke="#5e5430" stroke-width="2.3" stroke-linecap="round"/>
<polyline points="900.0,100.0 906.7,68.6" fill="none" stroke="#5e5430" stroke-width="2.3" stroke-linecap="round"/>
<polyline points="899.0,90.0 881.0,72.0" fill="none" stroke="#5e5430" stroke-width="2.3" stroke-linecap="round"/>
<polyline points="905.0,153.0 901.0,118.2 896.8,68.6" fill="none" stroke="#b8a66c" stroke-width="1.1" stroke-linecap="round"/>
<polyline points="901.0,118.2 916.6,81.9" fill="none" stroke="#b8a66c" stroke-width="1.1" stroke-linecap="round"/>
<polyline points="900.0,100.0 906.7,68.6" fill="none" stroke="#b8a66c" stroke-width="1.1" stroke-linecap="round"/>
<polyline points="899.0,90.0 881.0,72.0" fill="none" stroke="#b8a66c" stroke-width="1.1" stroke-linecap="round"/>
<polyline points="753.5,302.3 745.3,271.4 725.0,194.9" fill="none" stroke="#5e5430" stroke-width="2.3" stroke-linecap="round"/>
<polyline points="745.3,271.4 697.3,219.3" fill="none" stroke="#5e5430" stroke-width="2.3" stroke-linecap="round"/>
<polyline points="740.0,250.0 722.5,206.3" fill="none" stroke="#5e5430" stroke-width="2.3" stroke-linecap="round"/>
<polyline points="735.0,235.0 730.7,197.3" fill="none" stroke="#5e5430" stroke-width="2.3" stroke-linecap="round"/>
<polyline points="753.5,302.3 745.3,271.4 725.0,194.9" fill="none" stroke="#b8a66c" stroke-width="1.1" stroke-linecap="round"/>
<polyline points="745.3,271.4 697.3,219.3" fill="none" stroke="#b8a66c" stroke-width="1.1" stroke-linecap="round"/>
<polyline points="740.0,250.0 722.5,206.3" fill="none" stroke="#b8a66c" stroke-width="1.1" stroke-linecap="round"/>
<polyline points="735.0,235.0 730.7,197.3" fill="none" stroke="#b8a66c" stroke-width="1.1" stroke-linecap="round"/>
<polyline points="765.7,287.7 752.0,240.0 741.2,190.0" fill="none" stroke="#5e5430" stroke-width="2.3" stroke-linecap="round"/>
<polyline points="758.0,265.0 703.0,214.4" fill="none" stroke="#5e5430" stroke-width="2.3" stroke-linecap="round"/>
<polyline points="760.0,255.0 761.6,194.9" fill="none" stroke="#5e5430" stroke-width="2.3" stroke-linecap="round"/>
<polyline points="765.7,287.7 752.0,240.0 741.2,190.0" fill="none" stroke="#b8a66c" stroke-width="1.1" stroke-linecap="round"/>
<polyline points="758.0,265.0 703.0,214.4" fill="none" stroke="#b8a66c" stroke-width="1.1" stroke-linecap="round"/>
<polyline points="760.0,255.0 761.6,194.9" fill="none" stroke="#b8a66c" stroke-width="1.1" stroke-linecap="round"/>
<polyline points="790.0,299.0 783.0,260.0 764.8,191.6" fill="none" stroke="#5e5430" stroke-width="2.3" stroke-linecap="round"/>
<polyline points="783.0,260.0 795.8,219.3" fill="none" stroke="#5e5430" stroke-width="2.3" stroke-linecap="round"/>
<polyline points="779.0,240.0 784.4,194.9" fill="none" stroke="#5e5430" stroke-width="2.3" stroke-linecap="round"/>
<polyline points="786.0,275.0 812.0,230.0" fill="none" stroke="#5e5430" stroke-width="2.3" stroke-linecap="round"/>
<polyline points="790.0,299.0 783.0,260.0 764.8,191.6" fill="none" stroke="#b8a66c" stroke-width="1.1" stroke-linecap="round"/>
<polyline points="783.0,260.0 795.8,219.3" fill="none" stroke="#b8a66c" stroke-width="1.1" stroke-linecap="round"/>
<polyline points="779.0,240.0 784.4,194.9" fill="none" stroke="#b8a66c" stroke-width="1.1" stroke-linecap="round"/>
<polyline points="786.0,275.0 812.0,230.0" fill="none" stroke="#b8a66c" stroke-width="1.1" stroke-linecap="round"/>
<polyline points="924.6,378.3 919.3,336.0 912.0,300.0 908.8,241.2" fill="none" stroke="#5e5430" stroke-width="2.3" stroke-linecap="round"/>
<polyline points="919.3,336.0 870.5,275.5" fill="none" stroke="#5e5430" stroke-width="2.3" stroke-linecap="round"/>
<polyline points="919.3,336.0 947.0,286.0 956.0,180.5" fill="none" stroke="#5e5430" stroke-width="2.3" stroke-linecap="round"/>
<polyline points="914.0,310.0 893.0,250.0" fill="none" stroke="#5e5430" stroke-width="2.3" stroke-linecap="round"/>
<polyline points="924.6,378.3 919.3,336.0 912.0,300.0 908.8,241.2" fill="none" stroke="#b8a66c" stroke-width="1.1" stroke-linecap="round"/>
<polyline points="919.3,336.0 870.5,275.5" fill="none" stroke="#b8a66c" stroke-width="1.1" stroke-linecap="round"/>
<polyline points="919.3,336.0 947.0,286.0 956.0,180.5" fill="none" stroke="#b8a66c" stroke-width="1.1" stroke-linecap="round"/>
<polyline points="914.0,310.0 893.0,250.0" fill="none" stroke="#b8a66c" stroke-width="1.1" stroke-linecap="round"/>
<polyline points="965.5,367.7 962.8,325.5 950.0,260.0 915.4,193.7" fill="none" stroke="#5e5430" stroke-width="2.3" stroke-linecap="round"/>
<polyline points="962.8,325.5 940.4,175.3" fill="none" stroke="#5e5430" stroke-width="2.3" stroke-linecap="round"/>
<polyline points="962.8,325.5 968.0,204.3" fill="none" stroke="#5e5430" stroke-width="2.3" stroke-linecap="round"/>
<polyline points="962.8,325.5 1007.6,265.0" fill="none" stroke="#5e5430" stroke-width="2.3" stroke-linecap="round"/>
<polyline points="965.5,367.7 962.8,325.5 950.0,260.0 915.4,193.7" fill="none" stroke="#b8a66c" stroke-width="1.1" stroke-linecap="round"/>
<polyline points="962.8,325.5 940.4,175.3" fill="none" stroke="#b8a66c" stroke-width="1.1" stroke-linecap="round"/>
<polyline points="962.8,325.5 968.0,204.3" fill="none" stroke="#b8a66c" stroke-width="1.1" stroke-linecap="round"/>
<polyline points="962.8,325.5 1007.6,265.0" fill="none" stroke="#b8a66c" stroke-width="1.1" stroke-linecap="round"/>
<polyline points="1281.3,317.3 1291.0,275.2 1299.6,236.3 1319.0,158.6" fill="none" stroke="#5e5430" stroke-width="2.3" stroke-linecap="round"/>
<polyline points="1291.0,275.2 1270.5,197.5" fill="none" stroke="#5e5430" stroke-width="2.3" stroke-linecap="round"/>
<polyline points="1301.8,221.0 1284.5,170.5" fill="none" stroke="#5e5430" stroke-width="2.3" stroke-linecap="round"/>
<polyline points="1299.0,240.0 1298.6,182.4" fill="none" stroke="#5e5430" stroke-width="2.3" stroke-linecap="round"/>
<polyline points="1308.0,236.3 1329.9,192.0" fill="none" stroke="#5e5430" stroke-width="2.3" stroke-linecap="round"/>
<polyline points="1299.6,245.0 1350.4,190.0" fill="none" stroke="#5e5430" stroke-width="2.3" stroke-linecap="round"/>
<polyline points="1281.3,317.3 1291.0,275.2 1299.6,236.3 1319.0,158.6" fill="none" stroke="#b8a66c" stroke-width="1.1" stroke-linecap="round"/>
<polyline points="1291.0,275.2 1270.5,197.5" fill="none" stroke="#b8a66c" stroke-width="1.1" stroke-linecap="round"/>
<polyline points="1301.8,221.0 1284.5,170.5" fill="none" stroke="#b8a66c" stroke-width="1.1" stroke-linecap="round"/>
<polyline points="1299.0,240.0 1298.6,182.4" fill="none" stroke="#b8a66c" stroke-width="1.1" stroke-linecap="round"/>
<polyline points="1308.0,236.3 1329.9,192.0" fill="none" stroke="#b8a66c" stroke-width="1.1" stroke-linecap="round"/>
<polyline points="1299.6,245.0 1350.4,190.0" fill="none" stroke="#b8a66c" stroke-width="1.1" stroke-linecap="round"/>
<g stroke="#7a7a7a" stroke-width="0.8" fill="#fff">
<polygon points="1463.3,94.4 1486.0,87.2 1509.0,94.0 1486.3,105.9" fill="#fff"/>
<polygon points="1463.3,94.4 1486.3,105.9 1486.7,134.3 1467.2,118.8" fill="#fff"/>
<polygon points="1486.3,105.9 1509.0,94.0 1506.0,118.8 1486.7,134.3" fill="#fff"/>
</g>
<text x="0" y="2" text-anchor="middle" font-family="Liberation Sans" font-size="6.5" font-weight="bold" fill="#111" transform="translate(1476,115.5) rotate(36)">Right</text>
<text x="0" y="2" text-anchor="middle" font-family="Liberation Sans" font-size="6" font-weight="bold" font-style="italic" fill="#111" transform="translate(1496.5,114) rotate(-42)">Right</text>
<text x="0" y="2" text-anchor="middle" font-family="Liberation Sans" font-size="6" font-weight="bold" fill="#111" transform="translate(1486.5,95.5) rotate(205)">Front</text>
<line x1="562.3" y1="723.3" x2="562.3" y2="695" stroke="#0000e0" stroke-width="1.6"/>
<polygon points="562.3,686 558.8,696.5 565.8,696.5" fill="#0000d8"/>
<line x1="562.3" y1="723.3" x2="585" y2="711" stroke="#10e010" stroke-width="1.6"/>
<polygon points="594,705.5 582,708 585.5,714" fill="#10e010"/>
<circle cx="585" cy="710.5" r="2.5" fill="#0a8a0a"/>
<line x1="562.3" y1="723.3" x2="586" y2="736" stroke="#c00000" stroke-width="1.6"/>
<polygon points="595,741 584,738.5 587.5,732.5" fill="#b00000"/>
</svg>
<!-- /SCENE -->
<!-- TOOLBAR -->
<svg class="abs" style="left:540px;top:44px" width="990" height="26" viewBox="540 44 990 26">
  <g stroke-linejoin="round" stroke-linecap="round">
  <!-- layers -->
  <path d="M547.5 59.8 H556 L560 63.6 H551.5 Z" fill="#fff" stroke="#2e2e2e" stroke-width="1.1"/>
  <path d="M547.5 56.5 H556 L560 60.3 H551.5 Z" fill="#fff" stroke="#2e2e2e" stroke-width="1.1"/>
  <path d="M547.5 53.2 H556 L560 57 H551.5 Z" fill="#8ccbe8" stroke="#2e2e2e" stroke-width="1.1"/>
  </g>
  <rect x="565" y="49" width="1" height="18" fill="#c4c4c4"/>
  <!-- axes -->
  <path d="M577.5 53 V59.5 L572 64.2 M577.5 59.5 L583 62.6" fill="none" stroke="#5b9bbd" stroke-width="1.3"/>
  <!-- cube -->
  <path d="M591.5 54.5 L597 52.3 L602.5 54.2 V61.6 L597 64.6 L591.5 61.6 Z" fill="#a9d5ec" stroke="#2b3640" stroke-width="1"/>
  <path d="M591.5 54.5 L597 56.2 L602.5 54.2 M597 56.2 V64.6" fill="none" stroke="#2b3640" stroke-width="0.9"/>
  <path d="M597 56.2 L602.5 54.2 V61.6 L597 64.6 Z" fill="#8cc3e0"/>
  <path d="M597 56.2 V64.6" stroke="#2b3640" stroke-width="0.9"/>
  <!-- rotate cube -->
  <ellipse cx="616" cy="60.5" rx="6.3" ry="3" fill="none" stroke="#8c8c8c" stroke-width="1.2"/>
  <path d="M613 54.5 L615 52.5 H621 V59 L619 61 H613 Z" fill="#a9d5ec" stroke="#1e1e1e" stroke-width="1"/>
  <path d="M613 54.5 H619 V61 M619 54.5 L621 52.5" fill="none" stroke="#1e1e1e" stroke-width="0.9"/>
  <path d="M614.5 62.5 L617 63.5 L615 65 Z" fill="#222"/>
  <!-- orbit -->
  <path d="M632 56.5 Q628 58 630 60.5 Q633 62.5 637 62 M640 57 Q643 59 641 61" fill="none" stroke="#6a6a6a" stroke-width="1.2"/>
  <circle cx="635" cy="56.5" r="3.3" fill="#000"/>
  <path d="M637.5 61 L640.5 62.5 L638 64 Z" fill="#333"/>
  <!-- anchor -->
  <circle cx="654.5" cy="54.6" r="1.6" fill="none" stroke="#222" stroke-width="1"/>
  <path d="M654.5 56.2 V63.3" stroke="#222" stroke-width="1.2"/>
  <ellipse cx="654.7" cy="59.8" rx="6" ry="2.6" fill="none" stroke="#222" stroke-width="1.1"/>
  <path d="M657.5 61.8 L660.5 61 L659.5 63.5 Z" fill="#222"/>
  <rect x="666" y="49" width="1" height="18" fill="#c4c4c4"/>
  <!-- split -->
  <rect x="673.8" y="53.6" width="4.6" height="9.4" fill="#a9d5ec" stroke="#3a4650" stroke-width="1"/>
  <rect x="678.4" y="53.6" width="4.6" height="9.4" fill="#ffc4c4" stroke="#ff2a2a" stroke-width="1"/>
  <path d="M678.4 53.6 V63" stroke="#222" stroke-width="1" stroke-dasharray="1 1"/>
  <!-- green diag -->
  <path d="M692.6 53.6 H702.6 V63.4 H692.6 Z" fill="#a9d5ec" stroke="#46525c" stroke-width="1"/>
  <path d="M692.6 53.6 H702.6 L692.6 63.4 Z" fill="#62f062"/>
  <path d="M692.6 53.6 H702.6 M692.6 53.6 V63.4" stroke="#44cc44" stroke-width="1"/>
  <path d="M691.8 64 L703.2 52.8" stroke="#222" stroke-width="1" stroke-dasharray="1.2 0.8"/>
  <!-- purple box -->
  <rect x="711.6" y="53.6" width="10.4" height="9.4" rx="1" fill="#a9d5ec" stroke="#2e3a44" stroke-width="1"/>
  <rect x="712.2" y="54.1" width="9.2" height="1.8" fill="#6b63e6"/>
  <rect x="712.2" y="55.9" width="9.2" height="2.2" fill="#d6d0ff"/>
  <path d="M712.5 58.3 H721" stroke="#333" stroke-width="0.9" stroke-dasharray="1 0.8"/>
  <!-- eye -->
  <path d="M740.8 53.2 L731.2 64" stroke="#222" stroke-width="1.1"/>
  <path d="M729.4 58.6 C732 54.2 740 54.2 742.6 58.6 C740 63 732 63 729.4 58.6 Z" fill="#000"/>
  <circle cx="736" cy="58.6" r="2.3" fill="#333" stroke="#c8c8c8" stroke-width="1"/>
  <rect x="735.3" y="57.4" width="1.4" height="2.4" fill="#555"/>

  <!-- right icons -->
  <circle cx="1396.3" cy="56.6" r="3.8" fill="none" stroke="#333" stroke-width="1.1"/>
  <path d="M1399 59.5 L1402.3 63.5" stroke="#111" stroke-width="1.9"/>
  <path d="M1401.6 59 C1402.5 53 1396 51.5 1394.2 56.5 L1393.2 61" fill="none" stroke="#1616ff" stroke-width="1.6"/>
  <path d="M1390.3 61.2 L1396.3 61.6 L1392.8 65 Z" fill="#1616ff"/>

  <circle cx="1416.3" cy="57.8" r="5.2" fill="#fff" stroke="#333" stroke-width="1"/>
  <path d="M1420 61.8 L1422.8 64.5" stroke="#111" stroke-width="1.9"/>
  <path d="M1416.3 53.3 L1418 55.3 H1414.6 Z M1416.3 62.3 L1418 60.3 H1414.6 Z M1411.8 57.8 L1413.8 56.1 V59.5 Z M1420.8 57.8 L1418.8 56.1 V59.5 Z" fill="#1616ff"/>
  <path d="M1416.3 55 V60.6 M1413.5 57.8 H1419.1" stroke="#1616ff" stroke-width="0.8" stroke-dasharray="0.8 0.8"/>

  <circle cx="1436.4" cy="57.8" r="5.2" fill="#fff" stroke="#333" stroke-width="1"/>
  <path d="M1440.1 61.8 L1442.9 64.5" stroke="#111" stroke-width="1.9"/>
  <circle cx="1434.4" cy="58.8" r="0.8" fill="#1616ff"/>
  <text x="1435.5" y="61.2" font-family="Liberation Sans" font-size="7.5" font-weight="bold" fill="#1616ff">2</text>

  <path d="M1452.5 62 C1449 58 1451 52.5 1456 52.5 C1458.5 52.5 1460 53.5 1461 55" fill="none" stroke="#2a2aff" stroke-width="1.3"/>
  <path d="M1462.8 51.8 V57 H1457.8 Z" fill="#1616ff"/>
  <path d="M1456 63.5 L1461.5 58" stroke="#c8b400" stroke-width="2.6"/>
  <path d="M1456 63.5 L1461.5 58" stroke="#e8d800" stroke-width="1.2"/>
  <circle cx="1462" cy="57.5" r="1.1" fill="#e01010"/>
  <path d="M1450.5 64.6 H1457" stroke="#222" stroke-width="0.9"/>

  <rect x="1470.6" y="56.3" width="7.5" height="8.2" fill="none" stroke="#6a6aff" stroke-width="0.9" stroke-dasharray="1 0.9"/>
  <path d="M1471 56.6 H1478 V60 Q1474 60.5 1472 58 Z" fill="#cff6f8"/>
  <circle cx="1476.1" cy="56.3" r="3.7" fill="none" stroke="#222" stroke-width="1.1"/>
  <path d="M1478.7 59.2 L1482.5 62.6" stroke="#111" stroke-width="1.8"/>

  <path d="M1494 64.5 L1492.3 60 Q1492 58.5 1493 59 L1494 60 V54.5 Q1494.8 53.6 1495.6 54.5 V53.2 Q1496.5 52.3 1497.4 53.2 V53.8 Q1498.3 53 1499.2 53.8 V54.8 Q1500.2 54.2 1501 55 V61 Q1501 63 1500 64.5 Z" fill="#fff" stroke="#444" stroke-width="0.9"/>
  <path d="M1495.6 54.5 V58 M1497.4 53.8 V58 M1499.2 54.5 V58" stroke="#777" stroke-width="0.6"/>

  <rect x="1510.6" y="52.6" width="11" height="8" fill="#fff" stroke="#555" stroke-width="0.9"/>
  <rect x="1511.1" y="53.1" width="10" height="2.2" fill="#00e4e8"/>
  <rect x="1515.6" y="57.6" width="7" height="7" fill="#fff" stroke="#444" stroke-width="0.9"/>
  <path d="M1512 58.5 Q1515 55.5 1517.5 58 L1520.5 61.5" fill="none" stroke="#1616ff" stroke-width="1.4"/>
  <path d="M1518 62.8 L1522 63.3 L1521.4 59.3 Z" fill="#1616ff"/>
</svg>

<!-- /TOOLBAR -->
<div class="abs" style="left:799px;top:779px;width:148px;height:20px;background:#e1e1e1;border:1px solid #adadad"></div>
<div class="abs txt" style="left:808px;top:784px;letter-spacing:-0.25px">Add IFC to the selected project</div>
<svg class="abs" style="left:828px;top:811px" width="11" height="11" viewBox="0 0 11 11"><rect x="0.5" y="0.5" width="10" height="10" fill="#fff" stroke="#333"/><path d="M2 5.5 L4.5 8 L9 2.5" fill="none" stroke="#333" stroke-width="1.1"/></svg>
<div class="abs txt" style="left:841px;top:812px;letter-spacing:-0.44px">Generate glTF file</div>
<div class="abs" style="left:0;top:832px;width:1536px;height:2px;background:#d3e3ee"></div>
<div class="abs" style="left:39px;top:832px;width:273px;height:2px;background:#f4f6f8"></div>
<div class="abs" style="left:1073px;top:832px;width:37px;height:2px;background:#f4f6f8"></div>

</body></html>
